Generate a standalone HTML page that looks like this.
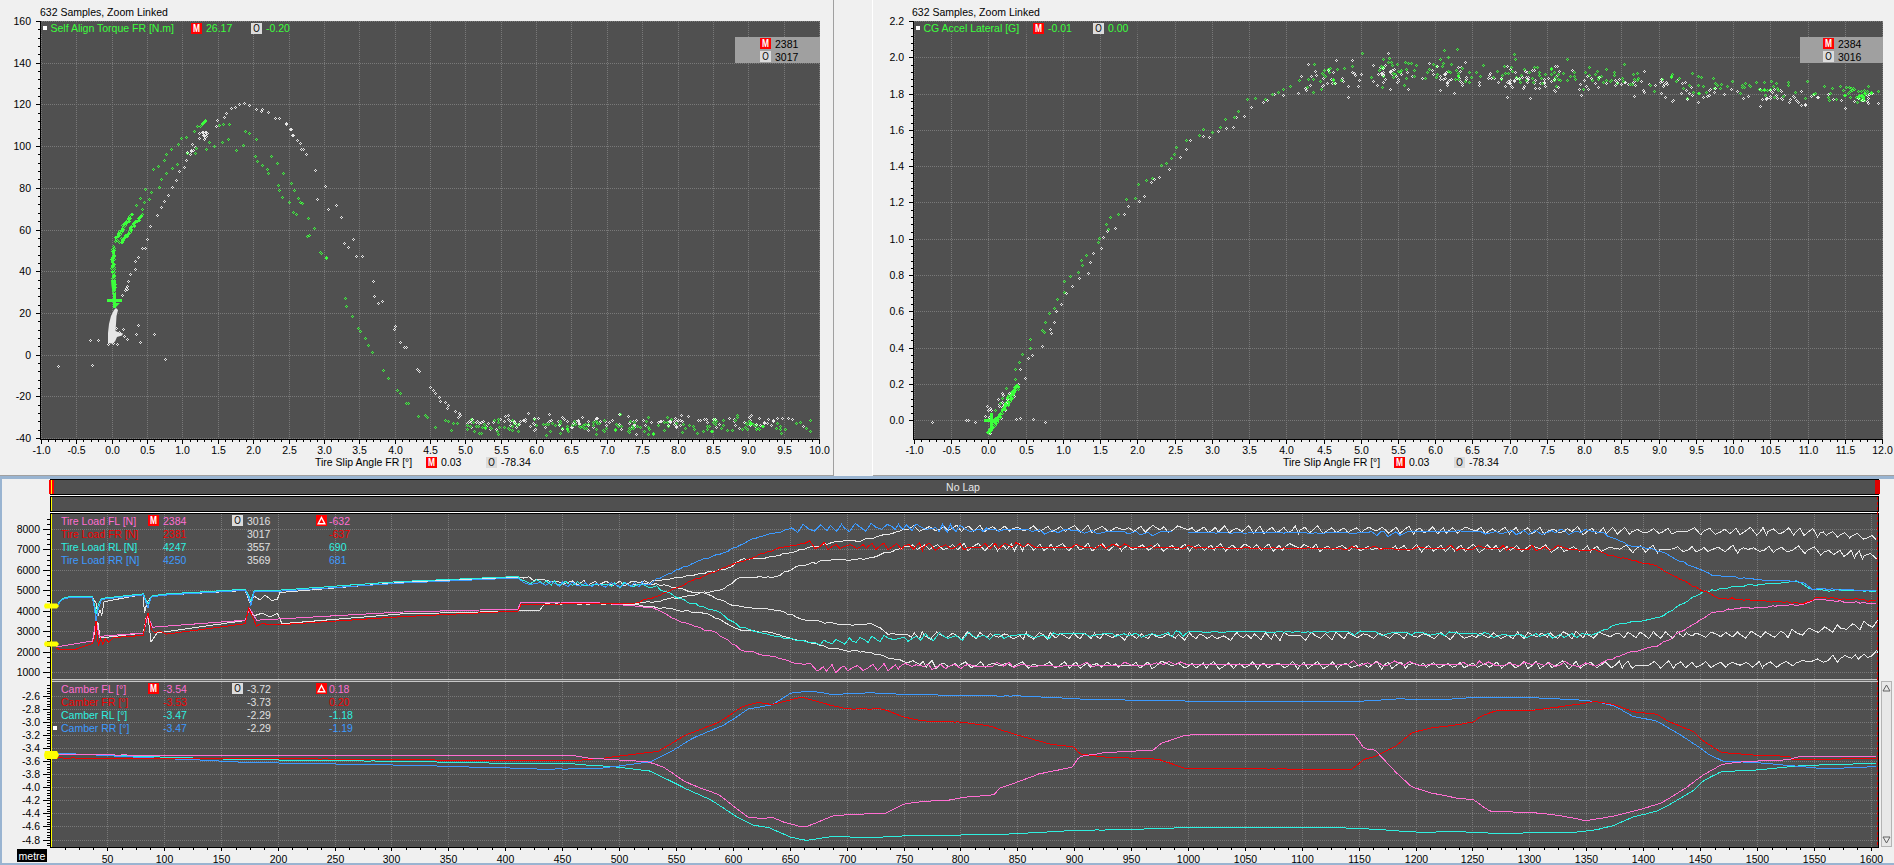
<!DOCTYPE html><html><head><meta charset="utf-8"><style>html,body{margin:0;padding:0;background:#f0f0f0;width:1894px;height:865px;overflow:hidden}svg{display:block}</style></head><body>
<svg width="1894" height="865" viewBox="0 0 1894 865" font-family="Liberation Sans, sans-serif">
<rect x="0" y="0" width="1894" height="865" fill="#f0f0f0"/>
<rect x="41" y="21" width="779" height="418" fill="#505050"/>
<path d="M41.5 22V439" stroke="#797979" stroke-dasharray="1 1"/>
<path d="M76.5 22V439" stroke="#797979" stroke-dasharray="1 1"/>
<path d="M112.5 22V439" stroke="#797979" stroke-dasharray="1 1"/>
<path d="M147.5 22V439" stroke="#797979" stroke-dasharray="1 1"/>
<path d="M182.5 22V439" stroke="#797979" stroke-dasharray="1 1"/>
<path d="M218.5 22V439" stroke="#797979" stroke-dasharray="1 1"/>
<path d="M253.5 22V439" stroke="#797979" stroke-dasharray="1 1"/>
<path d="M289.5 22V439" stroke="#797979" stroke-dasharray="1 1"/>
<path d="M324.5 22V439" stroke="#797979" stroke-dasharray="1 1"/>
<path d="M359.5 22V439" stroke="#797979" stroke-dasharray="1 1"/>
<path d="M395.5 22V439" stroke="#797979" stroke-dasharray="1 1"/>
<path d="M430.5 22V439" stroke="#797979" stroke-dasharray="1 1"/>
<path d="M465.5 22V439" stroke="#797979" stroke-dasharray="1 1"/>
<path d="M501.5 22V439" stroke="#797979" stroke-dasharray="1 1"/>
<path d="M536.5 22V439" stroke="#797979" stroke-dasharray="1 1"/>
<path d="M571.5 22V439" stroke="#797979" stroke-dasharray="1 1"/>
<path d="M607.5 22V439" stroke="#797979" stroke-dasharray="1 1"/>
<path d="M642.5 22V439" stroke="#797979" stroke-dasharray="1 1"/>
<path d="M678.5 22V439" stroke="#797979" stroke-dasharray="1 1"/>
<path d="M713.5 22V439" stroke="#797979" stroke-dasharray="1 1"/>
<path d="M748.5 22V439" stroke="#797979" stroke-dasharray="1 1"/>
<path d="M784.5 22V439" stroke="#797979" stroke-dasharray="1 1"/>
<path d="M819.5 22V439" stroke="#797979" stroke-dasharray="1 1"/>
<path d="M42 21.5H820" stroke="#797979" stroke-dasharray="1 1"/>
<path d="M42 63.5H820" stroke="#797979" stroke-dasharray="1 1"/>
<path d="M42 104.5H820" stroke="#797979" stroke-dasharray="1 1"/>
<path d="M42 146.5H820" stroke="#797979" stroke-dasharray="1 1"/>
<path d="M42 188.5H820" stroke="#797979" stroke-dasharray="1 1"/>
<path d="M42 230.5H820" stroke="#797979" stroke-dasharray="1 1"/>
<path d="M42 271.5H820" stroke="#797979" stroke-dasharray="1 1"/>
<path d="M42 313.5H820" stroke="#797979" stroke-dasharray="1 1"/>
<path d="M42 355.5H820" stroke="#797979" stroke-dasharray="1 1"/>
<path d="M42 396.5H820" stroke="#797979" stroke-dasharray="1 1"/>
<path d="M42 438.5H820" stroke="#797979" stroke-dasharray="1 1"/>
<rect x="40" y="21" width="1" height="419" fill="#000"/>
<rect x="40" y="439" width="780" height="1" fill="#000"/>
<rect x="41" y="440" width="1" height="4" fill="#000"/>
<text x="41.5" y="454" fill="#000" font-size="10.5" text-anchor="middle">-1.0</text>
<rect x="48" y="440" width="1" height="2" fill="#000"/>
<rect x="55" y="440" width="1" height="2" fill="#000"/>
<rect x="62" y="440" width="1" height="2" fill="#000"/>
<rect x="69" y="440" width="1" height="2" fill="#000"/>
<rect x="76" y="440" width="1" height="4" fill="#000"/>
<text x="76.5" y="454" fill="#000" font-size="10.5" text-anchor="middle">-0.5</text>
<rect x="83" y="440" width="1" height="2" fill="#000"/>
<rect x="91" y="440" width="1" height="2" fill="#000"/>
<rect x="98" y="440" width="1" height="2" fill="#000"/>
<rect x="105" y="440" width="1" height="2" fill="#000"/>
<rect x="112" y="440" width="1" height="4" fill="#000"/>
<text x="112.5" y="454" fill="#000" font-size="10.5" text-anchor="middle">0.0</text>
<rect x="119" y="440" width="1" height="2" fill="#000"/>
<rect x="126" y="440" width="1" height="2" fill="#000"/>
<rect x="133" y="440" width="1" height="2" fill="#000"/>
<rect x="140" y="440" width="1" height="2" fill="#000"/>
<rect x="147" y="440" width="1" height="4" fill="#000"/>
<text x="147.5" y="454" fill="#000" font-size="10.5" text-anchor="middle">0.5</text>
<rect x="154" y="440" width="1" height="2" fill="#000"/>
<rect x="161" y="440" width="1" height="2" fill="#000"/>
<rect x="168" y="440" width="1" height="2" fill="#000"/>
<rect x="175" y="440" width="1" height="2" fill="#000"/>
<rect x="182" y="440" width="1" height="4" fill="#000"/>
<text x="182.5" y="454" fill="#000" font-size="10.5" text-anchor="middle">1.0</text>
<rect x="190" y="440" width="1" height="2" fill="#000"/>
<rect x="197" y="440" width="1" height="2" fill="#000"/>
<rect x="204" y="440" width="1" height="2" fill="#000"/>
<rect x="211" y="440" width="1" height="2" fill="#000"/>
<rect x="218" y="440" width="1" height="4" fill="#000"/>
<text x="218.5" y="454" fill="#000" font-size="10.5" text-anchor="middle">1.5</text>
<rect x="225" y="440" width="1" height="2" fill="#000"/>
<rect x="232" y="440" width="1" height="2" fill="#000"/>
<rect x="239" y="440" width="1" height="2" fill="#000"/>
<rect x="246" y="440" width="1" height="2" fill="#000"/>
<rect x="253" y="440" width="1" height="4" fill="#000"/>
<text x="253.5" y="454" fill="#000" font-size="10.5" text-anchor="middle">2.0</text>
<rect x="260" y="440" width="1" height="2" fill="#000"/>
<rect x="267" y="440" width="1" height="2" fill="#000"/>
<rect x="274" y="440" width="1" height="2" fill="#000"/>
<rect x="281" y="440" width="1" height="2" fill="#000"/>
<rect x="289" y="440" width="1" height="4" fill="#000"/>
<text x="289.5" y="454" fill="#000" font-size="10.5" text-anchor="middle">2.5</text>
<rect x="296" y="440" width="1" height="2" fill="#000"/>
<rect x="303" y="440" width="1" height="2" fill="#000"/>
<rect x="310" y="440" width="1" height="2" fill="#000"/>
<rect x="317" y="440" width="1" height="2" fill="#000"/>
<rect x="324" y="440" width="1" height="4" fill="#000"/>
<text x="324.5" y="454" fill="#000" font-size="10.5" text-anchor="middle">3.0</text>
<rect x="331" y="440" width="1" height="2" fill="#000"/>
<rect x="338" y="440" width="1" height="2" fill="#000"/>
<rect x="345" y="440" width="1" height="2" fill="#000"/>
<rect x="352" y="440" width="1" height="2" fill="#000"/>
<rect x="359" y="440" width="1" height="4" fill="#000"/>
<text x="359.5" y="454" fill="#000" font-size="10.5" text-anchor="middle">3.5</text>
<rect x="366" y="440" width="1" height="2" fill="#000"/>
<rect x="373" y="440" width="1" height="2" fill="#000"/>
<rect x="380" y="440" width="1" height="2" fill="#000"/>
<rect x="388" y="440" width="1" height="2" fill="#000"/>
<rect x="395" y="440" width="1" height="4" fill="#000"/>
<text x="395.5" y="454" fill="#000" font-size="10.5" text-anchor="middle">4.0</text>
<rect x="402" y="440" width="1" height="2" fill="#000"/>
<rect x="409" y="440" width="1" height="2" fill="#000"/>
<rect x="416" y="440" width="1" height="2" fill="#000"/>
<rect x="423" y="440" width="1" height="2" fill="#000"/>
<rect x="430" y="440" width="1" height="4" fill="#000"/>
<text x="430.5" y="454" fill="#000" font-size="10.5" text-anchor="middle">4.5</text>
<rect x="437" y="440" width="1" height="2" fill="#000"/>
<rect x="444" y="440" width="1" height="2" fill="#000"/>
<rect x="451" y="440" width="1" height="2" fill="#000"/>
<rect x="458" y="440" width="1" height="2" fill="#000"/>
<rect x="465" y="440" width="1" height="4" fill="#000"/>
<text x="465.5" y="454" fill="#000" font-size="10.5" text-anchor="middle">5.0</text>
<rect x="472" y="440" width="1" height="2" fill="#000"/>
<rect x="480" y="440" width="1" height="2" fill="#000"/>
<rect x="487" y="440" width="1" height="2" fill="#000"/>
<rect x="494" y="440" width="1" height="2" fill="#000"/>
<rect x="501" y="440" width="1" height="4" fill="#000"/>
<text x="501.5" y="454" fill="#000" font-size="10.5" text-anchor="middle">5.5</text>
<rect x="508" y="440" width="1" height="2" fill="#000"/>
<rect x="515" y="440" width="1" height="2" fill="#000"/>
<rect x="522" y="440" width="1" height="2" fill="#000"/>
<rect x="529" y="440" width="1" height="2" fill="#000"/>
<rect x="536" y="440" width="1" height="4" fill="#000"/>
<text x="536.5" y="454" fill="#000" font-size="10.5" text-anchor="middle">6.0</text>
<rect x="543" y="440" width="1" height="2" fill="#000"/>
<rect x="550" y="440" width="1" height="2" fill="#000"/>
<rect x="557" y="440" width="1" height="2" fill="#000"/>
<rect x="564" y="440" width="1" height="2" fill="#000"/>
<rect x="571" y="440" width="1" height="4" fill="#000"/>
<text x="571.5" y="454" fill="#000" font-size="10.5" text-anchor="middle">6.5</text>
<rect x="579" y="440" width="1" height="2" fill="#000"/>
<rect x="586" y="440" width="1" height="2" fill="#000"/>
<rect x="593" y="440" width="1" height="2" fill="#000"/>
<rect x="600" y="440" width="1" height="2" fill="#000"/>
<rect x="607" y="440" width="1" height="4" fill="#000"/>
<text x="607.5" y="454" fill="#000" font-size="10.5" text-anchor="middle">7.0</text>
<rect x="614" y="440" width="1" height="2" fill="#000"/>
<rect x="621" y="440" width="1" height="2" fill="#000"/>
<rect x="628" y="440" width="1" height="2" fill="#000"/>
<rect x="635" y="440" width="1" height="2" fill="#000"/>
<rect x="642" y="440" width="1" height="4" fill="#000"/>
<text x="642.5" y="454" fill="#000" font-size="10.5" text-anchor="middle">7.5</text>
<rect x="649" y="440" width="1" height="2" fill="#000"/>
<rect x="656" y="440" width="1" height="2" fill="#000"/>
<rect x="663" y="440" width="1" height="2" fill="#000"/>
<rect x="670" y="440" width="1" height="2" fill="#000"/>
<rect x="678" y="440" width="1" height="4" fill="#000"/>
<text x="678.5" y="454" fill="#000" font-size="10.5" text-anchor="middle">8.0</text>
<rect x="685" y="440" width="1" height="2" fill="#000"/>
<rect x="692" y="440" width="1" height="2" fill="#000"/>
<rect x="699" y="440" width="1" height="2" fill="#000"/>
<rect x="706" y="440" width="1" height="2" fill="#000"/>
<rect x="713" y="440" width="1" height="4" fill="#000"/>
<text x="713.5" y="454" fill="#000" font-size="10.5" text-anchor="middle">8.5</text>
<rect x="720" y="440" width="1" height="2" fill="#000"/>
<rect x="727" y="440" width="1" height="2" fill="#000"/>
<rect x="734" y="440" width="1" height="2" fill="#000"/>
<rect x="741" y="440" width="1" height="2" fill="#000"/>
<rect x="748" y="440" width="1" height="4" fill="#000"/>
<text x="748.5" y="454" fill="#000" font-size="10.5" text-anchor="middle">9.0</text>
<rect x="755" y="440" width="1" height="2" fill="#000"/>
<rect x="762" y="440" width="1" height="2" fill="#000"/>
<rect x="769" y="440" width="1" height="2" fill="#000"/>
<rect x="777" y="440" width="1" height="2" fill="#000"/>
<rect x="784" y="440" width="1" height="4" fill="#000"/>
<text x="784.5" y="454" fill="#000" font-size="10.5" text-anchor="middle">9.5</text>
<rect x="791" y="440" width="1" height="2" fill="#000"/>
<rect x="798" y="440" width="1" height="2" fill="#000"/>
<rect x="805" y="440" width="1" height="2" fill="#000"/>
<rect x="812" y="440" width="1" height="2" fill="#000"/>
<rect x="819" y="440" width="1" height="4" fill="#000"/>
<text x="819.5" y="454" fill="#000" font-size="10.5" text-anchor="middle">10.0</text>
<rect x="36" y="21" width="4" height="1" fill="#000"/>
<text x="31" y="25" fill="#000" font-size="10.5" text-anchor="end">160</text>
<rect x="38" y="29" width="2" height="1" fill="#000"/>
<rect x="38" y="38" width="2" height="1" fill="#000"/>
<rect x="38" y="46" width="2" height="1" fill="#000"/>
<rect x="38" y="54" width="2" height="1" fill="#000"/>
<rect x="36" y="63" width="4" height="1" fill="#000"/>
<text x="31" y="67" fill="#000" font-size="10.5" text-anchor="end">140</text>
<rect x="38" y="71" width="2" height="1" fill="#000"/>
<rect x="38" y="79" width="2" height="1" fill="#000"/>
<rect x="38" y="88" width="2" height="1" fill="#000"/>
<rect x="38" y="96" width="2" height="1" fill="#000"/>
<rect x="36" y="104" width="4" height="1" fill="#000"/>
<text x="31" y="108" fill="#000" font-size="10.5" text-anchor="end">120</text>
<rect x="38" y="113" width="2" height="1" fill="#000"/>
<rect x="38" y="121" width="2" height="1" fill="#000"/>
<rect x="38" y="129" width="2" height="1" fill="#000"/>
<rect x="38" y="138" width="2" height="1" fill="#000"/>
<rect x="36" y="146" width="4" height="1" fill="#000"/>
<text x="31" y="150" fill="#000" font-size="10.5" text-anchor="end">100</text>
<rect x="38" y="154" width="2" height="1" fill="#000"/>
<rect x="38" y="163" width="2" height="1" fill="#000"/>
<rect x="38" y="171" width="2" height="1" fill="#000"/>
<rect x="38" y="179" width="2" height="1" fill="#000"/>
<rect x="36" y="188" width="4" height="1" fill="#000"/>
<text x="31" y="192" fill="#000" font-size="10.5" text-anchor="end">80</text>
<rect x="38" y="196" width="2" height="1" fill="#000"/>
<rect x="38" y="204" width="2" height="1" fill="#000"/>
<rect x="38" y="213" width="2" height="1" fill="#000"/>
<rect x="38" y="221" width="2" height="1" fill="#000"/>
<rect x="36" y="230" width="4" height="1" fill="#000"/>
<text x="31" y="234" fill="#000" font-size="10.5" text-anchor="end">60</text>
<rect x="38" y="238" width="2" height="1" fill="#000"/>
<rect x="38" y="246" width="2" height="1" fill="#000"/>
<rect x="38" y="255" width="2" height="1" fill="#000"/>
<rect x="38" y="263" width="2" height="1" fill="#000"/>
<rect x="36" y="271" width="4" height="1" fill="#000"/>
<text x="31" y="275" fill="#000" font-size="10.5" text-anchor="end">40</text>
<rect x="38" y="280" width="2" height="1" fill="#000"/>
<rect x="38" y="288" width="2" height="1" fill="#000"/>
<rect x="38" y="296" width="2" height="1" fill="#000"/>
<rect x="38" y="305" width="2" height="1" fill="#000"/>
<rect x="36" y="313" width="4" height="1" fill="#000"/>
<text x="31" y="317" fill="#000" font-size="10.5" text-anchor="end">20</text>
<rect x="38" y="321" width="2" height="1" fill="#000"/>
<rect x="38" y="330" width="2" height="1" fill="#000"/>
<rect x="38" y="338" width="2" height="1" fill="#000"/>
<rect x="38" y="346" width="2" height="1" fill="#000"/>
<rect x="36" y="355" width="4" height="1" fill="#000"/>
<text x="31" y="359" fill="#000" font-size="10.5" text-anchor="end">0</text>
<rect x="38" y="363" width="2" height="1" fill="#000"/>
<rect x="38" y="371" width="2" height="1" fill="#000"/>
<rect x="38" y="380" width="2" height="1" fill="#000"/>
<rect x="38" y="388" width="2" height="1" fill="#000"/>
<rect x="36" y="396" width="4" height="1" fill="#000"/>
<text x="31" y="400" fill="#000" font-size="10.5" text-anchor="end">-20</text>
<rect x="38" y="405" width="2" height="1" fill="#000"/>
<rect x="38" y="413" width="2" height="1" fill="#000"/>
<rect x="38" y="421" width="2" height="1" fill="#000"/>
<rect x="38" y="430" width="2" height="1" fill="#000"/>
<rect x="36" y="438" width="4" height="1" fill="#000"/>
<text x="31" y="442" fill="#000" font-size="10.5" text-anchor="end">-40</text>
<text x="40" y="16" fill="#000" font-size="10.5" text-anchor="start">632 Samples, Zoom Linked</text>
<rect x="914" y="21" width="969" height="418" fill="#505050"/>
<path d="M914.5 22V439" stroke="#797979" stroke-dasharray="1 1"/>
<path d="M951.5 22V439" stroke="#797979" stroke-dasharray="1 1"/>
<path d="M988.5 22V439" stroke="#797979" stroke-dasharray="1 1"/>
<path d="M1026.5 22V439" stroke="#797979" stroke-dasharray="1 1"/>
<path d="M1063.5 22V439" stroke="#797979" stroke-dasharray="1 1"/>
<path d="M1100.5 22V439" stroke="#797979" stroke-dasharray="1 1"/>
<path d="M1137.5 22V439" stroke="#797979" stroke-dasharray="1 1"/>
<path d="M1175.5 22V439" stroke="#797979" stroke-dasharray="1 1"/>
<path d="M1212.5 22V439" stroke="#797979" stroke-dasharray="1 1"/>
<path d="M1249.5 22V439" stroke="#797979" stroke-dasharray="1 1"/>
<path d="M1286.5 22V439" stroke="#797979" stroke-dasharray="1 1"/>
<path d="M1324.5 22V439" stroke="#797979" stroke-dasharray="1 1"/>
<path d="M1361.5 22V439" stroke="#797979" stroke-dasharray="1 1"/>
<path d="M1398.5 22V439" stroke="#797979" stroke-dasharray="1 1"/>
<path d="M1435.5 22V439" stroke="#797979" stroke-dasharray="1 1"/>
<path d="M1472.5 22V439" stroke="#797979" stroke-dasharray="1 1"/>
<path d="M1510.5 22V439" stroke="#797979" stroke-dasharray="1 1"/>
<path d="M1547.5 22V439" stroke="#797979" stroke-dasharray="1 1"/>
<path d="M1584.5 22V439" stroke="#797979" stroke-dasharray="1 1"/>
<path d="M1621.5 22V439" stroke="#797979" stroke-dasharray="1 1"/>
<path d="M1659.5 22V439" stroke="#797979" stroke-dasharray="1 1"/>
<path d="M1696.5 22V439" stroke="#797979" stroke-dasharray="1 1"/>
<path d="M1733.5 22V439" stroke="#797979" stroke-dasharray="1 1"/>
<path d="M1770.5 22V439" stroke="#797979" stroke-dasharray="1 1"/>
<path d="M1808.5 22V439" stroke="#797979" stroke-dasharray="1 1"/>
<path d="M1845.5 22V439" stroke="#797979" stroke-dasharray="1 1"/>
<path d="M1882.5 22V439" stroke="#797979" stroke-dasharray="1 1"/>
<path d="M914 21.5H1883" stroke="#797979" stroke-dasharray="1 1"/>
<path d="M914 57.5H1883" stroke="#797979" stroke-dasharray="1 1"/>
<path d="M914 94.5H1883" stroke="#797979" stroke-dasharray="1 1"/>
<path d="M914 130.5H1883" stroke="#797979" stroke-dasharray="1 1"/>
<path d="M914 166.5H1883" stroke="#797979" stroke-dasharray="1 1"/>
<path d="M914 202.5H1883" stroke="#797979" stroke-dasharray="1 1"/>
<path d="M914 239.5H1883" stroke="#797979" stroke-dasharray="1 1"/>
<path d="M914 275.5H1883" stroke="#797979" stroke-dasharray="1 1"/>
<path d="M914 311.5H1883" stroke="#797979" stroke-dasharray="1 1"/>
<path d="M914 348.5H1883" stroke="#797979" stroke-dasharray="1 1"/>
<path d="M914 384.5H1883" stroke="#797979" stroke-dasharray="1 1"/>
<path d="M914 420.5H1883" stroke="#797979" stroke-dasharray="1 1"/>
<rect x="913" y="21" width="1" height="419" fill="#000"/>
<rect x="913" y="439" width="970" height="1" fill="#000"/>
<rect x="914" y="440" width="1" height="4" fill="#000"/>
<text x="914.5" y="454" fill="#000" font-size="10.5" text-anchor="middle">-1.0</text>
<rect x="921" y="440" width="1" height="2" fill="#000"/>
<rect x="929" y="440" width="1" height="2" fill="#000"/>
<rect x="936" y="440" width="1" height="2" fill="#000"/>
<rect x="944" y="440" width="1" height="2" fill="#000"/>
<rect x="951" y="440" width="1" height="4" fill="#000"/>
<text x="951.5" y="454" fill="#000" font-size="10.5" text-anchor="middle">-0.5</text>
<rect x="959" y="440" width="1" height="2" fill="#000"/>
<rect x="966" y="440" width="1" height="2" fill="#000"/>
<rect x="974" y="440" width="1" height="2" fill="#000"/>
<rect x="981" y="440" width="1" height="2" fill="#000"/>
<rect x="988" y="440" width="1" height="4" fill="#000"/>
<text x="988.5" y="454" fill="#000" font-size="10.5" text-anchor="middle">0.0</text>
<rect x="996" y="440" width="1" height="2" fill="#000"/>
<rect x="1003" y="440" width="1" height="2" fill="#000"/>
<rect x="1011" y="440" width="1" height="2" fill="#000"/>
<rect x="1018" y="440" width="1" height="2" fill="#000"/>
<rect x="1026" y="440" width="1" height="4" fill="#000"/>
<text x="1026.5" y="454" fill="#000" font-size="10.5" text-anchor="middle">0.5</text>
<rect x="1033" y="440" width="1" height="2" fill="#000"/>
<rect x="1041" y="440" width="1" height="2" fill="#000"/>
<rect x="1048" y="440" width="1" height="2" fill="#000"/>
<rect x="1055" y="440" width="1" height="2" fill="#000"/>
<rect x="1063" y="440" width="1" height="4" fill="#000"/>
<text x="1063.5" y="454" fill="#000" font-size="10.5" text-anchor="middle">1.0</text>
<rect x="1070" y="440" width="1" height="2" fill="#000"/>
<rect x="1078" y="440" width="1" height="2" fill="#000"/>
<rect x="1085" y="440" width="1" height="2" fill="#000"/>
<rect x="1093" y="440" width="1" height="2" fill="#000"/>
<rect x="1100" y="440" width="1" height="4" fill="#000"/>
<text x="1100.5" y="454" fill="#000" font-size="10.5" text-anchor="middle">1.5</text>
<rect x="1108" y="440" width="1" height="2" fill="#000"/>
<rect x="1115" y="440" width="1" height="2" fill="#000"/>
<rect x="1122" y="440" width="1" height="2" fill="#000"/>
<rect x="1130" y="440" width="1" height="2" fill="#000"/>
<rect x="1137" y="440" width="1" height="4" fill="#000"/>
<text x="1137.5" y="454" fill="#000" font-size="10.5" text-anchor="middle">2.0</text>
<rect x="1145" y="440" width="1" height="2" fill="#000"/>
<rect x="1152" y="440" width="1" height="2" fill="#000"/>
<rect x="1160" y="440" width="1" height="2" fill="#000"/>
<rect x="1167" y="440" width="1" height="2" fill="#000"/>
<rect x="1175" y="440" width="1" height="4" fill="#000"/>
<text x="1175.5" y="454" fill="#000" font-size="10.5" text-anchor="middle">2.5</text>
<rect x="1182" y="440" width="1" height="2" fill="#000"/>
<rect x="1190" y="440" width="1" height="2" fill="#000"/>
<rect x="1197" y="440" width="1" height="2" fill="#000"/>
<rect x="1204" y="440" width="1" height="2" fill="#000"/>
<rect x="1212" y="440" width="1" height="4" fill="#000"/>
<text x="1212.5" y="454" fill="#000" font-size="10.5" text-anchor="middle">3.0</text>
<rect x="1219" y="440" width="1" height="2" fill="#000"/>
<rect x="1227" y="440" width="1" height="2" fill="#000"/>
<rect x="1234" y="440" width="1" height="2" fill="#000"/>
<rect x="1242" y="440" width="1" height="2" fill="#000"/>
<rect x="1249" y="440" width="1" height="4" fill="#000"/>
<text x="1249.5" y="454" fill="#000" font-size="10.5" text-anchor="middle">3.5</text>
<rect x="1257" y="440" width="1" height="2" fill="#000"/>
<rect x="1264" y="440" width="1" height="2" fill="#000"/>
<rect x="1271" y="440" width="1" height="2" fill="#000"/>
<rect x="1279" y="440" width="1" height="2" fill="#000"/>
<rect x="1286" y="440" width="1" height="4" fill="#000"/>
<text x="1286.5" y="454" fill="#000" font-size="10.5" text-anchor="middle">4.0</text>
<rect x="1294" y="440" width="1" height="2" fill="#000"/>
<rect x="1301" y="440" width="1" height="2" fill="#000"/>
<rect x="1309" y="440" width="1" height="2" fill="#000"/>
<rect x="1316" y="440" width="1" height="2" fill="#000"/>
<rect x="1324" y="440" width="1" height="4" fill="#000"/>
<text x="1324.5" y="454" fill="#000" font-size="10.5" text-anchor="middle">4.5</text>
<rect x="1331" y="440" width="1" height="2" fill="#000"/>
<rect x="1338" y="440" width="1" height="2" fill="#000"/>
<rect x="1346" y="440" width="1" height="2" fill="#000"/>
<rect x="1353" y="440" width="1" height="2" fill="#000"/>
<rect x="1361" y="440" width="1" height="4" fill="#000"/>
<text x="1361.5" y="454" fill="#000" font-size="10.5" text-anchor="middle">5.0</text>
<rect x="1368" y="440" width="1" height="2" fill="#000"/>
<rect x="1376" y="440" width="1" height="2" fill="#000"/>
<rect x="1383" y="440" width="1" height="2" fill="#000"/>
<rect x="1391" y="440" width="1" height="2" fill="#000"/>
<rect x="1398" y="440" width="1" height="4" fill="#000"/>
<text x="1398.5" y="454" fill="#000" font-size="10.5" text-anchor="middle">5.5</text>
<rect x="1405" y="440" width="1" height="2" fill="#000"/>
<rect x="1413" y="440" width="1" height="2" fill="#000"/>
<rect x="1420" y="440" width="1" height="2" fill="#000"/>
<rect x="1428" y="440" width="1" height="2" fill="#000"/>
<rect x="1435" y="440" width="1" height="4" fill="#000"/>
<text x="1435.5" y="454" fill="#000" font-size="10.5" text-anchor="middle">6.0</text>
<rect x="1443" y="440" width="1" height="2" fill="#000"/>
<rect x="1450" y="440" width="1" height="2" fill="#000"/>
<rect x="1458" y="440" width="1" height="2" fill="#000"/>
<rect x="1465" y="440" width="1" height="2" fill="#000"/>
<rect x="1472" y="440" width="1" height="4" fill="#000"/>
<text x="1472.5" y="454" fill="#000" font-size="10.5" text-anchor="middle">6.5</text>
<rect x="1480" y="440" width="1" height="2" fill="#000"/>
<rect x="1487" y="440" width="1" height="2" fill="#000"/>
<rect x="1495" y="440" width="1" height="2" fill="#000"/>
<rect x="1502" y="440" width="1" height="2" fill="#000"/>
<rect x="1510" y="440" width="1" height="4" fill="#000"/>
<text x="1510.5" y="454" fill="#000" font-size="10.5" text-anchor="middle">7.0</text>
<rect x="1517" y="440" width="1" height="2" fill="#000"/>
<rect x="1525" y="440" width="1" height="2" fill="#000"/>
<rect x="1532" y="440" width="1" height="2" fill="#000"/>
<rect x="1539" y="440" width="1" height="2" fill="#000"/>
<rect x="1547" y="440" width="1" height="4" fill="#000"/>
<text x="1547.5" y="454" fill="#000" font-size="10.5" text-anchor="middle">7.5</text>
<rect x="1554" y="440" width="1" height="2" fill="#000"/>
<rect x="1562" y="440" width="1" height="2" fill="#000"/>
<rect x="1569" y="440" width="1" height="2" fill="#000"/>
<rect x="1577" y="440" width="1" height="2" fill="#000"/>
<rect x="1584" y="440" width="1" height="4" fill="#000"/>
<text x="1584.5" y="454" fill="#000" font-size="10.5" text-anchor="middle">8.0</text>
<rect x="1592" y="440" width="1" height="2" fill="#000"/>
<rect x="1599" y="440" width="1" height="2" fill="#000"/>
<rect x="1606" y="440" width="1" height="2" fill="#000"/>
<rect x="1614" y="440" width="1" height="2" fill="#000"/>
<rect x="1621" y="440" width="1" height="4" fill="#000"/>
<text x="1621.5" y="454" fill="#000" font-size="10.5" text-anchor="middle">8.5</text>
<rect x="1629" y="440" width="1" height="2" fill="#000"/>
<rect x="1636" y="440" width="1" height="2" fill="#000"/>
<rect x="1644" y="440" width="1" height="2" fill="#000"/>
<rect x="1651" y="440" width="1" height="2" fill="#000"/>
<rect x="1659" y="440" width="1" height="4" fill="#000"/>
<text x="1659.5" y="454" fill="#000" font-size="10.5" text-anchor="middle">9.0</text>
<rect x="1666" y="440" width="1" height="2" fill="#000"/>
<rect x="1674" y="440" width="1" height="2" fill="#000"/>
<rect x="1681" y="440" width="1" height="2" fill="#000"/>
<rect x="1688" y="440" width="1" height="2" fill="#000"/>
<rect x="1696" y="440" width="1" height="4" fill="#000"/>
<text x="1696.5" y="454" fill="#000" font-size="10.5" text-anchor="middle">9.5</text>
<rect x="1703" y="440" width="1" height="2" fill="#000"/>
<rect x="1711" y="440" width="1" height="2" fill="#000"/>
<rect x="1718" y="440" width="1" height="2" fill="#000"/>
<rect x="1726" y="440" width="1" height="2" fill="#000"/>
<rect x="1733" y="440" width="1" height="4" fill="#000"/>
<text x="1733.5" y="454" fill="#000" font-size="10.5" text-anchor="middle">10.0</text>
<rect x="1741" y="440" width="1" height="2" fill="#000"/>
<rect x="1748" y="440" width="1" height="2" fill="#000"/>
<rect x="1755" y="440" width="1" height="2" fill="#000"/>
<rect x="1763" y="440" width="1" height="2" fill="#000"/>
<rect x="1770" y="440" width="1" height="4" fill="#000"/>
<text x="1770.5" y="454" fill="#000" font-size="10.5" text-anchor="middle">10.5</text>
<rect x="1778" y="440" width="1" height="2" fill="#000"/>
<rect x="1785" y="440" width="1" height="2" fill="#000"/>
<rect x="1793" y="440" width="1" height="2" fill="#000"/>
<rect x="1800" y="440" width="1" height="2" fill="#000"/>
<rect x="1808" y="440" width="1" height="4" fill="#000"/>
<text x="1808.5" y="454" fill="#000" font-size="10.5" text-anchor="middle">11.0</text>
<rect x="1815" y="440" width="1" height="2" fill="#000"/>
<rect x="1822" y="440" width="1" height="2" fill="#000"/>
<rect x="1830" y="440" width="1" height="2" fill="#000"/>
<rect x="1837" y="440" width="1" height="2" fill="#000"/>
<rect x="1845" y="440" width="1" height="4" fill="#000"/>
<text x="1845.5" y="454" fill="#000" font-size="10.5" text-anchor="middle">11.5</text>
<rect x="1852" y="440" width="1" height="2" fill="#000"/>
<rect x="1860" y="440" width="1" height="2" fill="#000"/>
<rect x="1867" y="440" width="1" height="2" fill="#000"/>
<rect x="1875" y="440" width="1" height="2" fill="#000"/>
<rect x="1882" y="440" width="1" height="4" fill="#000"/>
<text x="1882.5" y="454" fill="#000" font-size="10.5" text-anchor="middle">12.0</text>
<rect x="909" y="21" width="4" height="1" fill="#000"/>
<text x="904" y="25" fill="#000" font-size="10.5" text-anchor="end">2.2</text>
<rect x="911" y="28" width="2" height="1" fill="#000"/>
<rect x="911" y="36" width="2" height="1" fill="#000"/>
<rect x="911" y="43" width="2" height="1" fill="#000"/>
<rect x="911" y="50" width="2" height="1" fill="#000"/>
<rect x="909" y="57" width="4" height="1" fill="#000"/>
<text x="904" y="61" fill="#000" font-size="10.5" text-anchor="end">2.0</text>
<rect x="911" y="65" width="2" height="1" fill="#000"/>
<rect x="911" y="72" width="2" height="1" fill="#000"/>
<rect x="911" y="79" width="2" height="1" fill="#000"/>
<rect x="911" y="86" width="2" height="1" fill="#000"/>
<rect x="909" y="94" width="4" height="1" fill="#000"/>
<text x="904" y="98" fill="#000" font-size="10.5" text-anchor="end">1.8</text>
<rect x="911" y="101" width="2" height="1" fill="#000"/>
<rect x="911" y="108" width="2" height="1" fill="#000"/>
<rect x="911" y="115" width="2" height="1" fill="#000"/>
<rect x="911" y="123" width="2" height="1" fill="#000"/>
<rect x="909" y="130" width="4" height="1" fill="#000"/>
<text x="904" y="134" fill="#000" font-size="10.5" text-anchor="end">1.6</text>
<rect x="911" y="137" width="2" height="1" fill="#000"/>
<rect x="911" y="144" width="2" height="1" fill="#000"/>
<rect x="911" y="152" width="2" height="1" fill="#000"/>
<rect x="911" y="159" width="2" height="1" fill="#000"/>
<rect x="909" y="166" width="4" height="1" fill="#000"/>
<text x="904" y="170" fill="#000" font-size="10.5" text-anchor="end">1.4</text>
<rect x="911" y="173" width="2" height="1" fill="#000"/>
<rect x="911" y="181" width="2" height="1" fill="#000"/>
<rect x="911" y="188" width="2" height="1" fill="#000"/>
<rect x="911" y="195" width="2" height="1" fill="#000"/>
<rect x="909" y="202" width="4" height="1" fill="#000"/>
<text x="904" y="206" fill="#000" font-size="10.5" text-anchor="end">1.2</text>
<rect x="911" y="210" width="2" height="1" fill="#000"/>
<rect x="911" y="217" width="2" height="1" fill="#000"/>
<rect x="911" y="224" width="2" height="1" fill="#000"/>
<rect x="911" y="232" width="2" height="1" fill="#000"/>
<rect x="909" y="239" width="4" height="1" fill="#000"/>
<text x="904" y="243" fill="#000" font-size="10.5" text-anchor="end">1.0</text>
<rect x="911" y="246" width="2" height="1" fill="#000"/>
<rect x="911" y="253" width="2" height="1" fill="#000"/>
<rect x="911" y="261" width="2" height="1" fill="#000"/>
<rect x="911" y="268" width="2" height="1" fill="#000"/>
<rect x="909" y="275" width="4" height="1" fill="#000"/>
<text x="904" y="279" fill="#000" font-size="10.5" text-anchor="end">0.8</text>
<rect x="911" y="282" width="2" height="1" fill="#000"/>
<rect x="911" y="290" width="2" height="1" fill="#000"/>
<rect x="911" y="297" width="2" height="1" fill="#000"/>
<rect x="911" y="304" width="2" height="1" fill="#000"/>
<rect x="909" y="311" width="4" height="1" fill="#000"/>
<text x="904" y="315" fill="#000" font-size="10.5" text-anchor="end">0.6</text>
<rect x="911" y="319" width="2" height="1" fill="#000"/>
<rect x="911" y="326" width="2" height="1" fill="#000"/>
<rect x="911" y="333" width="2" height="1" fill="#000"/>
<rect x="911" y="340" width="2" height="1" fill="#000"/>
<rect x="909" y="348" width="4" height="1" fill="#000"/>
<text x="904" y="352" fill="#000" font-size="10.5" text-anchor="end">0.4</text>
<rect x="911" y="355" width="2" height="1" fill="#000"/>
<rect x="911" y="362" width="2" height="1" fill="#000"/>
<rect x="911" y="369" width="2" height="1" fill="#000"/>
<rect x="911" y="377" width="2" height="1" fill="#000"/>
<rect x="909" y="384" width="4" height="1" fill="#000"/>
<text x="904" y="388" fill="#000" font-size="10.5" text-anchor="end">0.2</text>
<rect x="911" y="391" width="2" height="1" fill="#000"/>
<rect x="911" y="399" width="2" height="1" fill="#000"/>
<rect x="911" y="406" width="2" height="1" fill="#000"/>
<rect x="911" y="413" width="2" height="1" fill="#000"/>
<rect x="909" y="420" width="4" height="1" fill="#000"/>
<text x="904" y="424" fill="#000" font-size="10.5" text-anchor="end">0.0</text>
<text x="912" y="16" fill="#000" font-size="10.5" text-anchor="start">632 Samples, Zoom Linked</text>
<path d="M122 294h1v1h-1zm-1 1h1v1h-1zm2 0h1v1h-1zm-1 1h1v1h-1zM127 288h1v1h-1zm-1 1h1v1h-1zm2 0h1v1h-1zm-1 1h1v1h-1zM128 280h1v1h-1zm-1 1h1v1h-1zm2 0h1v1h-1zm-1 1h1v1h-1zM130 273h1v1h-1zm-1 1h1v1h-1zm2 0h1v1h-1zm-1 1h1v1h-1zM135 268h1v1h-1zm-1 1h1v1h-1zm2 0h1v1h-1zm-1 1h1v1h-1zM135 260h1v1h-1zm-1 1h1v1h-1zm2 0h1v1h-1zm-1 1h1v1h-1zM138 256h1v1h-1zm-1 1h1v1h-1zm2 0h1v1h-1zm-1 1h1v1h-1zM142 247h1v1h-1zm-1 1h1v1h-1zm2 0h1v1h-1zm-1 1h1v1h-1zM145 247h1v1h-1zm-1 1h1v1h-1zm2 0h1v1h-1zm-1 1h1v1h-1zM147 238h1v1h-1zm-1 1h1v1h-1zm2 0h1v1h-1zm-1 1h1v1h-1zM150 225h1v1h-1zm-1 1h1v1h-1zm2 0h1v1h-1zm-1 1h1v1h-1zM157 214h1v1h-1zm-1 1h1v1h-1zm2 0h1v1h-1zm-1 1h1v1h-1zM161 206h1v1h-1zm-1 1h1v1h-1zm2 0h1v1h-1zm-1 1h1v1h-1zM164 200h1v1h-1zm-1 1h1v1h-1zm2 0h1v1h-1zm-1 1h1v1h-1zM168 194h1v1h-1zm-1 1h1v1h-1zm2 0h1v1h-1zm-1 1h1v1h-1zM172 186h1v1h-1zm-1 1h1v1h-1zm2 0h1v1h-1zm-1 1h1v1h-1zM176 179h1v1h-1zm-1 1h1v1h-1zm2 0h1v1h-1zm-1 1h1v1h-1zM179 170h1v1h-1zm-1 1h1v1h-1zm2 0h1v1h-1zm-1 1h1v1h-1zM184 166h1v1h-1zm-1 1h1v1h-1zm2 0h1v1h-1zm-1 1h1v1h-1zM186 159h1v1h-1zm-1 1h1v1h-1zm2 0h1v1h-1zm-1 1h1v1h-1zM187 151h1v1h-1zm-1 1h1v1h-1zm2 0h1v1h-1zm-1 1h1v1h-1zM192 143h1v1h-1zm-1 1h1v1h-1zm2 0h1v1h-1zm-1 1h1v1h-1zM199 137h1v1h-1zm-1 1h1v1h-1zm2 0h1v1h-1zm-1 1h1v1h-1zM206 131h1v1h-1zm-1 1h1v1h-1zm2 0h1v1h-1zm-1 1h1v1h-1zM216 125h1v1h-1zm-1 1h1v1h-1zm2 0h1v1h-1zm-1 1h1v1h-1zM217 119h1v1h-1zm-1 1h1v1h-1zm2 0h1v1h-1zm-1 1h1v1h-1zM224 116h1v1h-1zm-1 1h1v1h-1zm2 0h1v1h-1zm-1 1h1v1h-1zM226 112h1v1h-1zm-1 1h1v1h-1zm2 0h1v1h-1zm-1 1h1v1h-1zM231 107h1v1h-1zm-1 1h1v1h-1zm2 0h1v1h-1zm-1 1h1v1h-1zM235 106h1v1h-1zm-1 1h1v1h-1zm2 0h1v1h-1zm-1 1h1v1h-1zM239 103h1v1h-1zm-1 1h1v1h-1zm2 0h1v1h-1zm-1 1h1v1h-1zM244 102h1v1h-1zm-1 1h1v1h-1zm2 0h1v1h-1zm-1 1h1v1h-1zM249 104h1v1h-1zm-1 1h1v1h-1zm2 0h1v1h-1zm-1 1h1v1h-1zM256 108h1v1h-1zm-1 1h1v1h-1zm2 0h1v1h-1zm-1 1h1v1h-1zM262 108h1v1h-1zm-1 1h1v1h-1zm2 0h1v1h-1zm-1 1h1v1h-1zM261 110h1v1h-1zm-1 1h1v1h-1zm2 0h1v1h-1zm-1 1h1v1h-1zM268 111h1v1h-1zm-1 1h1v1h-1zm2 0h1v1h-1zm-1 1h1v1h-1zM275 117h1v1h-1zm-1 1h1v1h-1zm2 0h1v1h-1zm-1 1h1v1h-1zM279 117h1v1h-1zm-1 1h1v1h-1zm2 0h1v1h-1zm-1 1h1v1h-1zM286 122h1v1h-1zm-1 1h1v1h-1zm2 0h1v1h-1zm-1 1h1v1h-1zM290 128h1v1h-1zm-1 1h1v1h-1zm2 0h1v1h-1zm-1 1h1v1h-1zM293 134h1v1h-1zm-1 1h1v1h-1zm2 0h1v1h-1zm-1 1h1v1h-1zM297 139h1v1h-1zm-1 1h1v1h-1zm2 0h1v1h-1zm-1 1h1v1h-1zM300 142h1v1h-1zm-1 1h1v1h-1zm2 0h1v1h-1zm-1 1h1v1h-1zM301 148h1v1h-1zm-1 1h1v1h-1zm2 0h1v1h-1zm-1 1h1v1h-1zM303 148h1v1h-1zm-1 1h1v1h-1zm2 0h1v1h-1zm-1 1h1v1h-1zM306 153h1v1h-1zm-1 1h1v1h-1zm2 0h1v1h-1zm-1 1h1v1h-1zM315 169h1v1h-1zm-1 1h1v1h-1zm2 0h1v1h-1zm-1 1h1v1h-1zM325 185h1v1h-1zm-1 1h1v1h-1zm2 0h1v1h-1zm-1 1h1v1h-1zM317 198h1v1h-1zm-1 1h1v1h-1zm2 0h1v1h-1zm-1 1h1v1h-1zM328 208h1v1h-1zm-1 1h1v1h-1zm2 0h1v1h-1zm-1 1h1v1h-1zM336 204h1v1h-1zm-1 1h1v1h-1zm2 0h1v1h-1zm-1 1h1v1h-1zM341 216h1v1h-1zm-1 1h1v1h-1zm2 0h1v1h-1zm-1 1h1v1h-1zM353 238h1v1h-1zm-1 1h1v1h-1zm2 0h1v1h-1zm-1 1h1v1h-1zM344 242h1v1h-1zm-1 1h1v1h-1zm2 0h1v1h-1zm-1 1h1v1h-1zM348 246h1v1h-1zm-1 1h1v1h-1zm2 0h1v1h-1zm-1 1h1v1h-1zM356 255h1v1h-1zm-1 1h1v1h-1zm2 0h1v1h-1zm-1 1h1v1h-1zM362 255h1v1h-1zm-1 1h1v1h-1zm2 0h1v1h-1zm-1 1h1v1h-1zM373 280h1v1h-1zm-1 1h1v1h-1zm2 0h1v1h-1zm-1 1h1v1h-1zM374 295h1v1h-1zm-1 1h1v1h-1zm2 0h1v1h-1zm-1 1h1v1h-1zM378 302h1v1h-1zm-1 1h1v1h-1zm2 0h1v1h-1zm-1 1h1v1h-1zM382 300h1v1h-1zm-1 1h1v1h-1zm2 0h1v1h-1zm-1 1h1v1h-1zM395 325h1v1h-1zm-1 1h1v1h-1zm2 0h1v1h-1zm-1 1h1v1h-1zM394 328h1v1h-1zm-1 1h1v1h-1zm2 0h1v1h-1zm-1 1h1v1h-1zM400 341h1v1h-1zm-1 1h1v1h-1zm2 0h1v1h-1zm-1 1h1v1h-1zM404 346h1v1h-1zm-1 1h1v1h-1zm2 0h1v1h-1zm-1 1h1v1h-1zM406 346h1v1h-1zm-1 1h1v1h-1zm2 0h1v1h-1zm-1 1h1v1h-1zM417 368h1v1h-1zm-1 1h1v1h-1zm2 0h1v1h-1zm-1 1h1v1h-1zM419 370h1v1h-1zm-1 1h1v1h-1zm2 0h1v1h-1zm-1 1h1v1h-1zM430 386h1v1h-1zm-1 1h1v1h-1zm2 0h1v1h-1zm-1 1h1v1h-1zM433 389h1v1h-1zm-1 1h1v1h-1zm2 0h1v1h-1zm-1 1h1v1h-1zM435 392h1v1h-1zm-1 1h1v1h-1zm2 0h1v1h-1zm-1 1h1v1h-1zM439 396h1v1h-1zm-1 1h1v1h-1zm2 0h1v1h-1zm-1 1h1v1h-1zM440 400h1v1h-1zm-1 1h1v1h-1zm2 0h1v1h-1zm-1 1h1v1h-1zM445 401h1v1h-1zm-1 1h1v1h-1zm2 0h1v1h-1zm-1 1h1v1h-1zM448 404h1v1h-1zm-1 1h1v1h-1zm2 0h1v1h-1zm-1 1h1v1h-1zM447 407h1v1h-1zm-1 1h1v1h-1zm2 0h1v1h-1zm-1 1h1v1h-1zM455 410h1v1h-1zm-1 1h1v1h-1zm2 0h1v1h-1zm-1 1h1v1h-1zM459 412h1v1h-1zm-1 1h1v1h-1zm2 0h1v1h-1zm-1 1h1v1h-1zM460 414h1v1h-1zm-1 1h1v1h-1zm2 0h1v1h-1zm-1 1h1v1h-1zM458 416h1v1h-1zm-1 1h1v1h-1zm2 0h1v1h-1zm-1 1h1v1h-1zM467 422h1v1h-1zm-1 1h1v1h-1zm2 0h1v1h-1zm-1 1h1v1h-1zM205 131h1v1h-1zm-1 1h1v1h-1zm2 0h1v1h-1zm-1 1h1v1h-1zM205 133h1v1h-1zm-1 1h1v1h-1zm2 0h1v1h-1zm-1 1h1v1h-1zM206 135h1v1h-1zm-1 1h1v1h-1zm2 0h1v1h-1zm-1 1h1v1h-1zM202 131h1v1h-1zm-1 1h1v1h-1zm2 0h1v1h-1zm-1 1h1v1h-1zM204 134h1v1h-1zm-1 1h1v1h-1zm2 0h1v1h-1zm-1 1h1v1h-1zM207 132h1v1h-1zm-1 1h1v1h-1zm2 0h1v1h-1zm-1 1h1v1h-1zM204 135h1v1h-1zm-1 1h1v1h-1zm2 0h1v1h-1zm-1 1h1v1h-1zM203 134h1v1h-1zm-1 1h1v1h-1zm2 0h1v1h-1zm-1 1h1v1h-1zM203 131h1v1h-1zm-1 1h1v1h-1zm2 0h1v1h-1zm-1 1h1v1h-1zM199 132h1v1h-1zm-1 1h1v1h-1zm2 0h1v1h-1zm-1 1h1v1h-1zM204 138h1v1h-1zm-1 1h1v1h-1zm2 0h1v1h-1zm-1 1h1v1h-1zM205 136h1v1h-1zm-1 1h1v1h-1zm2 0h1v1h-1zm-1 1h1v1h-1zM193 149h1v1h-1zm-1 1h1v1h-1zm2 0h1v1h-1zm-1 1h1v1h-1zM191 149h1v1h-1zm-1 1h1v1h-1zm2 0h1v1h-1zm-1 1h1v1h-1zM195 146h1v1h-1zm-1 1h1v1h-1zm2 0h1v1h-1zm-1 1h1v1h-1zM190 153h1v1h-1zm-1 1h1v1h-1zm2 0h1v1h-1zm-1 1h1v1h-1zM191 150h1v1h-1zm-1 1h1v1h-1zm2 0h1v1h-1zm-1 1h1v1h-1zM286 123h1v1h-1zm-1 1h1v1h-1zm2 0h1v1h-1zm-1 1h1v1h-1zM291 128h1v1h-1zm-1 1h1v1h-1zm2 0h1v1h-1zm-1 1h1v1h-1zM292 134h1v1h-1zm-1 1h1v1h-1zm2 0h1v1h-1zm-1 1h1v1h-1zM488 422h1v1h-1zm-1 1h1v1h-1zm2 0h1v1h-1zm-1 1h1v1h-1zM755 425h1v1h-1zm-1 1h1v1h-1zm2 0h1v1h-1zm-1 1h1v1h-1zM674 420h1v1h-1zm-1 1h1v1h-1zm2 0h1v1h-1zm-1 1h1v1h-1zM534 429h1v1h-1zm-1 1h1v1h-1zm2 0h1v1h-1zm-1 1h1v1h-1zM471 421h1v1h-1zm-1 1h1v1h-1zm2 0h1v1h-1zm-1 1h1v1h-1zM486 425h1v1h-1zm-1 1h1v1h-1zm2 0h1v1h-1zm-1 1h1v1h-1zM525 418h1v1h-1zm-1 1h1v1h-1zm2 0h1v1h-1zm-1 1h1v1h-1zM510 424h1v1h-1zm-1 1h1v1h-1zm2 0h1v1h-1zm-1 1h1v1h-1zM588 429h1v1h-1zm-1 1h1v1h-1zm2 0h1v1h-1zm-1 1h1v1h-1zM688 415h1v1h-1zm-1 1h1v1h-1zm2 0h1v1h-1zm-1 1h1v1h-1zM700 419h1v1h-1zm-1 1h1v1h-1zm2 0h1v1h-1zm-1 1h1v1h-1zM477 420h1v1h-1zm-1 1h1v1h-1zm2 0h1v1h-1zm-1 1h1v1h-1zM471 426h1v1h-1zm-1 1h1v1h-1zm2 0h1v1h-1zm-1 1h1v1h-1zM792 418h1v1h-1zm-1 1h1v1h-1zm2 0h1v1h-1zm-1 1h1v1h-1zM472 418h1v1h-1zm-1 1h1v1h-1zm2 0h1v1h-1zm-1 1h1v1h-1zM713 418h1v1h-1zm-1 1h1v1h-1zm2 0h1v1h-1zm-1 1h1v1h-1zM573 422h1v1h-1zm-1 1h1v1h-1zm2 0h1v1h-1zm-1 1h1v1h-1zM651 421h1v1h-1zm-1 1h1v1h-1zm2 0h1v1h-1zm-1 1h1v1h-1zM716 426h1v1h-1zm-1 1h1v1h-1zm2 0h1v1h-1zm-1 1h1v1h-1zM704 418h1v1h-1zm-1 1h1v1h-1zm2 0h1v1h-1zm-1 1h1v1h-1zM735 424h1v1h-1zm-1 1h1v1h-1zm2 0h1v1h-1zm-1 1h1v1h-1zM698 419h1v1h-1zm-1 1h1v1h-1zm2 0h1v1h-1zm-1 1h1v1h-1zM771 424h1v1h-1zm-1 1h1v1h-1zm2 0h1v1h-1zm-1 1h1v1h-1zM734 418h1v1h-1zm-1 1h1v1h-1zm2 0h1v1h-1zm-1 1h1v1h-1zM759 417h1v1h-1zm-1 1h1v1h-1zm2 0h1v1h-1zm-1 1h1v1h-1zM595 419h1v1h-1zm-1 1h1v1h-1zm2 0h1v1h-1zm-1 1h1v1h-1zM663 420h1v1h-1zm-1 1h1v1h-1zm2 0h1v1h-1zm-1 1h1v1h-1zM682 420h1v1h-1zm-1 1h1v1h-1zm2 0h1v1h-1zm-1 1h1v1h-1zM803 425h1v1h-1zm-1 1h1v1h-1zm2 0h1v1h-1zm-1 1h1v1h-1zM597 417h1v1h-1zm-1 1h1v1h-1zm2 0h1v1h-1zm-1 1h1v1h-1zM715 418h1v1h-1zm-1 1h1v1h-1zm2 0h1v1h-1zm-1 1h1v1h-1zM750 419h1v1h-1zm-1 1h1v1h-1zm2 0h1v1h-1zm-1 1h1v1h-1zM493 421h1v1h-1zm-1 1h1v1h-1zm2 0h1v1h-1zm-1 1h1v1h-1zM669 420h1v1h-1zm-1 1h1v1h-1zm2 0h1v1h-1zm-1 1h1v1h-1zM629 422h1v1h-1zm-1 1h1v1h-1zm2 0h1v1h-1zm-1 1h1v1h-1zM634 426h1v1h-1zm-1 1h1v1h-1zm2 0h1v1h-1zm-1 1h1v1h-1zM674 423h1v1h-1zm-1 1h1v1h-1zm2 0h1v1h-1zm-1 1h1v1h-1zM469 420h1v1h-1zm-1 1h1v1h-1zm2 0h1v1h-1zm-1 1h1v1h-1zM567 420h1v1h-1zm-1 1h1v1h-1zm2 0h1v1h-1zm-1 1h1v1h-1zM523 419h1v1h-1zm-1 1h1v1h-1zm2 0h1v1h-1zm-1 1h1v1h-1zM773 419h1v1h-1zm-1 1h1v1h-1zm2 0h1v1h-1zm-1 1h1v1h-1zM768 418h1v1h-1zm-1 1h1v1h-1zm2 0h1v1h-1zm-1 1h1v1h-1zM576 420h1v1h-1zm-1 1h1v1h-1zm2 0h1v1h-1zm-1 1h1v1h-1zM612 419h1v1h-1zm-1 1h1v1h-1zm2 0h1v1h-1zm-1 1h1v1h-1zM739 427h1v1h-1zm-1 1h1v1h-1zm2 0h1v1h-1zm-1 1h1v1h-1zM596 417h1v1h-1zm-1 1h1v1h-1zm2 0h1v1h-1zm-1 1h1v1h-1zM663 420h1v1h-1zm-1 1h1v1h-1zm2 0h1v1h-1zm-1 1h1v1h-1zM634 423h1v1h-1zm-1 1h1v1h-1zm2 0h1v1h-1zm-1 1h1v1h-1zM750 424h1v1h-1zm-1 1h1v1h-1zm2 0h1v1h-1zm-1 1h1v1h-1zM788 417h1v1h-1zm-1 1h1v1h-1zm2 0h1v1h-1zm-1 1h1v1h-1zM559 423h1v1h-1zm-1 1h1v1h-1zm2 0h1v1h-1zm-1 1h1v1h-1zM559 424h1v1h-1zm-1 1h1v1h-1zm2 0h1v1h-1zm-1 1h1v1h-1zM538 417h1v1h-1zm-1 1h1v1h-1zm2 0h1v1h-1zm-1 1h1v1h-1zM633 424h1v1h-1zm-1 1h1v1h-1zm2 0h1v1h-1zm-1 1h1v1h-1zM572 426h1v1h-1zm-1 1h1v1h-1zm2 0h1v1h-1zm-1 1h1v1h-1zM619 413h1v1h-1zm-1 1h1v1h-1zm2 0h1v1h-1zm-1 1h1v1h-1zM490 428h1v1h-1zm-1 1h1v1h-1zm2 0h1v1h-1zm-1 1h1v1h-1zM479 422h1v1h-1zm-1 1h1v1h-1zm2 0h1v1h-1zm-1 1h1v1h-1zM706 418h1v1h-1zm-1 1h1v1h-1zm2 0h1v1h-1zm-1 1h1v1h-1zM734 420h1v1h-1zm-1 1h1v1h-1zm2 0h1v1h-1zm-1 1h1v1h-1zM760 424h1v1h-1zm-1 1h1v1h-1zm2 0h1v1h-1zm-1 1h1v1h-1zM767 422h1v1h-1zm-1 1h1v1h-1zm2 0h1v1h-1zm-1 1h1v1h-1zM756 423h1v1h-1zm-1 1h1v1h-1zm2 0h1v1h-1zm-1 1h1v1h-1zM764 422h1v1h-1zm-1 1h1v1h-1zm2 0h1v1h-1zm-1 1h1v1h-1zM747 423h1v1h-1zm-1 1h1v1h-1zm2 0h1v1h-1zm-1 1h1v1h-1zM749 416h1v1h-1zm-1 1h1v1h-1zm2 0h1v1h-1zm-1 1h1v1h-1zM678 419h1v1h-1zm-1 1h1v1h-1zm2 0h1v1h-1zm-1 1h1v1h-1zM670 421h1v1h-1zm-1 1h1v1h-1zm2 0h1v1h-1zm-1 1h1v1h-1zM707 421h1v1h-1zm-1 1h1v1h-1zm2 0h1v1h-1zm-1 1h1v1h-1zM680 419h1v1h-1zm-1 1h1v1h-1zm2 0h1v1h-1zm-1 1h1v1h-1zM680 424h1v1h-1zm-1 1h1v1h-1zm2 0h1v1h-1zm-1 1h1v1h-1zM675 417h1v1h-1zm-1 1h1v1h-1zm2 0h1v1h-1zm-1 1h1v1h-1zM500 418h1v1h-1zm-1 1h1v1h-1zm2 0h1v1h-1zm-1 1h1v1h-1zM508 414h1v1h-1zm-1 1h1v1h-1zm2 0h1v1h-1zm-1 1h1v1h-1zM530 425h1v1h-1zm-1 1h1v1h-1zm2 0h1v1h-1zm-1 1h1v1h-1zM551 419h1v1h-1zm-1 1h1v1h-1zm2 0h1v1h-1zm-1 1h1v1h-1zM508 418h1v1h-1zm-1 1h1v1h-1zm2 0h1v1h-1zm-1 1h1v1h-1zM549 413h1v1h-1zm-1 1h1v1h-1zm2 0h1v1h-1zm-1 1h1v1h-1zM515 422h1v1h-1zm-1 1h1v1h-1zm2 0h1v1h-1zm-1 1h1v1h-1zM545 426h1v1h-1zm-1 1h1v1h-1zm2 0h1v1h-1zm-1 1h1v1h-1zM534 417h1v1h-1zm-1 1h1v1h-1zm2 0h1v1h-1zm-1 1h1v1h-1zM562 428h1v1h-1zm-1 1h1v1h-1zm2 0h1v1h-1zm-1 1h1v1h-1zM605 420h1v1h-1zm-1 1h1v1h-1zm2 0h1v1h-1zm-1 1h1v1h-1zM520 420h1v1h-1zm-1 1h1v1h-1zm2 0h1v1h-1zm-1 1h1v1h-1zM535 428h1v1h-1zm-1 1h1v1h-1zm2 0h1v1h-1zm-1 1h1v1h-1zM564 418h1v1h-1zm-1 1h1v1h-1zm2 0h1v1h-1zm-1 1h1v1h-1zM719 423h1v1h-1zm-1 1h1v1h-1zm2 0h1v1h-1zm-1 1h1v1h-1zM729 417h1v1h-1zm-1 1h1v1h-1zm2 0h1v1h-1zm-1 1h1v1h-1zM578 420h1v1h-1zm-1 1h1v1h-1zm2 0h1v1h-1zm-1 1h1v1h-1zM578 419h1v1h-1zm-1 1h1v1h-1zm2 0h1v1h-1zm-1 1h1v1h-1zM571 426h1v1h-1zm-1 1h1v1h-1zm2 0h1v1h-1zm-1 1h1v1h-1zM579 423h1v1h-1zm-1 1h1v1h-1zm2 0h1v1h-1zm-1 1h1v1h-1zM567 420h1v1h-1zm-1 1h1v1h-1zm2 0h1v1h-1zm-1 1h1v1h-1zM582 416h1v1h-1zm-1 1h1v1h-1zm2 0h1v1h-1zm-1 1h1v1h-1zM514 421h1v1h-1zm-1 1h1v1h-1zm2 0h1v1h-1zm-1 1h1v1h-1zM579 422h1v1h-1zm-1 1h1v1h-1zm2 0h1v1h-1zm-1 1h1v1h-1zM548 421h1v1h-1zm-1 1h1v1h-1zm2 0h1v1h-1zm-1 1h1v1h-1zM562 416h1v1h-1zm-1 1h1v1h-1zm2 0h1v1h-1zm-1 1h1v1h-1zM525 420h1v1h-1zm-1 1h1v1h-1zm2 0h1v1h-1zm-1 1h1v1h-1zM549 420h1v1h-1zm-1 1h1v1h-1zm2 0h1v1h-1zm-1 1h1v1h-1zM505 415h1v1h-1zm-1 1h1v1h-1zm2 0h1v1h-1zm-1 1h1v1h-1zM496 428h1v1h-1zm-1 1h1v1h-1zm2 0h1v1h-1zm-1 1h1v1h-1zM504 420h1v1h-1zm-1 1h1v1h-1zm2 0h1v1h-1zm-1 1h1v1h-1zM483 420h1v1h-1zm-1 1h1v1h-1zm2 0h1v1h-1zm-1 1h1v1h-1zM476 421h1v1h-1zm-1 1h1v1h-1zm2 0h1v1h-1zm-1 1h1v1h-1zM534 423h1v1h-1zm-1 1h1v1h-1zm2 0h1v1h-1zm-1 1h1v1h-1zM481 421h1v1h-1zm-1 1h1v1h-1zm2 0h1v1h-1zm-1 1h1v1h-1zM643 419h1v1h-1zm-1 1h1v1h-1zm2 0h1v1h-1zm-1 1h1v1h-1zM661 420h1v1h-1zm-1 1h1v1h-1zm2 0h1v1h-1zm-1 1h1v1h-1zM516 426h1v1h-1zm-1 1h1v1h-1zm2 0h1v1h-1zm-1 1h1v1h-1zM558 420h1v1h-1zm-1 1h1v1h-1zm2 0h1v1h-1zm-1 1h1v1h-1zM680 424h1v1h-1zm-1 1h1v1h-1zm2 0h1v1h-1zm-1 1h1v1h-1zM681 414h1v1h-1zm-1 1h1v1h-1zm2 0h1v1h-1zm-1 1h1v1h-1zM658 421h1v1h-1zm-1 1h1v1h-1zm2 0h1v1h-1zm-1 1h1v1h-1zM676 426h1v1h-1zm-1 1h1v1h-1zm2 0h1v1h-1zm-1 1h1v1h-1zM676 420h1v1h-1zm-1 1h1v1h-1zm2 0h1v1h-1zm-1 1h1v1h-1zM670 420h1v1h-1zm-1 1h1v1h-1zm2 0h1v1h-1zm-1 1h1v1h-1zM593 426h1v1h-1zm-1 1h1v1h-1zm2 0h1v1h-1zm-1 1h1v1h-1zM588 424h1v1h-1zm-1 1h1v1h-1zm2 0h1v1h-1zm-1 1h1v1h-1zM588 420h1v1h-1zm-1 1h1v1h-1zm2 0h1v1h-1zm-1 1h1v1h-1zM634 424h1v1h-1zm-1 1h1v1h-1zm2 0h1v1h-1zm-1 1h1v1h-1zM619 423h1v1h-1zm-1 1h1v1h-1zm2 0h1v1h-1zm-1 1h1v1h-1zM600 420h1v1h-1zm-1 1h1v1h-1zm2 0h1v1h-1zm-1 1h1v1h-1zM606 424h1v1h-1zm-1 1h1v1h-1zm2 0h1v1h-1zm-1 1h1v1h-1zM609 421h1v1h-1zm-1 1h1v1h-1zm2 0h1v1h-1zm-1 1h1v1h-1zM782 417h1v1h-1zm-1 1h1v1h-1zm2 0h1v1h-1zm-1 1h1v1h-1zM773 420h1v1h-1zm-1 1h1v1h-1zm2 0h1v1h-1zm-1 1h1v1h-1zM777 417h1v1h-1zm-1 1h1v1h-1zm2 0h1v1h-1zm-1 1h1v1h-1zM628 415h1v1h-1zm-1 1h1v1h-1zm2 0h1v1h-1zm-1 1h1v1h-1zM636 419h1v1h-1zm-1 1h1v1h-1zm2 0h1v1h-1zm-1 1h1v1h-1zM621 428h1v1h-1zm-1 1h1v1h-1zm2 0h1v1h-1zm-1 1h1v1h-1zM636 433h1v1h-1zm-1 1h1v1h-1zm2 0h1v1h-1zm-1 1h1v1h-1zM633 420h1v1h-1zm-1 1h1v1h-1zm2 0h1v1h-1zm-1 1h1v1h-1zM631 427h1v1h-1zm-1 1h1v1h-1zm2 0h1v1h-1zm-1 1h1v1h-1zM676 425h1v1h-1zm-1 1h1v1h-1zm2 0h1v1h-1zm-1 1h1v1h-1zM645 424h1v1h-1zm-1 1h1v1h-1zm2 0h1v1h-1zm-1 1h1v1h-1zM668 424h1v1h-1zm-1 1h1v1h-1zm2 0h1v1h-1zm-1 1h1v1h-1zM660 420h1v1h-1zm-1 1h1v1h-1zm2 0h1v1h-1zm-1 1h1v1h-1zM751 414h1v1h-1zm-1 1h1v1h-1zm2 0h1v1h-1zm-1 1h1v1h-1zM764 421h1v1h-1zm-1 1h1v1h-1zm2 0h1v1h-1zm-1 1h1v1h-1zM744 421h1v1h-1zm-1 1h1v1h-1zm2 0h1v1h-1zm-1 1h1v1h-1zM524 419h1v1h-1zm-1 1h1v1h-1zm2 0h1v1h-1zm-1 1h1v1h-1zM533 422h1v1h-1zm-1 1h1v1h-1zm2 0h1v1h-1zm-1 1h1v1h-1zM510 420h1v1h-1zm-1 1h1v1h-1zm2 0h1v1h-1zm-1 1h1v1h-1zM514 420h1v1h-1zm-1 1h1v1h-1zm2 0h1v1h-1zm-1 1h1v1h-1zM519 423h1v1h-1zm-1 1h1v1h-1zm2 0h1v1h-1zm-1 1h1v1h-1zM528 412h1v1h-1zm-1 1h1v1h-1zm2 0h1v1h-1zm-1 1h1v1h-1zM520 420h1v1h-1zm-1 1h1v1h-1zm2 0h1v1h-1zm-1 1h1v1h-1zM116 327h1v1h-1zm-1 1h1v1h-1zm2 0h1v1h-1zm-1 1h1v1h-1zM119 331h1v1h-1zm-1 1h1v1h-1zm2 0h1v1h-1zm-1 1h1v1h-1zM123 328h1v1h-1zm-1 1h1v1h-1zm2 0h1v1h-1zm-1 1h1v1h-1zM124 335h1v1h-1zm-1 1h1v1h-1zm2 0h1v1h-1zm-1 1h1v1h-1zM127 338h1v1h-1zm-1 1h1v1h-1zm2 0h1v1h-1zm-1 1h1v1h-1zM108 343h1v1h-1zm-1 1h1v1h-1zm2 0h1v1h-1zm-1 1h1v1h-1zM113 342h1v1h-1zm-1 1h1v1h-1zm2 0h1v1h-1zm-1 1h1v1h-1zM117 343h1v1h-1zm-1 1h1v1h-1zm2 0h1v1h-1zm-1 1h1v1h-1zM138 324h1v1h-1zm-1 1h1v1h-1zm2 0h1v1h-1zm-1 1h1v1h-1zM136 333h1v1h-1zm-1 1h1v1h-1zm2 0h1v1h-1zm-1 1h1v1h-1zM140 341h1v1h-1zm-1 1h1v1h-1zm2 0h1v1h-1zm-1 1h1v1h-1zM154 333h1v1h-1zm-1 1h1v1h-1zm2 0h1v1h-1zm-1 1h1v1h-1zM90 339h1v1h-1zm-1 1h1v1h-1zm2 0h1v1h-1zm-1 1h1v1h-1zM98 339h1v1h-1zm-1 1h1v1h-1zm2 0h1v1h-1zm-1 1h1v1h-1zM58 365h1v1h-1zm-1 1h1v1h-1zm2 0h1v1h-1zm-1 1h1v1h-1zM92 364h1v1h-1zm-1 1h1v1h-1zm2 0h1v1h-1zm-1 1h1v1h-1zM165 358h1v1h-1zm-1 1h1v1h-1zm2 0h1v1h-1zm-1 1h1v1h-1zM122 294h1v1h-1zm-1 1h1v1h-1zm2 0h1v1h-1zm-1 1h1v1h-1zM125 289h1v1h-1zm-1 1h1v1h-1zm2 0h1v1h-1zm-1 1h1v1h-1zM126 287h1v1h-1zm-1 1h1v1h-1zm2 0h1v1h-1zm-1 1h1v1h-1zM127 285h1v1h-1zm-1 1h1v1h-1zm2 0h1v1h-1zm-1 1h1v1h-1zM128 280h1v1h-1zm-1 1h1v1h-1zm2 0h1v1h-1zm-1 1h1v1h-1z" fill="#e6e6e6" shape-rendering="crispEdges"/>
<path d="M116 308L118 310L116.5 316L116 324L115.5 331L119 332.5L123 333.5L122 335.5L117 337L115 341.5L111.5 343.5L108 343L108 333L109 324L111 316L114 310Z" fill="#e6e6e6"/>
<path d="M113 292h1v1h-1zm-1 1h1v1h-1zm2 0h1v1h-1zm-1 1h1v1h-1zM114 291h1v1h-1zm-1 1h1v1h-1zm2 0h1v1h-1zm-1 1h1v1h-1zM113 290h1v1h-1zm-1 1h1v1h-1zm2 0h1v1h-1zm-1 1h1v1h-1zM114 289h1v1h-1zm-1 1h1v1h-1zm2 0h1v1h-1zm-1 1h1v1h-1zM114 287h1v1h-1zm-1 1h1v1h-1zm2 0h1v1h-1zm-1 1h1v1h-1zM114 289h1v1h-1zm-1 1h1v1h-1zm2 0h1v1h-1zm-1 1h1v1h-1zM113 287h1v1h-1zm-1 1h1v1h-1zm2 0h1v1h-1zm-1 1h1v1h-1zM114 286h1v1h-1zm-1 1h1v1h-1zm2 0h1v1h-1zm-1 1h1v1h-1zM113 285h1v1h-1zm-1 1h1v1h-1zm2 0h1v1h-1zm-1 1h1v1h-1zM114 284h1v1h-1zm-1 1h1v1h-1zm2 0h1v1h-1zm-1 1h1v1h-1zM115 286h1v1h-1zm-1 1h1v1h-1zm2 0h1v1h-1zm-1 1h1v1h-1zM114 285h1v1h-1zm-1 1h1v1h-1zm2 0h1v1h-1zm-1 1h1v1h-1zM114 283h1v1h-1zm-1 1h1v1h-1zm2 0h1v1h-1zm-1 1h1v1h-1zM114 283h1v1h-1zm-1 1h1v1h-1zm2 0h1v1h-1zm-1 1h1v1h-1zM115 283h1v1h-1zm-1 1h1v1h-1zm2 0h1v1h-1zm-1 1h1v1h-1zM113 283h1v1h-1zm-1 1h1v1h-1zm2 0h1v1h-1zm-1 1h1v1h-1zM114 282h1v1h-1zm-1 1h1v1h-1zm2 0h1v1h-1zm-1 1h1v1h-1zM114 280h1v1h-1zm-1 1h1v1h-1zm2 0h1v1h-1zm-1 1h1v1h-1zM114 281h1v1h-1zm-1 1h1v1h-1zm2 0h1v1h-1zm-1 1h1v1h-1zM114 280h1v1h-1zm-1 1h1v1h-1zm2 0h1v1h-1zm-1 1h1v1h-1zM114 279h1v1h-1zm-1 1h1v1h-1zm2 0h1v1h-1zm-1 1h1v1h-1zM114 277h1v1h-1zm-1 1h1v1h-1zm2 0h1v1h-1zm-1 1h1v1h-1zM113 278h1v1h-1zm-1 1h1v1h-1zm2 0h1v1h-1zm-1 1h1v1h-1zM112 277h1v1h-1zm-1 1h1v1h-1zm2 0h1v1h-1zm-1 1h1v1h-1zM114 277h1v1h-1zm-1 1h1v1h-1zm2 0h1v1h-1zm-1 1h1v1h-1zM112 277h1v1h-1zm-1 1h1v1h-1zm2 0h1v1h-1zm-1 1h1v1h-1zM114 275h1v1h-1zm-1 1h1v1h-1zm2 0h1v1h-1zm-1 1h1v1h-1zM113 275h1v1h-1zm-1 1h1v1h-1zm2 0h1v1h-1zm-1 1h1v1h-1zM113 274h1v1h-1zm-1 1h1v1h-1zm2 0h1v1h-1zm-1 1h1v1h-1zM114 274h1v1h-1zm-1 1h1v1h-1zm2 0h1v1h-1zm-1 1h1v1h-1zM114 274h1v1h-1zm-1 1h1v1h-1zm2 0h1v1h-1zm-1 1h1v1h-1zM114 271h1v1h-1zm-1 1h1v1h-1zm2 0h1v1h-1zm-1 1h1v1h-1zM113 272h1v1h-1zm-1 1h1v1h-1zm2 0h1v1h-1zm-1 1h1v1h-1zM112 271h1v1h-1zm-1 1h1v1h-1zm2 0h1v1h-1zm-1 1h1v1h-1zM112 270h1v1h-1zm-1 1h1v1h-1zm2 0h1v1h-1zm-1 1h1v1h-1zM113 269h1v1h-1zm-1 1h1v1h-1zm2 0h1v1h-1zm-1 1h1v1h-1zM112 270h1v1h-1zm-1 1h1v1h-1zm2 0h1v1h-1zm-1 1h1v1h-1zM113 269h1v1h-1zm-1 1h1v1h-1zm2 0h1v1h-1zm-1 1h1v1h-1zM114 268h1v1h-1zm-1 1h1v1h-1zm2 0h1v1h-1zm-1 1h1v1h-1zM114 268h1v1h-1zm-1 1h1v1h-1zm2 0h1v1h-1zm-1 1h1v1h-1zM114 266h1v1h-1zm-1 1h1v1h-1zm2 0h1v1h-1zm-1 1h1v1h-1zM113 267h1v1h-1zm-1 1h1v1h-1zm2 0h1v1h-1zm-1 1h1v1h-1zM111 267h1v1h-1zm-1 1h1v1h-1zm2 0h1v1h-1zm-1 1h1v1h-1zM112 265h1v1h-1zm-1 1h1v1h-1zm2 0h1v1h-1zm-1 1h1v1h-1zM112 264h1v1h-1zm-1 1h1v1h-1zm2 0h1v1h-1zm-1 1h1v1h-1zM113 263h1v1h-1zm-1 1h1v1h-1zm2 0h1v1h-1zm-1 1h1v1h-1zM114 263h1v1h-1zm-1 1h1v1h-1zm2 0h1v1h-1zm-1 1h1v1h-1zM113 263h1v1h-1zm-1 1h1v1h-1zm2 0h1v1h-1zm-1 1h1v1h-1zM112 261h1v1h-1zm-1 1h1v1h-1zm2 0h1v1h-1zm-1 1h1v1h-1zM113 262h1v1h-1zm-1 1h1v1h-1zm2 0h1v1h-1zm-1 1h1v1h-1zM112 261h1v1h-1zm-1 1h1v1h-1zm2 0h1v1h-1zm-1 1h1v1h-1zM112 259h1v1h-1zm-1 1h1v1h-1zm2 0h1v1h-1zm-1 1h1v1h-1zM112 258h1v1h-1zm-1 1h1v1h-1zm2 0h1v1h-1zm-1 1h1v1h-1zM112 260h1v1h-1zm-1 1h1v1h-1zm2 0h1v1h-1zm-1 1h1v1h-1zM112 260h1v1h-1zm-1 1h1v1h-1zm2 0h1v1h-1zm-1 1h1v1h-1zM113 257h1v1h-1zm-1 1h1v1h-1zm2 0h1v1h-1zm-1 1h1v1h-1zM114 258h1v1h-1zm-1 1h1v1h-1zm2 0h1v1h-1zm-1 1h1v1h-1zM111 258h1v1h-1zm-1 1h1v1h-1zm2 0h1v1h-1zm-1 1h1v1h-1zM112 256h1v1h-1zm-1 1h1v1h-1zm2 0h1v1h-1zm-1 1h1v1h-1zM114 255h1v1h-1zm-1 1h1v1h-1zm2 0h1v1h-1zm-1 1h1v1h-1zM113 256h1v1h-1zm-1 1h1v1h-1zm2 0h1v1h-1zm-1 1h1v1h-1zM113 254h1v1h-1zm-1 1h1v1h-1zm2 0h1v1h-1zm-1 1h1v1h-1zM114 254h1v1h-1zm-1 1h1v1h-1zm2 0h1v1h-1zm-1 1h1v1h-1zM113 252h1v1h-1zm-1 1h1v1h-1zm2 0h1v1h-1zm-1 1h1v1h-1zM113 252h1v1h-1zm-1 1h1v1h-1zm2 0h1v1h-1zm-1 1h1v1h-1zM112 250h1v1h-1zm-1 1h1v1h-1zm2 0h1v1h-1zm-1 1h1v1h-1zM113 250h1v1h-1zm-1 1h1v1h-1zm2 0h1v1h-1zm-1 1h1v1h-1zM113 251h1v1h-1zm-1 1h1v1h-1zm2 0h1v1h-1zm-1 1h1v1h-1zM113 249h1v1h-1zm-1 1h1v1h-1zm2 0h1v1h-1zm-1 1h1v1h-1zM113 249h1v1h-1zm-1 1h1v1h-1zm2 0h1v1h-1zm-1 1h1v1h-1zM114 249h1v1h-1zm-1 1h1v1h-1zm2 0h1v1h-1zm-1 1h1v1h-1zM114 249h1v1h-1zm-1 1h1v1h-1zm2 0h1v1h-1zm-1 1h1v1h-1zM114 247h1v1h-1zm-1 1h1v1h-1zm2 0h1v1h-1zm-1 1h1v1h-1zM112 248h1v1h-1zm-1 1h1v1h-1zm2 0h1v1h-1zm-1 1h1v1h-1zM114 247h1v1h-1zm-1 1h1v1h-1zm2 0h1v1h-1zm-1 1h1v1h-1zM113 245h1v1h-1zm-1 1h1v1h-1zm2 0h1v1h-1zm-1 1h1v1h-1zM115 240h1v1h-1zm-1 1h1v1h-1zm2 0h1v1h-1zm-1 1h1v1h-1zM115 240h1v1h-1zm-1 1h1v1h-1zm2 0h1v1h-1zm-1 1h1v1h-1zM116 238h1v1h-1zm-1 1h1v1h-1zm2 0h1v1h-1zm-1 1h1v1h-1zM115 240h1v1h-1zm-1 1h1v1h-1zm2 0h1v1h-1zm-1 1h1v1h-1zM117 239h1v1h-1zm-1 1h1v1h-1zm2 0h1v1h-1zm-1 1h1v1h-1zM115 236h1v1h-1zm-1 1h1v1h-1zm2 0h1v1h-1zm-1 1h1v1h-1zM116 236h1v1h-1zm-1 1h1v1h-1zm2 0h1v1h-1zm-1 1h1v1h-1zM118 235h1v1h-1zm-1 1h1v1h-1zm2 0h1v1h-1zm-1 1h1v1h-1zM118 234h1v1h-1zm-1 1h1v1h-1zm2 0h1v1h-1zm-1 1h1v1h-1zM117 235h1v1h-1zm-1 1h1v1h-1zm2 0h1v1h-1zm-1 1h1v1h-1zM119 234h1v1h-1zm-1 1h1v1h-1zm2 0h1v1h-1zm-1 1h1v1h-1zM118 233h1v1h-1zm-1 1h1v1h-1zm2 0h1v1h-1zm-1 1h1v1h-1zM118 232h1v1h-1zm-1 1h1v1h-1zm2 0h1v1h-1zm-1 1h1v1h-1zM120 233h1v1h-1zm-1 1h1v1h-1zm2 0h1v1h-1zm-1 1h1v1h-1zM119 230h1v1h-1zm-1 1h1v1h-1zm2 0h1v1h-1zm-1 1h1v1h-1zM121 231h1v1h-1zm-1 1h1v1h-1zm2 0h1v1h-1zm-1 1h1v1h-1zM121 229h1v1h-1zm-1 1h1v1h-1zm2 0h1v1h-1zm-1 1h1v1h-1zM121 229h1v1h-1zm-1 1h1v1h-1zm2 0h1v1h-1zm-1 1h1v1h-1zM122 229h1v1h-1zm-1 1h1v1h-1zm2 0h1v1h-1zm-1 1h1v1h-1zM122 230h1v1h-1zm-1 1h1v1h-1zm2 0h1v1h-1zm-1 1h1v1h-1zM122 228h1v1h-1zm-1 1h1v1h-1zm2 0h1v1h-1zm-1 1h1v1h-1zM123 228h1v1h-1zm-1 1h1v1h-1zm2 0h1v1h-1zm-1 1h1v1h-1zM123 226h1v1h-1zm-1 1h1v1h-1zm2 0h1v1h-1zm-1 1h1v1h-1zM122 227h1v1h-1zm-1 1h1v1h-1zm2 0h1v1h-1zm-1 1h1v1h-1zM122 224h1v1h-1zm-1 1h1v1h-1zm2 0h1v1h-1zm-1 1h1v1h-1zM124 225h1v1h-1zm-1 1h1v1h-1zm2 0h1v1h-1zm-1 1h1v1h-1zM125 224h1v1h-1zm-1 1h1v1h-1zm2 0h1v1h-1zm-1 1h1v1h-1zM125 222h1v1h-1zm-1 1h1v1h-1zm2 0h1v1h-1zm-1 1h1v1h-1zM124 223h1v1h-1zm-1 1h1v1h-1zm2 0h1v1h-1zm-1 1h1v1h-1zM124 222h1v1h-1zm-1 1h1v1h-1zm2 0h1v1h-1zm-1 1h1v1h-1zM126 222h1v1h-1zm-1 1h1v1h-1zm2 0h1v1h-1zm-1 1h1v1h-1zM126 220h1v1h-1zm-1 1h1v1h-1zm2 0h1v1h-1zm-1 1h1v1h-1zM126 221h1v1h-1zm-1 1h1v1h-1zm2 0h1v1h-1zm-1 1h1v1h-1zM127 219h1v1h-1zm-1 1h1v1h-1zm2 0h1v1h-1zm-1 1h1v1h-1zM128 220h1v1h-1zm-1 1h1v1h-1zm2 0h1v1h-1zm-1 1h1v1h-1zM129 220h1v1h-1zm-1 1h1v1h-1zm2 0h1v1h-1zm-1 1h1v1h-1zM129 218h1v1h-1zm-1 1h1v1h-1zm2 0h1v1h-1zm-1 1h1v1h-1zM129 217h1v1h-1zm-1 1h1v1h-1zm2 0h1v1h-1zm-1 1h1v1h-1zM128 217h1v1h-1zm-1 1h1v1h-1zm2 0h1v1h-1zm-1 1h1v1h-1zM130 217h1v1h-1zm-1 1h1v1h-1zm2 0h1v1h-1zm-1 1h1v1h-1zM129 215h1v1h-1zm-1 1h1v1h-1zm2 0h1v1h-1zm-1 1h1v1h-1zM129 215h1v1h-1zm-1 1h1v1h-1zm2 0h1v1h-1zm-1 1h1v1h-1zM130 214h1v1h-1zm-1 1h1v1h-1zm2 0h1v1h-1zm-1 1h1v1h-1zM130 214h1v1h-1zm-1 1h1v1h-1zm2 0h1v1h-1zm-1 1h1v1h-1zM132 213h1v1h-1zm-1 1h1v1h-1zm2 0h1v1h-1zm-1 1h1v1h-1zM132 213h1v1h-1zm-1 1h1v1h-1zm2 0h1v1h-1zm-1 1h1v1h-1zM131 213h1v1h-1zm-1 1h1v1h-1zm2 0h1v1h-1zm-1 1h1v1h-1zM121 241h1v1h-1zm-1 1h1v1h-1zm2 0h1v1h-1zm-1 1h1v1h-1zM119 241h1v1h-1zm-1 1h1v1h-1zm2 0h1v1h-1zm-1 1h1v1h-1zM121 241h1v1h-1zm-1 1h1v1h-1zm2 0h1v1h-1zm-1 1h1v1h-1zM122 241h1v1h-1zm-1 1h1v1h-1zm2 0h1v1h-1zm-1 1h1v1h-1zM122 239h1v1h-1zm-1 1h1v1h-1zm2 0h1v1h-1zm-1 1h1v1h-1zM122 240h1v1h-1zm-1 1h1v1h-1zm2 0h1v1h-1zm-1 1h1v1h-1zM121 237h1v1h-1zm-1 1h1v1h-1zm2 0h1v1h-1zm-1 1h1v1h-1zM123 239h1v1h-1zm-1 1h1v1h-1zm2 0h1v1h-1zm-1 1h1v1h-1zM122 238h1v1h-1zm-1 1h1v1h-1zm2 0h1v1h-1zm-1 1h1v1h-1zM122 238h1v1h-1zm-1 1h1v1h-1zm2 0h1v1h-1zm-1 1h1v1h-1zM124 236h1v1h-1zm-1 1h1v1h-1zm2 0h1v1h-1zm-1 1h1v1h-1zM124 237h1v1h-1zm-1 1h1v1h-1zm2 0h1v1h-1zm-1 1h1v1h-1zM125 236h1v1h-1zm-1 1h1v1h-1zm2 0h1v1h-1zm-1 1h1v1h-1zM125 234h1v1h-1zm-1 1h1v1h-1zm2 0h1v1h-1zm-1 1h1v1h-1zM127 235h1v1h-1zm-1 1h1v1h-1zm2 0h1v1h-1zm-1 1h1v1h-1zM126 234h1v1h-1zm-1 1h1v1h-1zm2 0h1v1h-1zm-1 1h1v1h-1zM127 234h1v1h-1zm-1 1h1v1h-1zm2 0h1v1h-1zm-1 1h1v1h-1zM128 232h1v1h-1zm-1 1h1v1h-1zm2 0h1v1h-1zm-1 1h1v1h-1zM128 232h1v1h-1zm-1 1h1v1h-1zm2 0h1v1h-1zm-1 1h1v1h-1zM129 232h1v1h-1zm-1 1h1v1h-1zm2 0h1v1h-1zm-1 1h1v1h-1zM129 232h1v1h-1zm-1 1h1v1h-1zm2 0h1v1h-1zm-1 1h1v1h-1zM130 231h1v1h-1zm-1 1h1v1h-1zm2 0h1v1h-1zm-1 1h1v1h-1zM129 230h1v1h-1zm-1 1h1v1h-1zm2 0h1v1h-1zm-1 1h1v1h-1zM130 229h1v1h-1zm-1 1h1v1h-1zm2 0h1v1h-1zm-1 1h1v1h-1zM130 228h1v1h-1zm-1 1h1v1h-1zm2 0h1v1h-1zm-1 1h1v1h-1zM131 229h1v1h-1zm-1 1h1v1h-1zm2 0h1v1h-1zm-1 1h1v1h-1zM130 226h1v1h-1zm-1 1h1v1h-1zm2 0h1v1h-1zm-1 1h1v1h-1zM130 227h1v1h-1zm-1 1h1v1h-1zm2 0h1v1h-1zm-1 1h1v1h-1zM131 228h1v1h-1zm-1 1h1v1h-1zm2 0h1v1h-1zm-1 1h1v1h-1zM131 225h1v1h-1zm-1 1h1v1h-1zm2 0h1v1h-1zm-1 1h1v1h-1zM131 226h1v1h-1zm-1 1h1v1h-1zm2 0h1v1h-1zm-1 1h1v1h-1zM134 224h1v1h-1zm-1 1h1v1h-1zm2 0h1v1h-1zm-1 1h1v1h-1zM132 224h1v1h-1zm-1 1h1v1h-1zm2 0h1v1h-1zm-1 1h1v1h-1zM134 225h1v1h-1zm-1 1h1v1h-1zm2 0h1v1h-1zm-1 1h1v1h-1zM133 222h1v1h-1zm-1 1h1v1h-1zm2 0h1v1h-1zm-1 1h1v1h-1zM134 222h1v1h-1zm-1 1h1v1h-1zm2 0h1v1h-1zm-1 1h1v1h-1zM134 222h1v1h-1zm-1 1h1v1h-1zm2 0h1v1h-1zm-1 1h1v1h-1zM136 220h1v1h-1zm-1 1h1v1h-1zm2 0h1v1h-1zm-1 1h1v1h-1zM135 220h1v1h-1zm-1 1h1v1h-1zm2 0h1v1h-1zm-1 1h1v1h-1zM135 221h1v1h-1zm-1 1h1v1h-1zm2 0h1v1h-1zm-1 1h1v1h-1zM136 220h1v1h-1zm-1 1h1v1h-1zm2 0h1v1h-1zm-1 1h1v1h-1zM138 219h1v1h-1zm-1 1h1v1h-1zm2 0h1v1h-1zm-1 1h1v1h-1zM137 220h1v1h-1zm-1 1h1v1h-1zm2 0h1v1h-1zm-1 1h1v1h-1zM139 217h1v1h-1zm-1 1h1v1h-1zm2 0h1v1h-1zm-1 1h1v1h-1zM139 219h1v1h-1zm-1 1h1v1h-1zm2 0h1v1h-1zm-1 1h1v1h-1zM139 216h1v1h-1zm-1 1h1v1h-1zm2 0h1v1h-1zm-1 1h1v1h-1zM138 217h1v1h-1zm-1 1h1v1h-1zm2 0h1v1h-1zm-1 1h1v1h-1zM141 215h1v1h-1zm-1 1h1v1h-1zm2 0h1v1h-1zm-1 1h1v1h-1zM140 215h1v1h-1zm-1 1h1v1h-1zm2 0h1v1h-1zm-1 1h1v1h-1zM140 216h1v1h-1zm-1 1h1v1h-1zm2 0h1v1h-1zm-1 1h1v1h-1zM142 213h1v1h-1zm-1 1h1v1h-1zm2 0h1v1h-1zm-1 1h1v1h-1zM136 204h1v1h-1zm-1 1h1v1h-1zm2 0h1v1h-1zm-1 1h1v1h-1zM140 197h1v1h-1zm-1 1h1v1h-1zm2 0h1v1h-1zm-1 1h1v1h-1zM142 208h1v1h-1zm-1 1h1v1h-1zm2 0h1v1h-1zm-1 1h1v1h-1zM144 201h1v1h-1zm-1 1h1v1h-1zm2 0h1v1h-1zm-1 1h1v1h-1zM145 188h1v1h-1zm-1 1h1v1h-1zm2 0h1v1h-1zm-1 1h1v1h-1zM149 198h1v1h-1zm-1 1h1v1h-1zm2 0h1v1h-1zm-1 1h1v1h-1zM151 191h1v1h-1zm-1 1h1v1h-1zm2 0h1v1h-1zm-1 1h1v1h-1zM159 186h1v1h-1zm-1 1h1v1h-1zm2 0h1v1h-1zm-1 1h1v1h-1zM153 168h1v1h-1zm-1 1h1v1h-1zm2 0h1v1h-1zm-1 1h1v1h-1zM158 165h1v1h-1zm-1 1h1v1h-1zm2 0h1v1h-1zm-1 1h1v1h-1zM164 159h1v1h-1zm-1 1h1v1h-1zm2 0h1v1h-1zm-1 1h1v1h-1zM166 153h1v1h-1zm-1 1h1v1h-1zm2 0h1v1h-1zm-1 1h1v1h-1zM171 148h1v1h-1zm-1 1h1v1h-1zm2 0h1v1h-1zm-1 1h1v1h-1zM178 143h1v1h-1zm-1 1h1v1h-1zm2 0h1v1h-1zm-1 1h1v1h-1zM161 178h1v1h-1zm-1 1h1v1h-1zm2 0h1v1h-1zm-1 1h1v1h-1zM166 172h1v1h-1zm-1 1h1v1h-1zm2 0h1v1h-1zm-1 1h1v1h-1zM172 167h1v1h-1zm-1 1h1v1h-1zm2 0h1v1h-1zm-1 1h1v1h-1zM177 163h1v1h-1zm-1 1h1v1h-1zm2 0h1v1h-1zm-1 1h1v1h-1zM202 123h1v1h-1zm-1 1h1v1h-1zm2 0h1v1h-1zm-1 1h1v1h-1zM202 122h1v1h-1zm-1 1h1v1h-1zm2 0h1v1h-1zm-1 1h1v1h-1zM203 121h1v1h-1zm-1 1h1v1h-1zm2 0h1v1h-1zm-1 1h1v1h-1zM204 121h1v1h-1zm-1 1h1v1h-1zm2 0h1v1h-1zm-1 1h1v1h-1zM205 120h1v1h-1zm-1 1h1v1h-1zm2 0h1v1h-1zm-1 1h1v1h-1zM205 119h1v1h-1zm-1 1h1v1h-1zm2 0h1v1h-1zm-1 1h1v1h-1zM181 137h1v1h-1zm-1 1h1v1h-1zm2 0h1v1h-1zm-1 1h1v1h-1zM186 136h1v1h-1zm-1 1h1v1h-1zm2 0h1v1h-1zm-1 1h1v1h-1zM194 130h1v1h-1zm-1 1h1v1h-1zm2 0h1v1h-1zm-1 1h1v1h-1zM197 125h1v1h-1zm-1 1h1v1h-1zm2 0h1v1h-1zm-1 1h1v1h-1zM200 125h1v1h-1zm-1 1h1v1h-1zm2 0h1v1h-1zm-1 1h1v1h-1zM187 152h1v1h-1zm-1 1h1v1h-1zm2 0h1v1h-1zm-1 1h1v1h-1zM195 152h1v1h-1zm-1 1h1v1h-1zm2 0h1v1h-1zm-1 1h1v1h-1zM196 147h1v1h-1zm-1 1h1v1h-1zm2 0h1v1h-1zm-1 1h1v1h-1zM206 148h1v1h-1zm-1 1h1v1h-1zm2 0h1v1h-1zm-1 1h1v1h-1zM209 141h1v1h-1zm-1 1h1v1h-1zm2 0h1v1h-1zm-1 1h1v1h-1zM214 145h1v1h-1zm-1 1h1v1h-1zm2 0h1v1h-1zm-1 1h1v1h-1zM222 141h1v1h-1zm-1 1h1v1h-1zm2 0h1v1h-1zm-1 1h1v1h-1zM228 138h1v1h-1zm-1 1h1v1h-1zm2 0h1v1h-1zm-1 1h1v1h-1zM236 149h1v1h-1zm-1 1h1v1h-1zm2 0h1v1h-1zm-1 1h1v1h-1zM243 144h1v1h-1zm-1 1h1v1h-1zm2 0h1v1h-1zm-1 1h1v1h-1zM256 138h1v1h-1zm-1 1h1v1h-1zm2 0h1v1h-1zm-1 1h1v1h-1zM249 132h1v1h-1zm-1 1h1v1h-1zm2 0h1v1h-1zm-1 1h1v1h-1zM245 130h1v1h-1zm-1 1h1v1h-1zm2 0h1v1h-1zm-1 1h1v1h-1zM229 123h1v1h-1zm-1 1h1v1h-1zm2 0h1v1h-1zm-1 1h1v1h-1zM223 123h1v1h-1zm-1 1h1v1h-1zm2 0h1v1h-1zm-1 1h1v1h-1zM219 124h1v1h-1zm-1 1h1v1h-1zm2 0h1v1h-1zm-1 1h1v1h-1zM255 155h1v1h-1zm-1 1h1v1h-1zm2 0h1v1h-1zm-1 1h1v1h-1zM257 160h1v1h-1zm-1 1h1v1h-1zm2 0h1v1h-1zm-1 1h1v1h-1zM262 164h1v1h-1zm-1 1h1v1h-1zm2 0h1v1h-1zm-1 1h1v1h-1zM267 168h1v1h-1zm-1 1h1v1h-1zm2 0h1v1h-1zm-1 1h1v1h-1zM268 172h1v1h-1zm-1 1h1v1h-1zm2 0h1v1h-1zm-1 1h1v1h-1zM278 184h1v1h-1zm-1 1h1v1h-1zm2 0h1v1h-1zm-1 1h1v1h-1zM279 189h1v1h-1zm-1 1h1v1h-1zm2 0h1v1h-1zm-1 1h1v1h-1zM282 196h1v1h-1zm-1 1h1v1h-1zm2 0h1v1h-1zm-1 1h1v1h-1zM289 201h1v1h-1zm-1 1h1v1h-1zm2 0h1v1h-1zm-1 1h1v1h-1zM293 211h1v1h-1zm-1 1h1v1h-1zm2 0h1v1h-1zm-1 1h1v1h-1zM296 213h1v1h-1zm-1 1h1v1h-1zm2 0h1v1h-1zm-1 1h1v1h-1zM307 235h1v1h-1zm-1 1h1v1h-1zm2 0h1v1h-1zm-1 1h1v1h-1zM309 234h1v1h-1zm-1 1h1v1h-1zm2 0h1v1h-1zm-1 1h1v1h-1zM320 251h1v1h-1zm-1 1h1v1h-1zm2 0h1v1h-1zm-1 1h1v1h-1zM326 256h1v1h-1zm-1 1h1v1h-1zm2 0h1v1h-1zm-1 1h1v1h-1zM271 155h1v1h-1zm-1 1h1v1h-1zm2 0h1v1h-1zm-1 1h1v1h-1zM277 162h1v1h-1zm-1 1h1v1h-1zm2 0h1v1h-1zm-1 1h1v1h-1zM283 172h1v1h-1zm-1 1h1v1h-1zm2 0h1v1h-1zm-1 1h1v1h-1zM291 182h1v1h-1zm-1 1h1v1h-1zm2 0h1v1h-1zm-1 1h1v1h-1zM294 189h1v1h-1zm-1 1h1v1h-1zm2 0h1v1h-1zm-1 1h1v1h-1zM298 197h1v1h-1zm-1 1h1v1h-1zm2 0h1v1h-1zm-1 1h1v1h-1zM300 201h1v1h-1zm-1 1h1v1h-1zm2 0h1v1h-1zm-1 1h1v1h-1zM302 202h1v1h-1zm-1 1h1v1h-1zm2 0h1v1h-1zm-1 1h1v1h-1zM308 217h1v1h-1zm-1 1h1v1h-1zm2 0h1v1h-1zm-1 1h1v1h-1zM314 227h1v1h-1zm-1 1h1v1h-1zm2 0h1v1h-1zm-1 1h1v1h-1zM321 252h1v1h-1zm-1 1h1v1h-1zm2 0h1v1h-1zm-1 1h1v1h-1zM326 257h1v1h-1zm-1 1h1v1h-1zm2 0h1v1h-1zm-1 1h1v1h-1zM345 297h1v1h-1zm-1 1h1v1h-1zm2 0h1v1h-1zm-1 1h1v1h-1zM346 305h1v1h-1zm-1 1h1v1h-1zm2 0h1v1h-1zm-1 1h1v1h-1zM352 315h1v1h-1zm-1 1h1v1h-1zm2 0h1v1h-1zm-1 1h1v1h-1zM358 327h1v1h-1zm-1 1h1v1h-1zm2 0h1v1h-1zm-1 1h1v1h-1zM360 330h1v1h-1zm-1 1h1v1h-1zm2 0h1v1h-1zm-1 1h1v1h-1zM365 337h1v1h-1zm-1 1h1v1h-1zm2 0h1v1h-1zm-1 1h1v1h-1zM368 344h1v1h-1zm-1 1h1v1h-1zm2 0h1v1h-1zm-1 1h1v1h-1zM372 351h1v1h-1zm-1 1h1v1h-1zm2 0h1v1h-1zm-1 1h1v1h-1zM383 369h1v1h-1zm-1 1h1v1h-1zm2 0h1v1h-1zm-1 1h1v1h-1zM388 377h1v1h-1zm-1 1h1v1h-1zm2 0h1v1h-1zm-1 1h1v1h-1zM397 389h1v1h-1zm-1 1h1v1h-1zm2 0h1v1h-1zm-1 1h1v1h-1zM400 392h1v1h-1zm-1 1h1v1h-1zm2 0h1v1h-1zm-1 1h1v1h-1zM406 402h1v1h-1zm-1 1h1v1h-1zm2 0h1v1h-1zm-1 1h1v1h-1zM408 402h1v1h-1zm-1 1h1v1h-1zm2 0h1v1h-1zm-1 1h1v1h-1zM418 415h1v1h-1zm-1 1h1v1h-1zm2 0h1v1h-1zm-1 1h1v1h-1zM425 414h1v1h-1zm-1 1h1v1h-1zm2 0h1v1h-1zm-1 1h1v1h-1zM427 416h1v1h-1zm-1 1h1v1h-1zm2 0h1v1h-1zm-1 1h1v1h-1zM435 426h1v1h-1zm-1 1h1v1h-1zm2 0h1v1h-1zm-1 1h1v1h-1zM445 419h1v1h-1zm-1 1h1v1h-1zm2 0h1v1h-1zm-1 1h1v1h-1zM448 420h1v1h-1zm-1 1h1v1h-1zm2 0h1v1h-1zm-1 1h1v1h-1zM453 422h1v1h-1zm-1 1h1v1h-1zm2 0h1v1h-1zm-1 1h1v1h-1zM457 422h1v1h-1zm-1 1h1v1h-1zm2 0h1v1h-1zm-1 1h1v1h-1zM716 420h1v1h-1zm-1 1h1v1h-1zm2 0h1v1h-1zm-1 1h1v1h-1zM653 433h1v1h-1zm-1 1h1v1h-1zm2 0h1v1h-1zm-1 1h1v1h-1zM713 421h1v1h-1zm-1 1h1v1h-1zm2 0h1v1h-1zm-1 1h1v1h-1zM479 432h1v1h-1zm-1 1h1v1h-1zm2 0h1v1h-1zm-1 1h1v1h-1zM497 430h1v1h-1zm-1 1h1v1h-1zm2 0h1v1h-1zm-1 1h1v1h-1zM707 428h1v1h-1zm-1 1h1v1h-1zm2 0h1v1h-1zm-1 1h1v1h-1zM512 419h1v1h-1zm-1 1h1v1h-1zm2 0h1v1h-1zm-1 1h1v1h-1zM664 429h1v1h-1zm-1 1h1v1h-1zm2 0h1v1h-1zm-1 1h1v1h-1zM478 425h1v1h-1zm-1 1h1v1h-1zm2 0h1v1h-1zm-1 1h1v1h-1zM491 427h1v1h-1zm-1 1h1v1h-1zm2 0h1v1h-1zm-1 1h1v1h-1zM596 433h1v1h-1zm-1 1h1v1h-1zm2 0h1v1h-1zm-1 1h1v1h-1zM603 429h1v1h-1zm-1 1h1v1h-1zm2 0h1v1h-1zm-1 1h1v1h-1zM634 421h1v1h-1zm-1 1h1v1h-1zm2 0h1v1h-1zm-1 1h1v1h-1zM749 420h1v1h-1zm-1 1h1v1h-1zm2 0h1v1h-1zm-1 1h1v1h-1zM588 423h1v1h-1zm-1 1h1v1h-1zm2 0h1v1h-1zm-1 1h1v1h-1zM451 429h1v1h-1zm-1 1h1v1h-1zm2 0h1v1h-1zm-1 1h1v1h-1zM593 421h1v1h-1zm-1 1h1v1h-1zm2 0h1v1h-1zm-1 1h1v1h-1zM737 414h1v1h-1zm-1 1h1v1h-1zm2 0h1v1h-1zm-1 1h1v1h-1zM689 424h1v1h-1zm-1 1h1v1h-1zm2 0h1v1h-1zm-1 1h1v1h-1zM567 425h1v1h-1zm-1 1h1v1h-1zm2 0h1v1h-1zm-1 1h1v1h-1zM572 424h1v1h-1zm-1 1h1v1h-1zm2 0h1v1h-1zm-1 1h1v1h-1zM585 423h1v1h-1zm-1 1h1v1h-1zm2 0h1v1h-1zm-1 1h1v1h-1zM633 427h1v1h-1zm-1 1h1v1h-1zm2 0h1v1h-1zm-1 1h1v1h-1zM671 418h1v1h-1zm-1 1h1v1h-1zm2 0h1v1h-1zm-1 1h1v1h-1zM504 426h1v1h-1zm-1 1h1v1h-1zm2 0h1v1h-1zm-1 1h1v1h-1zM648 416h1v1h-1zm-1 1h1v1h-1zm2 0h1v1h-1zm-1 1h1v1h-1zM575 423h1v1h-1zm-1 1h1v1h-1zm2 0h1v1h-1zm-1 1h1v1h-1zM709 425h1v1h-1zm-1 1h1v1h-1zm2 0h1v1h-1zm-1 1h1v1h-1zM810 419h1v1h-1zm-1 1h1v1h-1zm2 0h1v1h-1zm-1 1h1v1h-1zM754 424h1v1h-1zm-1 1h1v1h-1zm2 0h1v1h-1zm-1 1h1v1h-1zM518 430h1v1h-1zm-1 1h1v1h-1zm2 0h1v1h-1zm-1 1h1v1h-1zM518 423h1v1h-1zm-1 1h1v1h-1zm2 0h1v1h-1zm-1 1h1v1h-1zM476 425h1v1h-1zm-1 1h1v1h-1zm2 0h1v1h-1zm-1 1h1v1h-1zM703 430h1v1h-1zm-1 1h1v1h-1zm2 0h1v1h-1zm-1 1h1v1h-1zM567 428h1v1h-1zm-1 1h1v1h-1zm2 0h1v1h-1zm-1 1h1v1h-1zM616 423h1v1h-1zm-1 1h1v1h-1zm2 0h1v1h-1zm-1 1h1v1h-1zM491 427h1v1h-1zm-1 1h1v1h-1zm2 0h1v1h-1zm-1 1h1v1h-1zM780 425h1v1h-1zm-1 1h1v1h-1zm2 0h1v1h-1zm-1 1h1v1h-1zM646 420h1v1h-1zm-1 1h1v1h-1zm2 0h1v1h-1zm-1 1h1v1h-1zM543 423h1v1h-1zm-1 1h1v1h-1zm2 0h1v1h-1zm-1 1h1v1h-1zM781 432h1v1h-1zm-1 1h1v1h-1zm2 0h1v1h-1zm-1 1h1v1h-1zM668 425h1v1h-1zm-1 1h1v1h-1zm2 0h1v1h-1zm-1 1h1v1h-1zM490 426h1v1h-1zm-1 1h1v1h-1zm2 0h1v1h-1zm-1 1h1v1h-1zM777 422h1v1h-1zm-1 1h1v1h-1zm2 0h1v1h-1zm-1 1h1v1h-1zM534 418h1v1h-1zm-1 1h1v1h-1zm2 0h1v1h-1zm-1 1h1v1h-1zM514 422h1v1h-1zm-1 1h1v1h-1zm2 0h1v1h-1zm-1 1h1v1h-1zM648 426h1v1h-1zm-1 1h1v1h-1zm2 0h1v1h-1zm-1 1h1v1h-1zM512 425h1v1h-1zm-1 1h1v1h-1zm2 0h1v1h-1zm-1 1h1v1h-1zM810 430h1v1h-1zm-1 1h1v1h-1zm2 0h1v1h-1zm-1 1h1v1h-1zM559 423h1v1h-1zm-1 1h1v1h-1zm2 0h1v1h-1zm-1 1h1v1h-1zM693 425h1v1h-1zm-1 1h1v1h-1zm2 0h1v1h-1zm-1 1h1v1h-1zM664 421h1v1h-1zm-1 1h1v1h-1zm2 0h1v1h-1zm-1 1h1v1h-1zM742 428h1v1h-1zm-1 1h1v1h-1zm2 0h1v1h-1zm-1 1h1v1h-1zM618 425h1v1h-1zm-1 1h1v1h-1zm2 0h1v1h-1zm-1 1h1v1h-1zM498 421h1v1h-1zm-1 1h1v1h-1zm2 0h1v1h-1zm-1 1h1v1h-1zM509 428h1v1h-1zm-1 1h1v1h-1zm2 0h1v1h-1zm-1 1h1v1h-1zM637 425h1v1h-1zm-1 1h1v1h-1zm2 0h1v1h-1zm-1 1h1v1h-1zM568 430h1v1h-1zm-1 1h1v1h-1zm2 0h1v1h-1zm-1 1h1v1h-1zM682 431h1v1h-1zm-1 1h1v1h-1zm2 0h1v1h-1zm-1 1h1v1h-1zM499 426h1v1h-1zm-1 1h1v1h-1zm2 0h1v1h-1zm-1 1h1v1h-1zM800 421h1v1h-1zm-1 1h1v1h-1zm2 0h1v1h-1zm-1 1h1v1h-1zM597 422h1v1h-1zm-1 1h1v1h-1zm2 0h1v1h-1zm-1 1h1v1h-1zM676 422h1v1h-1zm-1 1h1v1h-1zm2 0h1v1h-1zm-1 1h1v1h-1zM723 419h1v1h-1zm-1 1h1v1h-1zm2 0h1v1h-1zm-1 1h1v1h-1zM763 425h1v1h-1zm-1 1h1v1h-1zm2 0h1v1h-1zm-1 1h1v1h-1zM746 422h1v1h-1zm-1 1h1v1h-1zm2 0h1v1h-1zm-1 1h1v1h-1zM721 427h1v1h-1zm-1 1h1v1h-1zm2 0h1v1h-1zm-1 1h1v1h-1zM751 422h1v1h-1zm-1 1h1v1h-1zm2 0h1v1h-1zm-1 1h1v1h-1zM723 424h1v1h-1zm-1 1h1v1h-1zm2 0h1v1h-1zm-1 1h1v1h-1zM747 423h1v1h-1zm-1 1h1v1h-1zm2 0h1v1h-1zm-1 1h1v1h-1zM758 427h1v1h-1zm-1 1h1v1h-1zm2 0h1v1h-1zm-1 1h1v1h-1zM596 420h1v1h-1zm-1 1h1v1h-1zm2 0h1v1h-1zm-1 1h1v1h-1zM599 422h1v1h-1zm-1 1h1v1h-1zm2 0h1v1h-1zm-1 1h1v1h-1zM593 424h1v1h-1zm-1 1h1v1h-1zm2 0h1v1h-1zm-1 1h1v1h-1zM615 428h1v1h-1zm-1 1h1v1h-1zm2 0h1v1h-1zm-1 1h1v1h-1zM579 425h1v1h-1zm-1 1h1v1h-1zm2 0h1v1h-1zm-1 1h1v1h-1zM629 427h1v1h-1zm-1 1h1v1h-1zm2 0h1v1h-1zm-1 1h1v1h-1zM785 428h1v1h-1zm-1 1h1v1h-1zm2 0h1v1h-1zm-1 1h1v1h-1zM776 427h1v1h-1zm-1 1h1v1h-1zm2 0h1v1h-1zm-1 1h1v1h-1zM494 419h1v1h-1zm-1 1h1v1h-1zm2 0h1v1h-1zm-1 1h1v1h-1zM471 418h1v1h-1zm-1 1h1v1h-1zm2 0h1v1h-1zm-1 1h1v1h-1zM467 428h1v1h-1zm-1 1h1v1h-1zm2 0h1v1h-1zm-1 1h1v1h-1zM481 432h1v1h-1zm-1 1h1v1h-1zm2 0h1v1h-1zm-1 1h1v1h-1zM756 424h1v1h-1zm-1 1h1v1h-1zm2 0h1v1h-1zm-1 1h1v1h-1zM753 423h1v1h-1zm-1 1h1v1h-1zm2 0h1v1h-1zm-1 1h1v1h-1zM715 423h1v1h-1zm-1 1h1v1h-1zm2 0h1v1h-1zm-1 1h1v1h-1zM762 425h1v1h-1zm-1 1h1v1h-1zm2 0h1v1h-1zm-1 1h1v1h-1zM747 428h1v1h-1zm-1 1h1v1h-1zm2 0h1v1h-1zm-1 1h1v1h-1zM780 428h1v1h-1zm-1 1h1v1h-1zm2 0h1v1h-1zm-1 1h1v1h-1zM508 427h1v1h-1zm-1 1h1v1h-1zm2 0h1v1h-1zm-1 1h1v1h-1zM517 424h1v1h-1zm-1 1h1v1h-1zm2 0h1v1h-1zm-1 1h1v1h-1zM562 427h1v1h-1zm-1 1h1v1h-1zm2 0h1v1h-1zm-1 1h1v1h-1zM621 425h1v1h-1zm-1 1h1v1h-1zm2 0h1v1h-1zm-1 1h1v1h-1zM658 424h1v1h-1zm-1 1h1v1h-1zm2 0h1v1h-1zm-1 1h1v1h-1zM649 428h1v1h-1zm-1 1h1v1h-1zm2 0h1v1h-1zm-1 1h1v1h-1zM667 421h1v1h-1zm-1 1h1v1h-1zm2 0h1v1h-1zm-1 1h1v1h-1zM653 432h1v1h-1zm-1 1h1v1h-1zm2 0h1v1h-1zm-1 1h1v1h-1zM632 425h1v1h-1zm-1 1h1v1h-1zm2 0h1v1h-1zm-1 1h1v1h-1zM667 416h1v1h-1zm-1 1h1v1h-1zm2 0h1v1h-1zm-1 1h1v1h-1zM644 430h1v1h-1zm-1 1h1v1h-1zm2 0h1v1h-1zm-1 1h1v1h-1zM648 433h1v1h-1zm-1 1h1v1h-1zm2 0h1v1h-1zm-1 1h1v1h-1zM512 429h1v1h-1zm-1 1h1v1h-1zm2 0h1v1h-1zm-1 1h1v1h-1zM498 433h1v1h-1zm-1 1h1v1h-1zm2 0h1v1h-1zm-1 1h1v1h-1zM750 423h1v1h-1zm-1 1h1v1h-1zm2 0h1v1h-1zm-1 1h1v1h-1zM737 416h1v1h-1zm-1 1h1v1h-1zm2 0h1v1h-1zm-1 1h1v1h-1zM745 426h1v1h-1zm-1 1h1v1h-1zm2 0h1v1h-1zm-1 1h1v1h-1zM756 428h1v1h-1zm-1 1h1v1h-1zm2 0h1v1h-1zm-1 1h1v1h-1zM750 422h1v1h-1zm-1 1h1v1h-1zm2 0h1v1h-1zm-1 1h1v1h-1zM759 428h1v1h-1zm-1 1h1v1h-1zm2 0h1v1h-1zm-1 1h1v1h-1zM735 419h1v1h-1zm-1 1h1v1h-1zm2 0h1v1h-1zm-1 1h1v1h-1zM732 429h1v1h-1zm-1 1h1v1h-1zm2 0h1v1h-1zm-1 1h1v1h-1zM548 423h1v1h-1zm-1 1h1v1h-1zm2 0h1v1h-1zm-1 1h1v1h-1zM546 434h1v1h-1zm-1 1h1v1h-1zm2 0h1v1h-1zm-1 1h1v1h-1zM552 422h1v1h-1zm-1 1h1v1h-1zm2 0h1v1h-1zm-1 1h1v1h-1zM555 424h1v1h-1zm-1 1h1v1h-1zm2 0h1v1h-1zm-1 1h1v1h-1zM582 425h1v1h-1zm-1 1h1v1h-1zm2 0h1v1h-1zm-1 1h1v1h-1zM536 424h1v1h-1zm-1 1h1v1h-1zm2 0h1v1h-1zm-1 1h1v1h-1zM586 427h1v1h-1zm-1 1h1v1h-1zm2 0h1v1h-1zm-1 1h1v1h-1zM560 432h1v1h-1zm-1 1h1v1h-1zm2 0h1v1h-1zm-1 1h1v1h-1zM567 427h1v1h-1zm-1 1h1v1h-1zm2 0h1v1h-1zm-1 1h1v1h-1zM560 422h1v1h-1zm-1 1h1v1h-1zm2 0h1v1h-1zm-1 1h1v1h-1zM467 424h1v1h-1zm-1 1h1v1h-1zm2 0h1v1h-1zm-1 1h1v1h-1zM498 418h1v1h-1zm-1 1h1v1h-1zm2 0h1v1h-1zm-1 1h1v1h-1zM485 426h1v1h-1zm-1 1h1v1h-1zm2 0h1v1h-1zm-1 1h1v1h-1zM473 421h1v1h-1zm-1 1h1v1h-1zm2 0h1v1h-1zm-1 1h1v1h-1zM484 423h1v1h-1zm-1 1h1v1h-1zm2 0h1v1h-1zm-1 1h1v1h-1zM546 423h1v1h-1zm-1 1h1v1h-1zm2 0h1v1h-1zm-1 1h1v1h-1zM550 430h1v1h-1zm-1 1h1v1h-1zm2 0h1v1h-1zm-1 1h1v1h-1zM560 420h1v1h-1zm-1 1h1v1h-1zm2 0h1v1h-1zm-1 1h1v1h-1zM630 420h1v1h-1zm-1 1h1v1h-1zm2 0h1v1h-1zm-1 1h1v1h-1zM583 424h1v1h-1zm-1 1h1v1h-1zm2 0h1v1h-1zm-1 1h1v1h-1zM629 431h1v1h-1zm-1 1h1v1h-1zm2 0h1v1h-1zm-1 1h1v1h-1zM628 430h1v1h-1zm-1 1h1v1h-1zm2 0h1v1h-1zm-1 1h1v1h-1zM694 428h1v1h-1zm-1 1h1v1h-1zm2 0h1v1h-1zm-1 1h1v1h-1zM714 418h1v1h-1zm-1 1h1v1h-1zm2 0h1v1h-1zm-1 1h1v1h-1zM711 430h1v1h-1zm-1 1h1v1h-1zm2 0h1v1h-1zm-1 1h1v1h-1zM712 430h1v1h-1zm-1 1h1v1h-1zm2 0h1v1h-1zm-1 1h1v1h-1zM707 425h1v1h-1zm-1 1h1v1h-1zm2 0h1v1h-1zm-1 1h1v1h-1zM574 420h1v1h-1zm-1 1h1v1h-1zm2 0h1v1h-1zm-1 1h1v1h-1zM585 423h1v1h-1zm-1 1h1v1h-1zm2 0h1v1h-1zm-1 1h1v1h-1zM580 426h1v1h-1zm-1 1h1v1h-1zm2 0h1v1h-1zm-1 1h1v1h-1zM685 427h1v1h-1zm-1 1h1v1h-1zm2 0h1v1h-1zm-1 1h1v1h-1zM697 432h1v1h-1zm-1 1h1v1h-1zm2 0h1v1h-1zm-1 1h1v1h-1zM727 429h1v1h-1zm-1 1h1v1h-1zm2 0h1v1h-1zm-1 1h1v1h-1zM683 423h1v1h-1zm-1 1h1v1h-1zm2 0h1v1h-1zm-1 1h1v1h-1zM485 427h1v1h-1zm-1 1h1v1h-1zm2 0h1v1h-1zm-1 1h1v1h-1zM482 426h1v1h-1zm-1 1h1v1h-1zm2 0h1v1h-1zm-1 1h1v1h-1zM474 430h1v1h-1zm-1 1h1v1h-1zm2 0h1v1h-1zm-1 1h1v1h-1zM470 425h1v1h-1zm-1 1h1v1h-1zm2 0h1v1h-1zm-1 1h1v1h-1zM615 429h1v1h-1zm-1 1h1v1h-1zm2 0h1v1h-1zm-1 1h1v1h-1zM596 428h1v1h-1zm-1 1h1v1h-1zm2 0h1v1h-1zm-1 1h1v1h-1zM604 430h1v1h-1zm-1 1h1v1h-1zm2 0h1v1h-1zm-1 1h1v1h-1zM604 419h1v1h-1zm-1 1h1v1h-1zm2 0h1v1h-1zm-1 1h1v1h-1zM606 427h1v1h-1zm-1 1h1v1h-1zm2 0h1v1h-1zm-1 1h1v1h-1zM584 427h1v1h-1zm-1 1h1v1h-1zm2 0h1v1h-1zm-1 1h1v1h-1zM640 426h1v1h-1zm-1 1h1v1h-1zm2 0h1v1h-1zm-1 1h1v1h-1zM620 413h1v1h-1zm-1 1h1v1h-1zm2 0h1v1h-1zm-1 1h1v1h-1zM630 428h1v1h-1zm-1 1h1v1h-1zm2 0h1v1h-1zm-1 1h1v1h-1zM806 427h1v1h-1zm-1 1h1v1h-1zm2 0h1v1h-1zm-1 1h1v1h-1zM796 422h1v1h-1zm-1 1h1v1h-1zm2 0h1v1h-1zm-1 1h1v1h-1z" fill="#3cff3c" shape-rendering="crispEdges"/>
<path d="M111 280L115 280L116 291L112.5 292L111.5 286Z" fill="#3cff3c"/>
<path d="M107 299h6v-6h3v6h6v3h-6v6h-3v-6h-6z" fill="#3cff3c"/>
<path d="M116 303h4l-4 4z" fill="#3cff3c"/>
<path d="M990 432h1v1h-1zm-1 1h1v1h-1zm2 0h1v1h-1zm-1 1h1v1h-1zM990 428h1v1h-1zm-1 1h1v1h-1zm2 0h1v1h-1zm-1 1h1v1h-1zM1001 417h1v1h-1zm-1 1h1v1h-1zm2 0h1v1h-1zm-1 1h1v1h-1zM1003 405h1v1h-1zm-1 1h1v1h-1zm2 0h1v1h-1zm-1 1h1v1h-1zM1010 398h1v1h-1zm-1 1h1v1h-1zm2 0h1v1h-1zm-1 1h1v1h-1zM1014 395h1v1h-1zm-1 1h1v1h-1zm2 0h1v1h-1zm-1 1h1v1h-1zM1018 383h1v1h-1zm-1 1h1v1h-1zm2 0h1v1h-1zm-1 1h1v1h-1zM1025 377h1v1h-1zm-1 1h1v1h-1zm2 0h1v1h-1zm-1 1h1v1h-1zM1020 368h1v1h-1zm-1 1h1v1h-1zm2 0h1v1h-1zm-1 1h1v1h-1zM1028 357h1v1h-1zm-1 1h1v1h-1zm2 0h1v1h-1zm-1 1h1v1h-1zM1032 354h1v1h-1zm-1 1h1v1h-1zm2 0h1v1h-1zm-1 1h1v1h-1zM1042 345h1v1h-1zm-1 1h1v1h-1zm2 0h1v1h-1zm-1 1h1v1h-1zM1051 332h1v1h-1zm-1 1h1v1h-1zm2 0h1v1h-1zm-1 1h1v1h-1zM1050 328h1v1h-1zm-1 1h1v1h-1zm2 0h1v1h-1zm-1 1h1v1h-1zM1054 321h1v1h-1zm-1 1h1v1h-1zm2 0h1v1h-1zm-1 1h1v1h-1zM1056 310h1v1h-1zm-1 1h1v1h-1zm2 0h1v1h-1zm-1 1h1v1h-1zM1061 303h1v1h-1zm-1 1h1v1h-1zm2 0h1v1h-1zm-1 1h1v1h-1zM1066 292h1v1h-1zm-1 1h1v1h-1zm2 0h1v1h-1zm-1 1h1v1h-1zM1072 285h1v1h-1zm-1 1h1v1h-1zm2 0h1v1h-1zm-1 1h1v1h-1zM1079 277h1v1h-1zm-1 1h1v1h-1zm2 0h1v1h-1zm-1 1h1v1h-1zM1088 272h1v1h-1zm-1 1h1v1h-1zm2 0h1v1h-1zm-1 1h1v1h-1zM1090 261h1v1h-1zm-1 1h1v1h-1zm2 0h1v1h-1zm-1 1h1v1h-1zM1093 252h1v1h-1zm-1 1h1v1h-1zm2 0h1v1h-1zm-1 1h1v1h-1zM1101 247h1v1h-1zm-1 1h1v1h-1zm2 0h1v1h-1zm-1 1h1v1h-1zM1103 236h1v1h-1zm-1 1h1v1h-1zm2 0h1v1h-1zm-1 1h1v1h-1zM1107 230h1v1h-1zm-1 1h1v1h-1zm2 0h1v1h-1zm-1 1h1v1h-1zM1115 227h1v1h-1zm-1 1h1v1h-1zm2 0h1v1h-1zm-1 1h1v1h-1zM1124 213h1v1h-1zm-1 1h1v1h-1zm2 0h1v1h-1zm-1 1h1v1h-1zM1128 205h1v1h-1zm-1 1h1v1h-1zm2 0h1v1h-1zm-1 1h1v1h-1zM1139 200h1v1h-1zm-1 1h1v1h-1zm2 0h1v1h-1zm-1 1h1v1h-1zM1144 195h1v1h-1zm-1 1h1v1h-1zm2 0h1v1h-1zm-1 1h1v1h-1zM1151 181h1v1h-1zm-1 1h1v1h-1zm2 0h1v1h-1zm-1 1h1v1h-1zM1154 178h1v1h-1zm-1 1h1v1h-1zm2 0h1v1h-1zm-1 1h1v1h-1zM1159 176h1v1h-1zm-1 1h1v1h-1zm2 0h1v1h-1zm-1 1h1v1h-1zM1169 168h1v1h-1zm-1 1h1v1h-1zm2 0h1v1h-1zm-1 1h1v1h-1zM1180 156h1v1h-1zm-1 1h1v1h-1zm2 0h1v1h-1zm-1 1h1v1h-1zM1186 148h1v1h-1zm-1 1h1v1h-1zm2 0h1v1h-1zm-1 1h1v1h-1zM1190 139h1v1h-1zm-1 1h1v1h-1zm2 0h1v1h-1zm-1 1h1v1h-1zM1203 135h1v1h-1zm-1 1h1v1h-1zm2 0h1v1h-1zm-1 1h1v1h-1zM1209 136h1v1h-1zm-1 1h1v1h-1zm2 0h1v1h-1zm-1 1h1v1h-1zM1218 130h1v1h-1zm-1 1h1v1h-1zm2 0h1v1h-1zm-1 1h1v1h-1zM1226 127h1v1h-1zm-1 1h1v1h-1zm2 0h1v1h-1zm-1 1h1v1h-1zM1233 126h1v1h-1zm-1 1h1v1h-1zm2 0h1v1h-1zm-1 1h1v1h-1zM1236 116h1v1h-1zm-1 1h1v1h-1zm2 0h1v1h-1zm-1 1h1v1h-1zM1244 115h1v1h-1zm-1 1h1v1h-1zm2 0h1v1h-1zm-1 1h1v1h-1zM1251 106h1v1h-1zm-1 1h1v1h-1zm2 0h1v1h-1zm-1 1h1v1h-1zM1263 101h1v1h-1zm-1 1h1v1h-1zm2 0h1v1h-1zm-1 1h1v1h-1zM1267 99h1v1h-1zm-1 1h1v1h-1zm2 0h1v1h-1zm-1 1h1v1h-1zM1274 93h1v1h-1zm-1 1h1v1h-1zm2 0h1v1h-1zm-1 1h1v1h-1zM1283 94h1v1h-1zm-1 1h1v1h-1zm2 0h1v1h-1zm-1 1h1v1h-1zM1298 92h1v1h-1zm-1 1h1v1h-1zm2 0h1v1h-1zm-1 1h1v1h-1zM1310 84h1v1h-1zm-1 1h1v1h-1zm2 0h1v1h-1zm-1 1h1v1h-1zM1689 92h1v1h-1zm-1 1h1v1h-1zm2 0h1v1h-1zm-1 1h1v1h-1zM1833 98h1v1h-1zm-1 1h1v1h-1zm2 0h1v1h-1zm-1 1h1v1h-1zM1687 98h1v1h-1zm-1 1h1v1h-1zm2 0h1v1h-1zm-1 1h1v1h-1zM1854 100h1v1h-1zm-1 1h1v1h-1zm2 0h1v1h-1zm-1 1h1v1h-1zM1667 83h1v1h-1zm-1 1h1v1h-1zm2 0h1v1h-1zm-1 1h1v1h-1zM1352 71h1v1h-1zm-1 1h1v1h-1zm2 0h1v1h-1zm-1 1h1v1h-1zM1335 82h1v1h-1zm-1 1h1v1h-1zm2 0h1v1h-1zm-1 1h1v1h-1zM1522 76h1v1h-1zm-1 1h1v1h-1zm2 0h1v1h-1zm-1 1h1v1h-1zM1462 84h1v1h-1zm-1 1h1v1h-1zm2 0h1v1h-1zm-1 1h1v1h-1zM1392 69h1v1h-1zm-1 1h1v1h-1zm2 0h1v1h-1zm-1 1h1v1h-1zM1397 81h1v1h-1zm-1 1h1v1h-1zm2 0h1v1h-1zm-1 1h1v1h-1zM1686 89h1v1h-1zm-1 1h1v1h-1zm2 0h1v1h-1zm-1 1h1v1h-1zM1498 81h1v1h-1zm-1 1h1v1h-1zm2 0h1v1h-1zm-1 1h1v1h-1zM1545 85h1v1h-1zm-1 1h1v1h-1zm2 0h1v1h-1zm-1 1h1v1h-1zM1707 95h1v1h-1zm-1 1h1v1h-1zm2 0h1v1h-1zm-1 1h1v1h-1zM1621 83h1v1h-1zm-1 1h1v1h-1zm2 0h1v1h-1zm-1 1h1v1h-1zM1527 78h1v1h-1zm-1 1h1v1h-1zm2 0h1v1h-1zm-1 1h1v1h-1zM1511 85h1v1h-1zm-1 1h1v1h-1zm2 0h1v1h-1zm-1 1h1v1h-1zM1332 82h1v1h-1zm-1 1h1v1h-1zm2 0h1v1h-1zm-1 1h1v1h-1zM1587 75h1v1h-1zm-1 1h1v1h-1zm2 0h1v1h-1zm-1 1h1v1h-1zM1489 74h1v1h-1zm-1 1h1v1h-1zm2 0h1v1h-1zm-1 1h1v1h-1zM1447 82h1v1h-1zm-1 1h1v1h-1zm2 0h1v1h-1zm-1 1h1v1h-1zM1817 96h1v1h-1zm-1 1h1v1h-1zm2 0h1v1h-1zm-1 1h1v1h-1zM1628 83h1v1h-1zm-1 1h1v1h-1zm2 0h1v1h-1zm-1 1h1v1h-1zM1408 88h1v1h-1zm-1 1h1v1h-1zm2 0h1v1h-1zm-1 1h1v1h-1zM1572 69h1v1h-1zm-1 1h1v1h-1zm2 0h1v1h-1zm-1 1h1v1h-1zM1510 68h1v1h-1zm-1 1h1v1h-1zm2 0h1v1h-1zm-1 1h1v1h-1zM1634 95h1v1h-1zm-1 1h1v1h-1zm2 0h1v1h-1zm-1 1h1v1h-1zM1664 83h1v1h-1zm-1 1h1v1h-1zm2 0h1v1h-1zm-1 1h1v1h-1zM1660 81h1v1h-1zm-1 1h1v1h-1zm2 0h1v1h-1zm-1 1h1v1h-1zM1460 80h1v1h-1zm-1 1h1v1h-1zm2 0h1v1h-1zm-1 1h1v1h-1zM1781 97h1v1h-1zm-1 1h1v1h-1zm2 0h1v1h-1zm-1 1h1v1h-1zM1828 93h1v1h-1zm-1 1h1v1h-1zm2 0h1v1h-1zm-1 1h1v1h-1zM1322 85h1v1h-1zm-1 1h1v1h-1zm2 0h1v1h-1zm-1 1h1v1h-1zM1479 84h1v1h-1zm-1 1h1v1h-1zm2 0h1v1h-1zm-1 1h1v1h-1zM1509 82h1v1h-1zm-1 1h1v1h-1zm2 0h1v1h-1zm-1 1h1v1h-1zM1412 75h1v1h-1zm-1 1h1v1h-1zm2 0h1v1h-1zm-1 1h1v1h-1zM1433 73h1v1h-1zm-1 1h1v1h-1zm2 0h1v1h-1zm-1 1h1v1h-1zM1301 75h1v1h-1zm-1 1h1v1h-1zm2 0h1v1h-1zm-1 1h1v1h-1zM1615 79h1v1h-1zm-1 1h1v1h-1zm2 0h1v1h-1zm-1 1h1v1h-1zM1586 85h1v1h-1zm-1 1h1v1h-1zm2 0h1v1h-1zm-1 1h1v1h-1zM1677 79h1v1h-1zm-1 1h1v1h-1zm2 0h1v1h-1zm-1 1h1v1h-1zM1625 81h1v1h-1zm-1 1h1v1h-1zm2 0h1v1h-1zm-1 1h1v1h-1zM1782 98h1v1h-1zm-1 1h1v1h-1zm2 0h1v1h-1zm-1 1h1v1h-1zM1501 77h1v1h-1zm-1 1h1v1h-1zm2 0h1v1h-1zm-1 1h1v1h-1zM1814 93h1v1h-1zm-1 1h1v1h-1zm2 0h1v1h-1zm-1 1h1v1h-1zM1703 96h1v1h-1zm-1 1h1v1h-1zm2 0h1v1h-1zm-1 1h1v1h-1zM1698 101h1v1h-1zm-1 1h1v1h-1zm2 0h1v1h-1zm-1 1h1v1h-1zM1392 73h1v1h-1zm-1 1h1v1h-1zm2 0h1v1h-1zm-1 1h1v1h-1zM1661 78h1v1h-1zm-1 1h1v1h-1zm2 0h1v1h-1zm-1 1h1v1h-1zM1514 79h1v1h-1zm-1 1h1v1h-1zm2 0h1v1h-1zm-1 1h1v1h-1zM1466 76h1v1h-1zm-1 1h1v1h-1zm2 0h1v1h-1zm-1 1h1v1h-1zM1437 65h1v1h-1zm-1 1h1v1h-1zm2 0h1v1h-1zm-1 1h1v1h-1zM1445 73h1v1h-1zm-1 1h1v1h-1zm2 0h1v1h-1zm-1 1h1v1h-1zM1598 86h1v1h-1zm-1 1h1v1h-1zm2 0h1v1h-1zm-1 1h1v1h-1zM1373 80h1v1h-1zm-1 1h1v1h-1zm2 0h1v1h-1zm-1 1h1v1h-1zM1359 79h1v1h-1zm-1 1h1v1h-1zm2 0h1v1h-1zm-1 1h1v1h-1zM1709 94h1v1h-1zm-1 1h1v1h-1zm2 0h1v1h-1zm-1 1h1v1h-1zM1748 95h1v1h-1zm-1 1h1v1h-1zm2 0h1v1h-1zm-1 1h1v1h-1zM1579 88h1v1h-1zm-1 1h1v1h-1zm2 0h1v1h-1zm-1 1h1v1h-1zM1805 103h1v1h-1zm-1 1h1v1h-1zm2 0h1v1h-1zm-1 1h1v1h-1zM1331 78h1v1h-1zm-1 1h1v1h-1zm2 0h1v1h-1zm-1 1h1v1h-1zM1762 98h1v1h-1zm-1 1h1v1h-1zm2 0h1v1h-1zm-1 1h1v1h-1zM1528 78h1v1h-1zm-1 1h1v1h-1zm2 0h1v1h-1zm-1 1h1v1h-1zM1715 87h1v1h-1zm-1 1h1v1h-1zm2 0h1v1h-1zm-1 1h1v1h-1zM1490 72h1v1h-1zm-1 1h1v1h-1zm2 0h1v1h-1zm-1 1h1v1h-1zM1789 101h1v1h-1zm-1 1h1v1h-1zm2 0h1v1h-1zm-1 1h1v1h-1zM1781 90h1v1h-1zm-1 1h1v1h-1zm2 0h1v1h-1zm-1 1h1v1h-1zM1710 88h1v1h-1zm-1 1h1v1h-1zm2 0h1v1h-1zm-1 1h1v1h-1zM1661 92h1v1h-1zm-1 1h1v1h-1zm2 0h1v1h-1zm-1 1h1v1h-1zM1373 64h1v1h-1zm-1 1h1v1h-1zm2 0h1v1h-1zm-1 1h1v1h-1zM1519 77h1v1h-1zm-1 1h1v1h-1zm2 0h1v1h-1zm-1 1h1v1h-1zM1407 71h1v1h-1zm-1 1h1v1h-1zm2 0h1v1h-1zm-1 1h1v1h-1zM1308 63h1v1h-1zm-1 1h1v1h-1zm2 0h1v1h-1zm-1 1h1v1h-1zM1863 93h1v1h-1zm-1 1h1v1h-1zm2 0h1v1h-1zm-1 1h1v1h-1zM1378 73h1v1h-1zm-1 1h1v1h-1zm2 0h1v1h-1zm-1 1h1v1h-1zM1666 81h1v1h-1zm-1 1h1v1h-1zm2 0h1v1h-1zm-1 1h1v1h-1zM1530 97h1v1h-1zm-1 1h1v1h-1zm2 0h1v1h-1zm-1 1h1v1h-1zM1328 69h1v1h-1zm-1 1h1v1h-1zm2 0h1v1h-1zm-1 1h1v1h-1zM1714 91h1v1h-1zm-1 1h1v1h-1zm2 0h1v1h-1zm-1 1h1v1h-1zM1466 78h1v1h-1zm-1 1h1v1h-1zm2 0h1v1h-1zm-1 1h1v1h-1zM1724 93h1v1h-1zm-1 1h1v1h-1zm2 0h1v1h-1zm-1 1h1v1h-1zM1491 77h1v1h-1zm-1 1h1v1h-1zm2 0h1v1h-1zm-1 1h1v1h-1zM1315 70h1v1h-1zm-1 1h1v1h-1zm2 0h1v1h-1zm-1 1h1v1h-1zM1517 77h1v1h-1zm-1 1h1v1h-1zm2 0h1v1h-1zm-1 1h1v1h-1zM1479 81h1v1h-1zm-1 1h1v1h-1zm2 0h1v1h-1zm-1 1h1v1h-1zM1465 61h1v1h-1zm-1 1h1v1h-1zm2 0h1v1h-1zm-1 1h1v1h-1zM1527 71h1v1h-1zm-1 1h1v1h-1zm2 0h1v1h-1zm-1 1h1v1h-1zM1869 93h1v1h-1zm-1 1h1v1h-1zm2 0h1v1h-1zm-1 1h1v1h-1zM1526 76h1v1h-1zm-1 1h1v1h-1zm2 0h1v1h-1zm-1 1h1v1h-1zM1764 88h1v1h-1zm-1 1h1v1h-1zm2 0h1v1h-1zm-1 1h1v1h-1zM1385 78h1v1h-1zm-1 1h1v1h-1zm2 0h1v1h-1zm-1 1h1v1h-1zM1841 99h1v1h-1zm-1 1h1v1h-1zm2 0h1v1h-1zm-1 1h1v1h-1zM1446 71h1v1h-1zm-1 1h1v1h-1zm2 0h1v1h-1zm-1 1h1v1h-1zM1488 77h1v1h-1zm-1 1h1v1h-1zm2 0h1v1h-1zm-1 1h1v1h-1zM1311 75h1v1h-1zm-1 1h1v1h-1zm2 0h1v1h-1zm-1 1h1v1h-1zM1663 85h1v1h-1zm-1 1h1v1h-1zm2 0h1v1h-1zm-1 1h1v1h-1zM1459 77h1v1h-1zm-1 1h1v1h-1zm2 0h1v1h-1zm-1 1h1v1h-1zM1512 86h1v1h-1zm-1 1h1v1h-1zm2 0h1v1h-1zm-1 1h1v1h-1zM1451 78h1v1h-1zm-1 1h1v1h-1zm2 0h1v1h-1zm-1 1h1v1h-1zM1818 96h1v1h-1zm-1 1h1v1h-1zm2 0h1v1h-1zm-1 1h1v1h-1zM1479 81h1v1h-1zm-1 1h1v1h-1zm2 0h1v1h-1zm-1 1h1v1h-1zM1580 83h1v1h-1zm-1 1h1v1h-1zm2 0h1v1h-1zm-1 1h1v1h-1zM1878 102h1v1h-1zm-1 1h1v1h-1zm2 0h1v1h-1zm-1 1h1v1h-1zM1581 94h1v1h-1zm-1 1h1v1h-1zm2 0h1v1h-1zm-1 1h1v1h-1zM1540 82h1v1h-1zm-1 1h1v1h-1zm2 0h1v1h-1zm-1 1h1v1h-1zM1333 71h1v1h-1zm-1 1h1v1h-1zm2 0h1v1h-1zm-1 1h1v1h-1zM1619 78h1v1h-1zm-1 1h1v1h-1zm2 0h1v1h-1zm-1 1h1v1h-1zM1461 66h1v1h-1zm-1 1h1v1h-1zm2 0h1v1h-1zm-1 1h1v1h-1zM1845 107h1v1h-1zm-1 1h1v1h-1zm2 0h1v1h-1zm-1 1h1v1h-1zM1557 65h1v1h-1zm-1 1h1v1h-1zm2 0h1v1h-1zm-1 1h1v1h-1zM1784 94h1v1h-1zm-1 1h1v1h-1zm2 0h1v1h-1zm-1 1h1v1h-1zM1316 74h1v1h-1zm-1 1h1v1h-1zm2 0h1v1h-1zm-1 1h1v1h-1zM1398 78h1v1h-1zm-1 1h1v1h-1zm2 0h1v1h-1zm-1 1h1v1h-1zM1508 80h1v1h-1zm-1 1h1v1h-1zm2 0h1v1h-1zm-1 1h1v1h-1zM1737 90h1v1h-1zm-1 1h1v1h-1zm2 0h1v1h-1zm-1 1h1v1h-1zM1306 89h1v1h-1zm-1 1h1v1h-1zm2 0h1v1h-1zm-1 1h1v1h-1zM1422 77h1v1h-1zm-1 1h1v1h-1zm2 0h1v1h-1zm-1 1h1v1h-1zM1606 82h1v1h-1zm-1 1h1v1h-1zm2 0h1v1h-1zm-1 1h1v1h-1zM1770 95h1v1h-1zm-1 1h1v1h-1zm2 0h1v1h-1zm-1 1h1v1h-1zM1532 69h1v1h-1zm-1 1h1v1h-1zm2 0h1v1h-1zm-1 1h1v1h-1zM1766 97h1v1h-1zm-1 1h1v1h-1zm2 0h1v1h-1zm-1 1h1v1h-1zM1872 92h1v1h-1zm-1 1h1v1h-1zm2 0h1v1h-1zm-1 1h1v1h-1zM1358 85h1v1h-1zm-1 1h1v1h-1zm2 0h1v1h-1zm-1 1h1v1h-1zM1709 89h1v1h-1zm-1 1h1v1h-1zm2 0h1v1h-1zm-1 1h1v1h-1zM1445 77h1v1h-1zm-1 1h1v1h-1zm2 0h1v1h-1zm-1 1h1v1h-1zM1635 84h1v1h-1zm-1 1h1v1h-1zm2 0h1v1h-1zm-1 1h1v1h-1zM1432 69h1v1h-1zm-1 1h1v1h-1zm2 0h1v1h-1zm-1 1h1v1h-1zM1681 92h1v1h-1zm-1 1h1v1h-1zm2 0h1v1h-1zm-1 1h1v1h-1zM1770 89h1v1h-1zm-1 1h1v1h-1zm2 0h1v1h-1zm-1 1h1v1h-1zM1505 85h1v1h-1zm-1 1h1v1h-1zm2 0h1v1h-1zm-1 1h1v1h-1zM1462 82h1v1h-1zm-1 1h1v1h-1zm2 0h1v1h-1zm-1 1h1v1h-1zM1355 74h1v1h-1zm-1 1h1v1h-1zm2 0h1v1h-1zm-1 1h1v1h-1zM1494 77h1v1h-1zm-1 1h1v1h-1zm2 0h1v1h-1zm-1 1h1v1h-1zM1731 88h1v1h-1zm-1 1h1v1h-1zm2 0h1v1h-1zm-1 1h1v1h-1zM1617 81h1v1h-1zm-1 1h1v1h-1zm2 0h1v1h-1zm-1 1h1v1h-1zM1361 73h1v1h-1zm-1 1h1v1h-1zm2 0h1v1h-1zm-1 1h1v1h-1zM1383 71h1v1h-1zm-1 1h1v1h-1zm2 0h1v1h-1zm-1 1h1v1h-1zM1305 87h1v1h-1zm-1 1h1v1h-1zm2 0h1v1h-1zm-1 1h1v1h-1zM1591 77h1v1h-1zm-1 1h1v1h-1zm2 0h1v1h-1zm-1 1h1v1h-1zM1336 59h1v1h-1zm-1 1h1v1h-1zm2 0h1v1h-1zm-1 1h1v1h-1zM1323 84h1v1h-1zm-1 1h1v1h-1zm2 0h1v1h-1zm-1 1h1v1h-1zM1354 72h1v1h-1zm-1 1h1v1h-1zm2 0h1v1h-1zm-1 1h1v1h-1zM1348 96h1v1h-1zm-1 1h1v1h-1zm2 0h1v1h-1zm-1 1h1v1h-1zM1352 59h1v1h-1zm-1 1h1v1h-1zm2 0h1v1h-1zm-1 1h1v1h-1zM1343 80h1v1h-1zm-1 1h1v1h-1zm2 0h1v1h-1zm-1 1h1v1h-1zM1342 77h1v1h-1zm-1 1h1v1h-1zm2 0h1v1h-1zm-1 1h1v1h-1zM1323 77h1v1h-1zm-1 1h1v1h-1zm2 0h1v1h-1zm-1 1h1v1h-1zM1348 85h1v1h-1zm-1 1h1v1h-1zm2 0h1v1h-1zm-1 1h1v1h-1zM1327 82h1v1h-1zm-1 1h1v1h-1zm2 0h1v1h-1zm-1 1h1v1h-1zM1398 80h1v1h-1zm-1 1h1v1h-1zm2 0h1v1h-1zm-1 1h1v1h-1zM1390 71h1v1h-1zm-1 1h1v1h-1zm2 0h1v1h-1zm-1 1h1v1h-1zM1383 73h1v1h-1zm-1 1h1v1h-1zm2 0h1v1h-1zm-1 1h1v1h-1zM1385 64h1v1h-1zm-1 1h1v1h-1zm2 0h1v1h-1zm-1 1h1v1h-1zM1377 84h1v1h-1zm-1 1h1v1h-1zm2 0h1v1h-1zm-1 1h1v1h-1zM1380 66h1v1h-1zm-1 1h1v1h-1zm2 0h1v1h-1zm-1 1h1v1h-1zM1390 88h1v1h-1zm-1 1h1v1h-1zm2 0h1v1h-1zm-1 1h1v1h-1zM1401 73h1v1h-1zm-1 1h1v1h-1zm2 0h1v1h-1zm-1 1h1v1h-1zM1381 72h1v1h-1zm-1 1h1v1h-1zm2 0h1v1h-1zm-1 1h1v1h-1zM1382 72h1v1h-1zm-1 1h1v1h-1zm2 0h1v1h-1zm-1 1h1v1h-1zM1394 68h1v1h-1zm-1 1h1v1h-1zm2 0h1v1h-1zm-1 1h1v1h-1zM1383 74h1v1h-1zm-1 1h1v1h-1zm2 0h1v1h-1zm-1 1h1v1h-1zM1390 70h1v1h-1zm-1 1h1v1h-1zm2 0h1v1h-1zm-1 1h1v1h-1zM1383 67h1v1h-1zm-1 1h1v1h-1zm2 0h1v1h-1zm-1 1h1v1h-1zM1383 81h1v1h-1zm-1 1h1v1h-1zm2 0h1v1h-1zm-1 1h1v1h-1zM1388 52h1v1h-1zm-1 1h1v1h-1zm2 0h1v1h-1zm-1 1h1v1h-1zM1396 75h1v1h-1zm-1 1h1v1h-1zm2 0h1v1h-1zm-1 1h1v1h-1zM1382 74h1v1h-1zm-1 1h1v1h-1zm2 0h1v1h-1zm-1 1h1v1h-1zM1429 62h1v1h-1zm-1 1h1v1h-1zm2 0h1v1h-1zm-1 1h1v1h-1zM1454 92h1v1h-1zm-1 1h1v1h-1zm2 0h1v1h-1zm-1 1h1v1h-1zM1460 70h1v1h-1zm-1 1h1v1h-1zm2 0h1v1h-1zm-1 1h1v1h-1zM1447 81h1v1h-1zm-1 1h1v1h-1zm2 0h1v1h-1zm-1 1h1v1h-1zM1440 89h1v1h-1zm-1 1h1v1h-1zm2 0h1v1h-1zm-1 1h1v1h-1zM1443 78h1v1h-1zm-1 1h1v1h-1zm2 0h1v1h-1zm-1 1h1v1h-1zM1440 78h1v1h-1zm-1 1h1v1h-1zm2 0h1v1h-1zm-1 1h1v1h-1zM1447 84h1v1h-1zm-1 1h1v1h-1zm2 0h1v1h-1zm-1 1h1v1h-1zM1440 75h1v1h-1zm-1 1h1v1h-1zm2 0h1v1h-1zm-1 1h1v1h-1zM1458 66h1v1h-1zm-1 1h1v1h-1zm2 0h1v1h-1zm-1 1h1v1h-1zM1449 79h1v1h-1zm-1 1h1v1h-1zm2 0h1v1h-1zm-1 1h1v1h-1zM1444 73h1v1h-1zm-1 1h1v1h-1zm2 0h1v1h-1zm-1 1h1v1h-1zM1535 87h1v1h-1zm-1 1h1v1h-1zm2 0h1v1h-1zm-1 1h1v1h-1zM1527 81h1v1h-1zm-1 1h1v1h-1zm2 0h1v1h-1zm-1 1h1v1h-1zM1510 79h1v1h-1zm-1 1h1v1h-1zm2 0h1v1h-1zm-1 1h1v1h-1zM1539 87h1v1h-1zm-1 1h1v1h-1zm2 0h1v1h-1zm-1 1h1v1h-1zM1507 65h1v1h-1zm-1 1h1v1h-1zm2 0h1v1h-1zm-1 1h1v1h-1zM1514 80h1v1h-1zm-1 1h1v1h-1zm2 0h1v1h-1zm-1 1h1v1h-1zM1516 77h1v1h-1zm-1 1h1v1h-1zm2 0h1v1h-1zm-1 1h1v1h-1zM1524 85h1v1h-1zm-1 1h1v1h-1zm2 0h1v1h-1zm-1 1h1v1h-1zM1523 87h1v1h-1zm-1 1h1v1h-1zm2 0h1v1h-1zm-1 1h1v1h-1zM1507 81h1v1h-1zm-1 1h1v1h-1zm2 0h1v1h-1zm-1 1h1v1h-1zM1525 70h1v1h-1zm-1 1h1v1h-1zm2 0h1v1h-1zm-1 1h1v1h-1zM1534 69h1v1h-1zm-1 1h1v1h-1zm2 0h1v1h-1zm-1 1h1v1h-1zM1507 96h1v1h-1zm-1 1h1v1h-1zm2 0h1v1h-1zm-1 1h1v1h-1zM1534 82h1v1h-1zm-1 1h1v1h-1zm2 0h1v1h-1zm-1 1h1v1h-1zM1535 87h1v1h-1zm-1 1h1v1h-1zm2 0h1v1h-1zm-1 1h1v1h-1zM1510 82h1v1h-1zm-1 1h1v1h-1zm2 0h1v1h-1zm-1 1h1v1h-1zM1535 79h1v1h-1zm-1 1h1v1h-1zm2 0h1v1h-1zm-1 1h1v1h-1zM1522 76h1v1h-1zm-1 1h1v1h-1zm2 0h1v1h-1zm-1 1h1v1h-1zM1528 76h1v1h-1zm-1 1h1v1h-1zm2 0h1v1h-1zm-1 1h1v1h-1zM1515 71h1v1h-1zm-1 1h1v1h-1zm2 0h1v1h-1zm-1 1h1v1h-1zM1544 81h1v1h-1zm-1 1h1v1h-1zm2 0h1v1h-1zm-1 1h1v1h-1zM1554 78h1v1h-1zm-1 1h1v1h-1zm2 0h1v1h-1zm-1 1h1v1h-1zM1544 82h1v1h-1zm-1 1h1v1h-1zm2 0h1v1h-1zm-1 1h1v1h-1zM1554 89h1v1h-1zm-1 1h1v1h-1zm2 0h1v1h-1zm-1 1h1v1h-1zM1548 77h1v1h-1zm-1 1h1v1h-1zm2 0h1v1h-1zm-1 1h1v1h-1zM1555 90h1v1h-1zm-1 1h1v1h-1zm2 0h1v1h-1zm-1 1h1v1h-1zM1551 80h1v1h-1zm-1 1h1v1h-1zm2 0h1v1h-1zm-1 1h1v1h-1zM1544 78h1v1h-1zm-1 1h1v1h-1zm2 0h1v1h-1zm-1 1h1v1h-1zM1558 86h1v1h-1zm-1 1h1v1h-1zm2 0h1v1h-1zm-1 1h1v1h-1zM1559 70h1v1h-1zm-1 1h1v1h-1zm2 0h1v1h-1zm-1 1h1v1h-1zM1557 74h1v1h-1zm-1 1h1v1h-1zm2 0h1v1h-1zm-1 1h1v1h-1zM1555 65h1v1h-1zm-1 1h1v1h-1zm2 0h1v1h-1zm-1 1h1v1h-1zM1599 76h1v1h-1zm-1 1h1v1h-1zm2 0h1v1h-1zm-1 1h1v1h-1zM1615 84h1v1h-1zm-1 1h1v1h-1zm2 0h1v1h-1zm-1 1h1v1h-1zM1616 80h1v1h-1zm-1 1h1v1h-1zm2 0h1v1h-1zm-1 1h1v1h-1zM1624 81h1v1h-1zm-1 1h1v1h-1zm2 0h1v1h-1zm-1 1h1v1h-1zM1623 80h1v1h-1zm-1 1h1v1h-1zm2 0h1v1h-1zm-1 1h1v1h-1zM1588 88h1v1h-1zm-1 1h1v1h-1zm2 0h1v1h-1zm-1 1h1v1h-1zM1595 82h1v1h-1zm-1 1h1v1h-1zm2 0h1v1h-1zm-1 1h1v1h-1zM1584 79h1v1h-1zm-1 1h1v1h-1zm2 0h1v1h-1zm-1 1h1v1h-1zM1641 80h1v1h-1zm-1 1h1v1h-1zm2 0h1v1h-1zm-1 1h1v1h-1zM1644 70h1v1h-1zm-1 1h1v1h-1zm2 0h1v1h-1zm-1 1h1v1h-1zM1649 83h1v1h-1zm-1 1h1v1h-1zm2 0h1v1h-1zm-1 1h1v1h-1zM1655 84h1v1h-1zm-1 1h1v1h-1zm2 0h1v1h-1zm-1 1h1v1h-1zM1633 81h1v1h-1zm-1 1h1v1h-1zm2 0h1v1h-1zm-1 1h1v1h-1zM1643 89h1v1h-1zm-1 1h1v1h-1zm2 0h1v1h-1zm-1 1h1v1h-1zM1635 79h1v1h-1zm-1 1h1v1h-1zm2 0h1v1h-1zm-1 1h1v1h-1zM1644 91h1v1h-1zm-1 1h1v1h-1zm2 0h1v1h-1zm-1 1h1v1h-1zM1662 80h1v1h-1zm-1 1h1v1h-1zm2 0h1v1h-1zm-1 1h1v1h-1zM1673 99h1v1h-1zm-1 1h1v1h-1zm2 0h1v1h-1zm-1 1h1v1h-1zM1692 94h1v1h-1zm-1 1h1v1h-1zm2 0h1v1h-1zm-1 1h1v1h-1zM1685 81h1v1h-1zm-1 1h1v1h-1zm2 0h1v1h-1zm-1 1h1v1h-1zM1691 86h1v1h-1zm-1 1h1v1h-1zm2 0h1v1h-1zm-1 1h1v1h-1zM1672 100h1v1h-1zm-1 1h1v1h-1zm2 0h1v1h-1zm-1 1h1v1h-1zM1665 96h1v1h-1zm-1 1h1v1h-1zm2 0h1v1h-1zm-1 1h1v1h-1zM1682 82h1v1h-1zm-1 1h1v1h-1zm2 0h1v1h-1zm-1 1h1v1h-1zM1771 90h1v1h-1zm-1 1h1v1h-1zm2 0h1v1h-1zm-1 1h1v1h-1zM1772 91h1v1h-1zm-1 1h1v1h-1zm2 0h1v1h-1zm-1 1h1v1h-1zM1760 105h1v1h-1zm-1 1h1v1h-1zm2 0h1v1h-1zm-1 1h1v1h-1zM1766 98h1v1h-1zm-1 1h1v1h-1zm2 0h1v1h-1zm-1 1h1v1h-1zM1770 97h1v1h-1zm-1 1h1v1h-1zm2 0h1v1h-1zm-1 1h1v1h-1zM1760 88h1v1h-1zm-1 1h1v1h-1zm2 0h1v1h-1zm-1 1h1v1h-1zM1743 97h1v1h-1zm-1 1h1v1h-1zm2 0h1v1h-1zm-1 1h1v1h-1zM1774 88h1v1h-1zm-1 1h1v1h-1zm2 0h1v1h-1zm-1 1h1v1h-1zM1777 97h1v1h-1zm-1 1h1v1h-1zm2 0h1v1h-1zm-1 1h1v1h-1zM1794 96h1v1h-1zm-1 1h1v1h-1zm2 0h1v1h-1zm-1 1h1v1h-1zM1777 97h1v1h-1zm-1 1h1v1h-1zm2 0h1v1h-1zm-1 1h1v1h-1zM1776 94h1v1h-1zm-1 1h1v1h-1zm2 0h1v1h-1zm-1 1h1v1h-1zM1767 97h1v1h-1zm-1 1h1v1h-1zm2 0h1v1h-1zm-1 1h1v1h-1zM1780 89h1v1h-1zm-1 1h1v1h-1zm2 0h1v1h-1zm-1 1h1v1h-1zM1793 95h1v1h-1zm-1 1h1v1h-1zm2 0h1v1h-1zm-1 1h1v1h-1zM1811 95h1v1h-1zm-1 1h1v1h-1zm2 0h1v1h-1zm-1 1h1v1h-1zM1790 98h1v1h-1zm-1 1h1v1h-1zm2 0h1v1h-1zm-1 1h1v1h-1zM1805 104h1v1h-1zm-1 1h1v1h-1zm2 0h1v1h-1zm-1 1h1v1h-1zM1801 104h1v1h-1zm-1 1h1v1h-1zm2 0h1v1h-1zm-1 1h1v1h-1zM1796 99h1v1h-1zm-1 1h1v1h-1zm2 0h1v1h-1zm-1 1h1v1h-1zM1801 90h1v1h-1zm-1 1h1v1h-1zm2 0h1v1h-1zm-1 1h1v1h-1zM1798 101h1v1h-1zm-1 1h1v1h-1zm2 0h1v1h-1zm-1 1h1v1h-1zM1868 97h1v1h-1zm-1 1h1v1h-1zm2 0h1v1h-1zm-1 1h1v1h-1zM1868 102h1v1h-1zm-1 1h1v1h-1zm2 0h1v1h-1zm-1 1h1v1h-1zM1867 100h1v1h-1zm-1 1h1v1h-1zm2 0h1v1h-1zm-1 1h1v1h-1zM1864 94h1v1h-1zm-1 1h1v1h-1zm2 0h1v1h-1zm-1 1h1v1h-1zM1862 99h1v1h-1zm-1 1h1v1h-1zm2 0h1v1h-1zm-1 1h1v1h-1zM1858 97h1v1h-1zm-1 1h1v1h-1zm2 0h1v1h-1zm-1 1h1v1h-1zM1863 99h1v1h-1zm-1 1h1v1h-1zm2 0h1v1h-1zm-1 1h1v1h-1zM1867 94h1v1h-1zm-1 1h1v1h-1zm2 0h1v1h-1zm-1 1h1v1h-1zM1002 401h1v1h-1zm-1 1h1v1h-1zm2 0h1v1h-1zm-1 1h1v1h-1zM1002 401h1v1h-1zm-1 1h1v1h-1zm2 0h1v1h-1zm-1 1h1v1h-1zM1002 406h1v1h-1zm-1 1h1v1h-1zm2 0h1v1h-1zm-1 1h1v1h-1zM1002 392h1v1h-1zm-1 1h1v1h-1zm2 0h1v1h-1zm-1 1h1v1h-1zM1005 409h1v1h-1zm-1 1h1v1h-1zm2 0h1v1h-1zm-1 1h1v1h-1zM998 398h1v1h-1zm-1 1h1v1h-1zm2 0h1v1h-1zm-1 1h1v1h-1zM1003 405h1v1h-1zm-1 1h1v1h-1zm2 0h1v1h-1zm-1 1h1v1h-1zM1007 398h1v1h-1zm-1 1h1v1h-1zm2 0h1v1h-1zm-1 1h1v1h-1zM999 403h1v1h-1zm-1 1h1v1h-1zm2 0h1v1h-1zm-1 1h1v1h-1zM1006 402h1v1h-1zm-1 1h1v1h-1zm2 0h1v1h-1zm-1 1h1v1h-1zM1003 394h1v1h-1zm-1 1h1v1h-1zm2 0h1v1h-1zm-1 1h1v1h-1zM1009 392h1v1h-1zm-1 1h1v1h-1zm2 0h1v1h-1zm-1 1h1v1h-1zM999 405h1v1h-1zm-1 1h1v1h-1zm2 0h1v1h-1zm-1 1h1v1h-1zM1004 403h1v1h-1zm-1 1h1v1h-1zm2 0h1v1h-1zm-1 1h1v1h-1zM989 416h1v1h-1zm-1 1h1v1h-1zm2 0h1v1h-1zm-1 1h1v1h-1zM991 409h1v1h-1zm-1 1h1v1h-1zm2 0h1v1h-1zm-1 1h1v1h-1zM990 407h1v1h-1zm-1 1h1v1h-1zm2 0h1v1h-1zm-1 1h1v1h-1zM985 415h1v1h-1zm-1 1h1v1h-1zm2 0h1v1h-1zm-1 1h1v1h-1zM987 405h1v1h-1zm-1 1h1v1h-1zm2 0h1v1h-1zm-1 1h1v1h-1zM988 409h1v1h-1zm-1 1h1v1h-1zm2 0h1v1h-1zm-1 1h1v1h-1zM932 421h1v1h-1zm-1 1h1v1h-1zm2 0h1v1h-1zm-1 1h1v1h-1zM966 419h1v1h-1zm-1 1h1v1h-1zm2 0h1v1h-1zm-1 1h1v1h-1zM968 419h1v1h-1zm-1 1h1v1h-1zm2 0h1v1h-1zm-1 1h1v1h-1zM975 421h1v1h-1zm-1 1h1v1h-1zm2 0h1v1h-1zm-1 1h1v1h-1zM1016 418h1v1h-1zm-1 1h1v1h-1zm2 0h1v1h-1zm-1 1h1v1h-1zM1020 417h1v1h-1zm-1 1h1v1h-1zm2 0h1v1h-1zm-1 1h1v1h-1zM1033 418h1v1h-1zm-1 1h1v1h-1zm2 0h1v1h-1zm-1 1h1v1h-1zM1045 421h1v1h-1zm-1 1h1v1h-1zm2 0h1v1h-1zm-1 1h1v1h-1z" fill="#e6e6e6" shape-rendering="crispEdges"/>
<path d="M989 428h1v1h-1zm-1 1h1v1h-1zm2 0h1v1h-1zm-1 1h1v1h-1zM988 418h1v1h-1zm-1 1h1v1h-1zm2 0h1v1h-1zm-1 1h1v1h-1zM995 409h1v1h-1zm-1 1h1v1h-1zm2 0h1v1h-1zm-1 1h1v1h-1zM1000 402h1v1h-1zm-1 1h1v1h-1zm2 0h1v1h-1zm-1 1h1v1h-1zM1002 397h1v1h-1zm-1 1h1v1h-1zm2 0h1v1h-1zm-1 1h1v1h-1zM1006 387h1v1h-1zm-1 1h1v1h-1zm2 0h1v1h-1zm-1 1h1v1h-1zM1015 378h1v1h-1zm-1 1h1v1h-1zm2 0h1v1h-1zm-1 1h1v1h-1zM1015 368h1v1h-1zm-1 1h1v1h-1zm2 0h1v1h-1zm-1 1h1v1h-1zM1019 361h1v1h-1zm-1 1h1v1h-1zm2 0h1v1h-1zm-1 1h1v1h-1zM1022 353h1v1h-1zm-1 1h1v1h-1zm2 0h1v1h-1zm-1 1h1v1h-1zM1030 347h1v1h-1zm-1 1h1v1h-1zm2 0h1v1h-1zm-1 1h1v1h-1zM1030 338h1v1h-1zm-1 1h1v1h-1zm2 0h1v1h-1zm-1 1h1v1h-1zM1042 329h1v1h-1zm-1 1h1v1h-1zm2 0h1v1h-1zm-1 1h1v1h-1zM1044 331h1v1h-1zm-1 1h1v1h-1zm2 0h1v1h-1zm-1 1h1v1h-1zM1045 321h1v1h-1zm-1 1h1v1h-1zm2 0h1v1h-1zm-1 1h1v1h-1zM1049 312h1v1h-1zm-1 1h1v1h-1zm2 0h1v1h-1zm-1 1h1v1h-1zM1054 307h1v1h-1zm-1 1h1v1h-1zm2 0h1v1h-1zm-1 1h1v1h-1zM1057 298h1v1h-1zm-1 1h1v1h-1zm2 0h1v1h-1zm-1 1h1v1h-1zM1064 291h1v1h-1zm-1 1h1v1h-1zm2 0h1v1h-1zm-1 1h1v1h-1zM1064 280h1v1h-1zm-1 1h1v1h-1zm2 0h1v1h-1zm-1 1h1v1h-1zM1070 275h1v1h-1zm-1 1h1v1h-1zm2 0h1v1h-1zm-1 1h1v1h-1zM1078 271h1v1h-1zm-1 1h1v1h-1zm2 0h1v1h-1zm-1 1h1v1h-1zM1082 264h1v1h-1zm-1 1h1v1h-1zm2 0h1v1h-1zm-1 1h1v1h-1zM1081 259h1v1h-1zm-1 1h1v1h-1zm2 0h1v1h-1zm-1 1h1v1h-1zM1086 254h1v1h-1zm-1 1h1v1h-1zm2 0h1v1h-1zm-1 1h1v1h-1zM1098 241h1v1h-1zm-1 1h1v1h-1zm2 0h1v1h-1zm-1 1h1v1h-1zM1099 237h1v1h-1zm-1 1h1v1h-1zm2 0h1v1h-1zm-1 1h1v1h-1zM1108 228h1v1h-1zm-1 1h1v1h-1zm2 0h1v1h-1zm-1 1h1v1h-1zM1106 223h1v1h-1zm-1 1h1v1h-1zm2 0h1v1h-1zm-1 1h1v1h-1zM1110 216h1v1h-1zm-1 1h1v1h-1zm2 0h1v1h-1zm-1 1h1v1h-1zM1118 213h1v1h-1zm-1 1h1v1h-1zm2 0h1v1h-1zm-1 1h1v1h-1zM1126 198h1v1h-1zm-1 1h1v1h-1zm2 0h1v1h-1zm-1 1h1v1h-1zM1135 197h1v1h-1zm-1 1h1v1h-1zm2 0h1v1h-1zm-1 1h1v1h-1zM1138 183h1v1h-1zm-1 1h1v1h-1zm2 0h1v1h-1zm-1 1h1v1h-1zM1146 179h1v1h-1zm-1 1h1v1h-1zm2 0h1v1h-1zm-1 1h1v1h-1zM1152 177h1v1h-1zm-1 1h1v1h-1zm2 0h1v1h-1zm-1 1h1v1h-1zM1161 164h1v1h-1zm-1 1h1v1h-1zm2 0h1v1h-1zm-1 1h1v1h-1zM1166 162h1v1h-1zm-1 1h1v1h-1zm2 0h1v1h-1zm-1 1h1v1h-1zM1171 157h1v1h-1zm-1 1h1v1h-1zm2 0h1v1h-1zm-1 1h1v1h-1zM1174 153h1v1h-1zm-1 1h1v1h-1zm2 0h1v1h-1zm-1 1h1v1h-1zM1176 146h1v1h-1zm-1 1h1v1h-1zm2 0h1v1h-1zm-1 1h1v1h-1zM1186 139h1v1h-1zm-1 1h1v1h-1zm2 0h1v1h-1zm-1 1h1v1h-1zM1186 139h1v1h-1zm-1 1h1v1h-1zm2 0h1v1h-1zm-1 1h1v1h-1zM1199 134h1v1h-1zm-1 1h1v1h-1zm2 0h1v1h-1zm-1 1h1v1h-1zM1203 128h1v1h-1zm-1 1h1v1h-1zm2 0h1v1h-1zm-1 1h1v1h-1zM1212 131h1v1h-1zm-1 1h1v1h-1zm2 0h1v1h-1zm-1 1h1v1h-1zM1220 126h1v1h-1zm-1 1h1v1h-1zm2 0h1v1h-1zm-1 1h1v1h-1zM1225 118h1v1h-1zm-1 1h1v1h-1zm2 0h1v1h-1zm-1 1h1v1h-1zM1234 116h1v1h-1zm-1 1h1v1h-1zm2 0h1v1h-1zm-1 1h1v1h-1zM1238 110h1v1h-1zm-1 1h1v1h-1zm2 0h1v1h-1zm-1 1h1v1h-1zM1247 98h1v1h-1zm-1 1h1v1h-1zm2 0h1v1h-1zm-1 1h1v1h-1zM1255 97h1v1h-1zm-1 1h1v1h-1zm2 0h1v1h-1zm-1 1h1v1h-1zM1265 98h1v1h-1zm-1 1h1v1h-1zm2 0h1v1h-1zm-1 1h1v1h-1zM1272 93h1v1h-1zm-1 1h1v1h-1zm2 0h1v1h-1zm-1 1h1v1h-1zM1278 91h1v1h-1zm-1 1h1v1h-1zm2 0h1v1h-1zm-1 1h1v1h-1zM1283 88h1v1h-1zm-1 1h1v1h-1zm2 0h1v1h-1zm-1 1h1v1h-1zM1290 85h1v1h-1zm-1 1h1v1h-1zm2 0h1v1h-1zm-1 1h1v1h-1zM1299 79h1v1h-1zm-1 1h1v1h-1zm2 0h1v1h-1zm-1 1h1v1h-1zM987 431h1v1h-1zm-1 1h1v1h-1zm2 0h1v1h-1zm-1 1h1v1h-1zM989 432h1v1h-1zm-1 1h1v1h-1zm2 0h1v1h-1zm-1 1h1v1h-1zM988 431h1v1h-1zm-1 1h1v1h-1zm2 0h1v1h-1zm-1 1h1v1h-1zM990 430h1v1h-1zm-1 1h1v1h-1zm2 0h1v1h-1zm-1 1h1v1h-1zM989 430h1v1h-1zm-1 1h1v1h-1zm2 0h1v1h-1zm-1 1h1v1h-1zM991 429h1v1h-1zm-1 1h1v1h-1zm2 0h1v1h-1zm-1 1h1v1h-1zM990 428h1v1h-1zm-1 1h1v1h-1zm2 0h1v1h-1zm-1 1h1v1h-1zM989 430h1v1h-1zm-1 1h1v1h-1zm2 0h1v1h-1zm-1 1h1v1h-1zM990 428h1v1h-1zm-1 1h1v1h-1zm2 0h1v1h-1zm-1 1h1v1h-1zM989 429h1v1h-1zm-1 1h1v1h-1zm2 0h1v1h-1zm-1 1h1v1h-1zM990 428h1v1h-1zm-1 1h1v1h-1zm2 0h1v1h-1zm-1 1h1v1h-1zM991 428h1v1h-1zm-1 1h1v1h-1zm2 0h1v1h-1zm-1 1h1v1h-1zM991 429h1v1h-1zm-1 1h1v1h-1zm2 0h1v1h-1zm-1 1h1v1h-1zM993 426h1v1h-1zm-1 1h1v1h-1zm2 0h1v1h-1zm-1 1h1v1h-1zM992 425h1v1h-1zm-1 1h1v1h-1zm2 0h1v1h-1zm-1 1h1v1h-1zM993 424h1v1h-1zm-1 1h1v1h-1zm2 0h1v1h-1zm-1 1h1v1h-1zM992 426h1v1h-1zm-1 1h1v1h-1zm2 0h1v1h-1zm-1 1h1v1h-1zM991 425h1v1h-1zm-1 1h1v1h-1zm2 0h1v1h-1zm-1 1h1v1h-1zM993 424h1v1h-1zm-1 1h1v1h-1zm2 0h1v1h-1zm-1 1h1v1h-1zM992 423h1v1h-1zm-1 1h1v1h-1zm2 0h1v1h-1zm-1 1h1v1h-1zM995 424h1v1h-1zm-1 1h1v1h-1zm2 0h1v1h-1zm-1 1h1v1h-1zM995 422h1v1h-1zm-1 1h1v1h-1zm2 0h1v1h-1zm-1 1h1v1h-1zM995 422h1v1h-1zm-1 1h1v1h-1zm2 0h1v1h-1zm-1 1h1v1h-1zM993 422h1v1h-1zm-1 1h1v1h-1zm2 0h1v1h-1zm-1 1h1v1h-1zM995 420h1v1h-1zm-1 1h1v1h-1zm2 0h1v1h-1zm-1 1h1v1h-1zM996 422h1v1h-1zm-1 1h1v1h-1zm2 0h1v1h-1zm-1 1h1v1h-1zM996 422h1v1h-1zm-1 1h1v1h-1zm2 0h1v1h-1zm-1 1h1v1h-1zM996 420h1v1h-1zm-1 1h1v1h-1zm2 0h1v1h-1zm-1 1h1v1h-1zM997 421h1v1h-1zm-1 1h1v1h-1zm2 0h1v1h-1zm-1 1h1v1h-1zM995 421h1v1h-1zm-1 1h1v1h-1zm2 0h1v1h-1zm-1 1h1v1h-1zM997 418h1v1h-1zm-1 1h1v1h-1zm2 0h1v1h-1zm-1 1h1v1h-1zM995 417h1v1h-1zm-1 1h1v1h-1zm2 0h1v1h-1zm-1 1h1v1h-1zM997 417h1v1h-1zm-1 1h1v1h-1zm2 0h1v1h-1zm-1 1h1v1h-1zM996 417h1v1h-1zm-1 1h1v1h-1zm2 0h1v1h-1zm-1 1h1v1h-1zM996 417h1v1h-1zm-1 1h1v1h-1zm2 0h1v1h-1zm-1 1h1v1h-1zM997 416h1v1h-1zm-1 1h1v1h-1zm2 0h1v1h-1zm-1 1h1v1h-1zM997 417h1v1h-1zm-1 1h1v1h-1zm2 0h1v1h-1zm-1 1h1v1h-1zM999 415h1v1h-1zm-1 1h1v1h-1zm2 0h1v1h-1zm-1 1h1v1h-1zM999 417h1v1h-1zm-1 1h1v1h-1zm2 0h1v1h-1zm-1 1h1v1h-1zM999 415h1v1h-1zm-1 1h1v1h-1zm2 0h1v1h-1zm-1 1h1v1h-1zM1000 415h1v1h-1zm-1 1h1v1h-1zm2 0h1v1h-1zm-1 1h1v1h-1zM1000 416h1v1h-1zm-1 1h1v1h-1zm2 0h1v1h-1zm-1 1h1v1h-1zM1000 413h1v1h-1zm-1 1h1v1h-1zm2 0h1v1h-1zm-1 1h1v1h-1zM998 415h1v1h-1zm-1 1h1v1h-1zm2 0h1v1h-1zm-1 1h1v1h-1zM999 414h1v1h-1zm-1 1h1v1h-1zm2 0h1v1h-1zm-1 1h1v1h-1zM999 413h1v1h-1zm-1 1h1v1h-1zm2 0h1v1h-1zm-1 1h1v1h-1zM1000 413h1v1h-1zm-1 1h1v1h-1zm2 0h1v1h-1zm-1 1h1v1h-1zM1002 412h1v1h-1zm-1 1h1v1h-1zm2 0h1v1h-1zm-1 1h1v1h-1zM1001 411h1v1h-1zm-1 1h1v1h-1zm2 0h1v1h-1zm-1 1h1v1h-1zM1000 413h1v1h-1zm-1 1h1v1h-1zm2 0h1v1h-1zm-1 1h1v1h-1zM1000 412h1v1h-1zm-1 1h1v1h-1zm2 0h1v1h-1zm-1 1h1v1h-1zM1002 409h1v1h-1zm-1 1h1v1h-1zm2 0h1v1h-1zm-1 1h1v1h-1zM1003 408h1v1h-1zm-1 1h1v1h-1zm2 0h1v1h-1zm-1 1h1v1h-1zM1002 408h1v1h-1zm-1 1h1v1h-1zm2 0h1v1h-1zm-1 1h1v1h-1zM1004 408h1v1h-1zm-1 1h1v1h-1zm2 0h1v1h-1zm-1 1h1v1h-1zM1004 407h1v1h-1zm-1 1h1v1h-1zm2 0h1v1h-1zm-1 1h1v1h-1zM1004 406h1v1h-1zm-1 1h1v1h-1zm2 0h1v1h-1zm-1 1h1v1h-1zM1002 408h1v1h-1zm-1 1h1v1h-1zm2 0h1v1h-1zm-1 1h1v1h-1zM1005 408h1v1h-1zm-1 1h1v1h-1zm2 0h1v1h-1zm-1 1h1v1h-1zM1005 408h1v1h-1zm-1 1h1v1h-1zm2 0h1v1h-1zm-1 1h1v1h-1zM1004 405h1v1h-1zm-1 1h1v1h-1zm2 0h1v1h-1zm-1 1h1v1h-1zM1004 405h1v1h-1zm-1 1h1v1h-1zm2 0h1v1h-1zm-1 1h1v1h-1zM1005 405h1v1h-1zm-1 1h1v1h-1zm2 0h1v1h-1zm-1 1h1v1h-1zM1005 404h1v1h-1zm-1 1h1v1h-1zm2 0h1v1h-1zm-1 1h1v1h-1zM1006 404h1v1h-1zm-1 1h1v1h-1zm2 0h1v1h-1zm-1 1h1v1h-1zM1005 403h1v1h-1zm-1 1h1v1h-1zm2 0h1v1h-1zm-1 1h1v1h-1zM1006 404h1v1h-1zm-1 1h1v1h-1zm2 0h1v1h-1zm-1 1h1v1h-1zM1008 403h1v1h-1zm-1 1h1v1h-1zm2 0h1v1h-1zm-1 1h1v1h-1zM1005 402h1v1h-1zm-1 1h1v1h-1zm2 0h1v1h-1zm-1 1h1v1h-1zM1006 403h1v1h-1zm-1 1h1v1h-1zm2 0h1v1h-1zm-1 1h1v1h-1zM1008 404h1v1h-1zm-1 1h1v1h-1zm2 0h1v1h-1zm-1 1h1v1h-1zM1008 403h1v1h-1zm-1 1h1v1h-1zm2 0h1v1h-1zm-1 1h1v1h-1zM1008 403h1v1h-1zm-1 1h1v1h-1zm2 0h1v1h-1zm-1 1h1v1h-1zM1006 401h1v1h-1zm-1 1h1v1h-1zm2 0h1v1h-1zm-1 1h1v1h-1zM1008 401h1v1h-1zm-1 1h1v1h-1zm2 0h1v1h-1zm-1 1h1v1h-1zM1008 400h1v1h-1zm-1 1h1v1h-1zm2 0h1v1h-1zm-1 1h1v1h-1zM1010 398h1v1h-1zm-1 1h1v1h-1zm2 0h1v1h-1zm-1 1h1v1h-1zM1009 401h1v1h-1zm-1 1h1v1h-1zm2 0h1v1h-1zm-1 1h1v1h-1zM1007 397h1v1h-1zm-1 1h1v1h-1zm2 0h1v1h-1zm-1 1h1v1h-1zM1010 400h1v1h-1zm-1 1h1v1h-1zm2 0h1v1h-1zm-1 1h1v1h-1zM1007 396h1v1h-1zm-1 1h1v1h-1zm2 0h1v1h-1zm-1 1h1v1h-1zM1011 398h1v1h-1zm-1 1h1v1h-1zm2 0h1v1h-1zm-1 1h1v1h-1zM1010 397h1v1h-1zm-1 1h1v1h-1zm2 0h1v1h-1zm-1 1h1v1h-1zM1011 397h1v1h-1zm-1 1h1v1h-1zm2 0h1v1h-1zm-1 1h1v1h-1zM1008 394h1v1h-1zm-1 1h1v1h-1zm2 0h1v1h-1zm-1 1h1v1h-1zM1012 397h1v1h-1zm-1 1h1v1h-1zm2 0h1v1h-1zm-1 1h1v1h-1zM1012 395h1v1h-1zm-1 1h1v1h-1zm2 0h1v1h-1zm-1 1h1v1h-1zM1010 394h1v1h-1zm-1 1h1v1h-1zm2 0h1v1h-1zm-1 1h1v1h-1zM1010 395h1v1h-1zm-1 1h1v1h-1zm2 0h1v1h-1zm-1 1h1v1h-1zM1011 394h1v1h-1zm-1 1h1v1h-1zm2 0h1v1h-1zm-1 1h1v1h-1zM1012 393h1v1h-1zm-1 1h1v1h-1zm2 0h1v1h-1zm-1 1h1v1h-1zM1013 393h1v1h-1zm-1 1h1v1h-1zm2 0h1v1h-1zm-1 1h1v1h-1zM1011 394h1v1h-1zm-1 1h1v1h-1zm2 0h1v1h-1zm-1 1h1v1h-1zM1011 391h1v1h-1zm-1 1h1v1h-1zm2 0h1v1h-1zm-1 1h1v1h-1zM1012 392h1v1h-1zm-1 1h1v1h-1zm2 0h1v1h-1zm-1 1h1v1h-1zM1014 391h1v1h-1zm-1 1h1v1h-1zm2 0h1v1h-1zm-1 1h1v1h-1zM1012 391h1v1h-1zm-1 1h1v1h-1zm2 0h1v1h-1zm-1 1h1v1h-1zM1013 390h1v1h-1zm-1 1h1v1h-1zm2 0h1v1h-1zm-1 1h1v1h-1zM1013 391h1v1h-1zm-1 1h1v1h-1zm2 0h1v1h-1zm-1 1h1v1h-1zM1013 389h1v1h-1zm-1 1h1v1h-1zm2 0h1v1h-1zm-1 1h1v1h-1zM1014 388h1v1h-1zm-1 1h1v1h-1zm2 0h1v1h-1zm-1 1h1v1h-1zM1015 389h1v1h-1zm-1 1h1v1h-1zm2 0h1v1h-1zm-1 1h1v1h-1zM1016 388h1v1h-1zm-1 1h1v1h-1zm2 0h1v1h-1zm-1 1h1v1h-1zM1014 389h1v1h-1zm-1 1h1v1h-1zm2 0h1v1h-1zm-1 1h1v1h-1zM1014 386h1v1h-1zm-1 1h1v1h-1zm2 0h1v1h-1zm-1 1h1v1h-1zM1015 389h1v1h-1zm-1 1h1v1h-1zm2 0h1v1h-1zm-1 1h1v1h-1zM1015 386h1v1h-1zm-1 1h1v1h-1zm2 0h1v1h-1zm-1 1h1v1h-1zM1018 388h1v1h-1zm-1 1h1v1h-1zm2 0h1v1h-1zm-1 1h1v1h-1zM1016 384h1v1h-1zm-1 1h1v1h-1zm2 0h1v1h-1zm-1 1h1v1h-1zM1018 386h1v1h-1zm-1 1h1v1h-1zm2 0h1v1h-1zm-1 1h1v1h-1zM1016 386h1v1h-1zm-1 1h1v1h-1zm2 0h1v1h-1zm-1 1h1v1h-1zM1017 384h1v1h-1zm-1 1h1v1h-1zm2 0h1v1h-1zm-1 1h1v1h-1zM1018 385h1v1h-1zm-1 1h1v1h-1zm2 0h1v1h-1zm-1 1h1v1h-1zM1018 385h1v1h-1zm-1 1h1v1h-1zm2 0h1v1h-1zm-1 1h1v1h-1zM1308 78h1v1h-1zm-1 1h1v1h-1zm2 0h1v1h-1zm-1 1h1v1h-1zM1589 74h1v1h-1zm-1 1h1v1h-1zm2 0h1v1h-1zm-1 1h1v1h-1zM1830 92h1v1h-1zm-1 1h1v1h-1zm2 0h1v1h-1zm-1 1h1v1h-1zM1383 75h1v1h-1zm-1 1h1v1h-1zm2 0h1v1h-1zm-1 1h1v1h-1zM1857 101h1v1h-1zm-1 1h1v1h-1zm2 0h1v1h-1zm-1 1h1v1h-1zM1840 85h1v1h-1zm-1 1h1v1h-1zm2 0h1v1h-1zm-1 1h1v1h-1zM1382 86h1v1h-1zm-1 1h1v1h-1zm2 0h1v1h-1zm-1 1h1v1h-1zM1714 87h1v1h-1zm-1 1h1v1h-1zm2 0h1v1h-1zm-1 1h1v1h-1zM1379 69h1v1h-1zm-1 1h1v1h-1zm2 0h1v1h-1zm-1 1h1v1h-1zM1693 91h1v1h-1zm-1 1h1v1h-1zm2 0h1v1h-1zm-1 1h1v1h-1zM1851 87h1v1h-1zm-1 1h1v1h-1zm2 0h1v1h-1zm-1 1h1v1h-1zM1563 72h1v1h-1zm-1 1h1v1h-1zm2 0h1v1h-1zm-1 1h1v1h-1zM1458 72h1v1h-1zm-1 1h1v1h-1zm2 0h1v1h-1zm-1 1h1v1h-1zM1845 94h1v1h-1zm-1 1h1v1h-1zm2 0h1v1h-1zm-1 1h1v1h-1zM1502 74h1v1h-1zm-1 1h1v1h-1zm2 0h1v1h-1zm-1 1h1v1h-1zM1329 71h1v1h-1zm-1 1h1v1h-1zm2 0h1v1h-1zm-1 1h1v1h-1zM1371 76h1v1h-1zm-1 1h1v1h-1zm2 0h1v1h-1zm-1 1h1v1h-1zM1606 68h1v1h-1zm-1 1h1v1h-1zm2 0h1v1h-1zm-1 1h1v1h-1zM1742 84h1v1h-1zm-1 1h1v1h-1zm2 0h1v1h-1zm-1 1h1v1h-1zM1606 79h1v1h-1zm-1 1h1v1h-1zm2 0h1v1h-1zm-1 1h1v1h-1zM1429 68h1v1h-1zm-1 1h1v1h-1zm2 0h1v1h-1zm-1 1h1v1h-1zM1344 67h1v1h-1zm-1 1h1v1h-1zm2 0h1v1h-1zm-1 1h1v1h-1zM1836 98h1v1h-1zm-1 1h1v1h-1zm2 0h1v1h-1zm-1 1h1v1h-1zM1592 79h1v1h-1zm-1 1h1v1h-1zm2 0h1v1h-1zm-1 1h1v1h-1zM1630 83h1v1h-1zm-1 1h1v1h-1zm2 0h1v1h-1zm-1 1h1v1h-1zM1471 76h1v1h-1zm-1 1h1v1h-1zm2 0h1v1h-1zm-1 1h1v1h-1zM1567 58h1v1h-1zm-1 1h1v1h-1zm2 0h1v1h-1zm-1 1h1v1h-1zM1650 84h1v1h-1zm-1 1h1v1h-1zm2 0h1v1h-1zm-1 1h1v1h-1zM1411 62h1v1h-1zm-1 1h1v1h-1zm2 0h1v1h-1zm-1 1h1v1h-1zM1848 92h1v1h-1zm-1 1h1v1h-1zm2 0h1v1h-1zm-1 1h1v1h-1zM1742 86h1v1h-1zm-1 1h1v1h-1zm2 0h1v1h-1zm-1 1h1v1h-1zM1532 77h1v1h-1zm-1 1h1v1h-1zm2 0h1v1h-1zm-1 1h1v1h-1zM1400 71h1v1h-1zm-1 1h1v1h-1zm2 0h1v1h-1zm-1 1h1v1h-1zM1727 85h1v1h-1zm-1 1h1v1h-1zm2 0h1v1h-1zm-1 1h1v1h-1zM1427 71h1v1h-1zm-1 1h1v1h-1zm2 0h1v1h-1zm-1 1h1v1h-1zM1764 81h1v1h-1zm-1 1h1v1h-1zm2 0h1v1h-1zm-1 1h1v1h-1zM1570 75h1v1h-1zm-1 1h1v1h-1zm2 0h1v1h-1zm-1 1h1v1h-1zM1406 77h1v1h-1zm-1 1h1v1h-1zm2 0h1v1h-1zm-1 1h1v1h-1zM1324 74h1v1h-1zm-1 1h1v1h-1zm2 0h1v1h-1zm-1 1h1v1h-1zM1451 63h1v1h-1zm-1 1h1v1h-1zm2 0h1v1h-1zm-1 1h1v1h-1zM1574 71h1v1h-1zm-1 1h1v1h-1zm2 0h1v1h-1zm-1 1h1v1h-1zM1662 78h1v1h-1zm-1 1h1v1h-1zm2 0h1v1h-1zm-1 1h1v1h-1zM1813 93h1v1h-1zm-1 1h1v1h-1zm2 0h1v1h-1zm-1 1h1v1h-1zM1637 72h1v1h-1zm-1 1h1v1h-1zm2 0h1v1h-1zm-1 1h1v1h-1zM1567 79h1v1h-1zm-1 1h1v1h-1zm2 0h1v1h-1zm-1 1h1v1h-1zM1493 76h1v1h-1zm-1 1h1v1h-1zm2 0h1v1h-1zm-1 1h1v1h-1zM1843 89h1v1h-1zm-1 1h1v1h-1zm2 0h1v1h-1zm-1 1h1v1h-1zM1795 91h1v1h-1zm-1 1h1v1h-1zm2 0h1v1h-1zm-1 1h1v1h-1zM1595 73h1v1h-1zm-1 1h1v1h-1zm2 0h1v1h-1zm-1 1h1v1h-1zM1871 92h1v1h-1zm-1 1h1v1h-1zm2 0h1v1h-1zm-1 1h1v1h-1zM1720 87h1v1h-1zm-1 1h1v1h-1zm2 0h1v1h-1zm-1 1h1v1h-1zM1436 65h1v1h-1zm-1 1h1v1h-1zm2 0h1v1h-1zm-1 1h1v1h-1zM1850 90h1v1h-1zm-1 1h1v1h-1zm2 0h1v1h-1zm-1 1h1v1h-1zM1465 80h1v1h-1zm-1 1h1v1h-1zm2 0h1v1h-1zm-1 1h1v1h-1zM1501 78h1v1h-1zm-1 1h1v1h-1zm2 0h1v1h-1zm-1 1h1v1h-1zM1624 63h1v1h-1zm-1 1h1v1h-1zm2 0h1v1h-1zm-1 1h1v1h-1zM1598 76h1v1h-1zm-1 1h1v1h-1zm2 0h1v1h-1zm-1 1h1v1h-1zM1520 81h1v1h-1zm-1 1h1v1h-1zm2 0h1v1h-1zm-1 1h1v1h-1zM1456 69h1v1h-1zm-1 1h1v1h-1zm2 0h1v1h-1zm-1 1h1v1h-1zM1633 73h1v1h-1zm-1 1h1v1h-1zm2 0h1v1h-1zm-1 1h1v1h-1zM1352 65h1v1h-1zm-1 1h1v1h-1zm2 0h1v1h-1zm-1 1h1v1h-1zM1589 66h1v1h-1zm-1 1h1v1h-1zm2 0h1v1h-1zm-1 1h1v1h-1zM1863 93h1v1h-1zm-1 1h1v1h-1zm2 0h1v1h-1zm-1 1h1v1h-1zM1462 67h1v1h-1zm-1 1h1v1h-1zm2 0h1v1h-1zm-1 1h1v1h-1zM1764 88h1v1h-1zm-1 1h1v1h-1zm2 0h1v1h-1zm-1 1h1v1h-1zM1436 76h1v1h-1zm-1 1h1v1h-1zm2 0h1v1h-1zm-1 1h1v1h-1zM1448 56h1v1h-1zm-1 1h1v1h-1zm2 0h1v1h-1zm-1 1h1v1h-1zM1824 85h1v1h-1zm-1 1h1v1h-1zm2 0h1v1h-1zm-1 1h1v1h-1zM1622 77h1v1h-1zm-1 1h1v1h-1zm2 0h1v1h-1zm-1 1h1v1h-1zM1849 86h1v1h-1zm-1 1h1v1h-1zm2 0h1v1h-1zm-1 1h1v1h-1zM1469 71h1v1h-1zm-1 1h1v1h-1zm2 0h1v1h-1zm-1 1h1v1h-1zM1788 84h1v1h-1zm-1 1h1v1h-1zm2 0h1v1h-1zm-1 1h1v1h-1zM1414 69h1v1h-1zm-1 1h1v1h-1zm2 0h1v1h-1zm-1 1h1v1h-1zM1425 77h1v1h-1zm-1 1h1v1h-1zm2 0h1v1h-1zm-1 1h1v1h-1zM1868 85h1v1h-1zm-1 1h1v1h-1zm2 0h1v1h-1zm-1 1h1v1h-1zM1832 87h1v1h-1zm-1 1h1v1h-1zm2 0h1v1h-1zm-1 1h1v1h-1zM1713 77h1v1h-1zm-1 1h1v1h-1zm2 0h1v1h-1zm-1 1h1v1h-1zM1770 88h1v1h-1zm-1 1h1v1h-1zm2 0h1v1h-1zm-1 1h1v1h-1zM1773 85h1v1h-1zm-1 1h1v1h-1zm2 0h1v1h-1zm-1 1h1v1h-1zM1476 71h1v1h-1zm-1 1h1v1h-1zm2 0h1v1h-1zm-1 1h1v1h-1zM1313 91h1v1h-1zm-1 1h1v1h-1zm2 0h1v1h-1zm-1 1h1v1h-1zM1597 70h1v1h-1zm-1 1h1v1h-1zm2 0h1v1h-1zm-1 1h1v1h-1zM1654 90h1v1h-1zm-1 1h1v1h-1zm2 0h1v1h-1zm-1 1h1v1h-1zM1828 96h1v1h-1zm-1 1h1v1h-1zm2 0h1v1h-1zm-1 1h1v1h-1zM1337 68h1v1h-1zm-1 1h1v1h-1zm2 0h1v1h-1zm-1 1h1v1h-1zM1687 97h1v1h-1zm-1 1h1v1h-1zm2 0h1v1h-1zm-1 1h1v1h-1zM1805 97h1v1h-1zm-1 1h1v1h-1zm2 0h1v1h-1zm-1 1h1v1h-1zM1480 75h1v1h-1zm-1 1h1v1h-1zm2 0h1v1h-1zm-1 1h1v1h-1zM1740 92h1v1h-1zm-1 1h1v1h-1zm2 0h1v1h-1zm-1 1h1v1h-1zM1871 91h1v1h-1zm-1 1h1v1h-1zm2 0h1v1h-1zm-1 1h1v1h-1zM1721 83h1v1h-1zm-1 1h1v1h-1zm2 0h1v1h-1zm-1 1h1v1h-1zM1334 82h1v1h-1zm-1 1h1v1h-1zm2 0h1v1h-1zm-1 1h1v1h-1zM1756 81h1v1h-1zm-1 1h1v1h-1zm2 0h1v1h-1zm-1 1h1v1h-1zM1807 80h1v1h-1zm-1 1h1v1h-1zm2 0h1v1h-1zm-1 1h1v1h-1zM1671 75h1v1h-1zm-1 1h1v1h-1zm2 0h1v1h-1zm-1 1h1v1h-1zM1585 71h1v1h-1zm-1 1h1v1h-1zm2 0h1v1h-1zm-1 1h1v1h-1zM1313 78h1v1h-1zm-1 1h1v1h-1zm2 0h1v1h-1zm-1 1h1v1h-1zM1393 72h1v1h-1zm-1 1h1v1h-1zm2 0h1v1h-1zm-1 1h1v1h-1zM1679 77h1v1h-1zm-1 1h1v1h-1zm2 0h1v1h-1zm-1 1h1v1h-1zM1750 85h1v1h-1zm-1 1h1v1h-1zm2 0h1v1h-1zm-1 1h1v1h-1zM1483 64h1v1h-1zm-1 1h1v1h-1zm2 0h1v1h-1zm-1 1h1v1h-1zM1458 74h1v1h-1zm-1 1h1v1h-1zm2 0h1v1h-1zm-1 1h1v1h-1zM1698 92h1v1h-1zm-1 1h1v1h-1zm2 0h1v1h-1zm-1 1h1v1h-1zM1846 86h1v1h-1zm-1 1h1v1h-1zm2 0h1v1h-1zm-1 1h1v1h-1zM1829 99h1v1h-1zm-1 1h1v1h-1zm2 0h1v1h-1zm-1 1h1v1h-1zM1469 81h1v1h-1zm-1 1h1v1h-1zm2 0h1v1h-1zm-1 1h1v1h-1zM1858 90h1v1h-1zm-1 1h1v1h-1zm2 0h1v1h-1zm-1 1h1v1h-1zM1749 84h1v1h-1zm-1 1h1v1h-1zm2 0h1v1h-1zm-1 1h1v1h-1zM1603 81h1v1h-1zm-1 1h1v1h-1zm2 0h1v1h-1zm-1 1h1v1h-1zM1583 88h1v1h-1zm-1 1h1v1h-1zm2 0h1v1h-1zm-1 1h1v1h-1zM1611 79h1v1h-1zm-1 1h1v1h-1zm2 0h1v1h-1zm-1 1h1v1h-1zM1574 75h1v1h-1zm-1 1h1v1h-1zm2 0h1v1h-1zm-1 1h1v1h-1zM1416 64h1v1h-1zm-1 1h1v1h-1zm2 0h1v1h-1zm-1 1h1v1h-1zM1637 79h1v1h-1zm-1 1h1v1h-1zm2 0h1v1h-1zm-1 1h1v1h-1zM1341 79h1v1h-1zm-1 1h1v1h-1zm2 0h1v1h-1zm-1 1h1v1h-1zM1330 67h1v1h-1zm-1 1h1v1h-1zm2 0h1v1h-1zm-1 1h1v1h-1zM1850 96h1v1h-1zm-1 1h1v1h-1zm2 0h1v1h-1zm-1 1h1v1h-1zM1671 76h1v1h-1zm-1 1h1v1h-1zm2 0h1v1h-1zm-1 1h1v1h-1zM1437 73h1v1h-1zm-1 1h1v1h-1zm2 0h1v1h-1zm-1 1h1v1h-1zM1575 78h1v1h-1zm-1 1h1v1h-1zm2 0h1v1h-1zm-1 1h1v1h-1zM1551 73h1v1h-1zm-1 1h1v1h-1zm2 0h1v1h-1zm-1 1h1v1h-1zM1698 84h1v1h-1zm-1 1h1v1h-1zm2 0h1v1h-1zm-1 1h1v1h-1zM1672 73h1v1h-1zm-1 1h1v1h-1zm2 0h1v1h-1zm-1 1h1v1h-1zM1844 94h1v1h-1zm-1 1h1v1h-1zm2 0h1v1h-1zm-1 1h1v1h-1zM1614 74h1v1h-1zm-1 1h1v1h-1zm2 0h1v1h-1zm-1 1h1v1h-1zM1878 90h1v1h-1zm-1 1h1v1h-1zm2 0h1v1h-1zm-1 1h1v1h-1zM1744 86h1v1h-1zm-1 1h1v1h-1zm2 0h1v1h-1zm-1 1h1v1h-1zM1333 79h1v1h-1zm-1 1h1v1h-1zm2 0h1v1h-1zm-1 1h1v1h-1zM1458 78h1v1h-1zm-1 1h1v1h-1zm2 0h1v1h-1zm-1 1h1v1h-1zM1717 84h1v1h-1zm-1 1h1v1h-1zm2 0h1v1h-1zm-1 1h1v1h-1zM1745 82h1v1h-1zm-1 1h1v1h-1zm2 0h1v1h-1zm-1 1h1v1h-1zM1676 80h1v1h-1zm-1 1h1v1h-1zm2 0h1v1h-1zm-1 1h1v1h-1zM1551 67h1v1h-1zm-1 1h1v1h-1zm2 0h1v1h-1zm-1 1h1v1h-1zM1362 52h1v1h-1zm-1 1h1v1h-1zm2 0h1v1h-1zm-1 1h1v1h-1zM1815 92h1v1h-1zm-1 1h1v1h-1zm2 0h1v1h-1zm-1 1h1v1h-1zM1333 78h1v1h-1zm-1 1h1v1h-1zm2 0h1v1h-1zm-1 1h1v1h-1zM1703 85h1v1h-1zm-1 1h1v1h-1zm2 0h1v1h-1zm-1 1h1v1h-1zM1554 79h1v1h-1zm-1 1h1v1h-1zm2 0h1v1h-1zm-1 1h1v1h-1zM1632 83h1v1h-1zm-1 1h1v1h-1zm2 0h1v1h-1zm-1 1h1v1h-1zM1732 80h1v1h-1zm-1 1h1v1h-1zm2 0h1v1h-1zm-1 1h1v1h-1zM1328 68h1v1h-1zm-1 1h1v1h-1zm2 0h1v1h-1zm-1 1h1v1h-1zM1307 86h1v1h-1zm-1 1h1v1h-1zm2 0h1v1h-1zm-1 1h1v1h-1zM1325 75h1v1h-1zm-1 1h1v1h-1zm2 0h1v1h-1zm-1 1h1v1h-1zM1322 72h1v1h-1zm-1 1h1v1h-1zm2 0h1v1h-1zm-1 1h1v1h-1zM1320 80h1v1h-1zm-1 1h1v1h-1zm2 0h1v1h-1zm-1 1h1v1h-1zM1324 69h1v1h-1zm-1 1h1v1h-1zm2 0h1v1h-1zm-1 1h1v1h-1zM1321 88h1v1h-1zm-1 1h1v1h-1zm2 0h1v1h-1zm-1 1h1v1h-1zM1314 63h1v1h-1zm-1 1h1v1h-1zm2 0h1v1h-1zm-1 1h1v1h-1zM1391 61h1v1h-1zm-1 1h1v1h-1zm2 0h1v1h-1zm-1 1h1v1h-1zM1414 75h1v1h-1zm-1 1h1v1h-1zm2 0h1v1h-1zm-1 1h1v1h-1zM1395 73h1v1h-1zm-1 1h1v1h-1zm2 0h1v1h-1zm-1 1h1v1h-1zM1408 62h1v1h-1zm-1 1h1v1h-1zm2 0h1v1h-1zm-1 1h1v1h-1zM1389 57h1v1h-1zm-1 1h1v1h-1zm2 0h1v1h-1zm-1 1h1v1h-1zM1401 69h1v1h-1zm-1 1h1v1h-1zm2 0h1v1h-1zm-1 1h1v1h-1zM1406 68h1v1h-1zm-1 1h1v1h-1zm2 0h1v1h-1zm-1 1h1v1h-1zM1381 65h1v1h-1zm-1 1h1v1h-1zm2 0h1v1h-1zm-1 1h1v1h-1zM1397 63h1v1h-1zm-1 1h1v1h-1zm2 0h1v1h-1zm-1 1h1v1h-1zM1392 64h1v1h-1zm-1 1h1v1h-1zm2 0h1v1h-1zm-1 1h1v1h-1zM1383 66h1v1h-1zm-1 1h1v1h-1zm2 0h1v1h-1zm-1 1h1v1h-1zM1405 61h1v1h-1zm-1 1h1v1h-1zm2 0h1v1h-1zm-1 1h1v1h-1zM1393 76h1v1h-1zm-1 1h1v1h-1zm2 0h1v1h-1zm-1 1h1v1h-1zM1383 58h1v1h-1zm-1 1h1v1h-1zm2 0h1v1h-1zm-1 1h1v1h-1zM1404 84h1v1h-1zm-1 1h1v1h-1zm2 0h1v1h-1zm-1 1h1v1h-1zM1388 61h1v1h-1zm-1 1h1v1h-1zm2 0h1v1h-1zm-1 1h1v1h-1zM1398 70h1v1h-1zm-1 1h1v1h-1zm2 0h1v1h-1zm-1 1h1v1h-1zM1382 67h1v1h-1zm-1 1h1v1h-1zm2 0h1v1h-1zm-1 1h1v1h-1zM1433 63h1v1h-1zm-1 1h1v1h-1zm2 0h1v1h-1zm-1 1h1v1h-1zM1440 58h1v1h-1zm-1 1h1v1h-1zm2 0h1v1h-1zm-1 1h1v1h-1zM1450 71h1v1h-1zm-1 1h1v1h-1zm2 0h1v1h-1zm-1 1h1v1h-1zM1457 48h1v1h-1zm-1 1h1v1h-1zm2 0h1v1h-1zm-1 1h1v1h-1zM1443 62h1v1h-1zm-1 1h1v1h-1zm2 0h1v1h-1zm-1 1h1v1h-1zM1455 78h1v1h-1zm-1 1h1v1h-1zm2 0h1v1h-1zm-1 1h1v1h-1zM1448 70h1v1h-1zm-1 1h1v1h-1zm2 0h1v1h-1zm-1 1h1v1h-1zM1442 65h1v1h-1zm-1 1h1v1h-1zm2 0h1v1h-1zm-1 1h1v1h-1zM1444 49h1v1h-1zm-1 1h1v1h-1zm2 0h1v1h-1zm-1 1h1v1h-1zM1458 75h1v1h-1zm-1 1h1v1h-1zm2 0h1v1h-1zm-1 1h1v1h-1zM1542 82h1v1h-1zm-1 1h1v1h-1zm2 0h1v1h-1zm-1 1h1v1h-1zM1526 79h1v1h-1zm-1 1h1v1h-1zm2 0h1v1h-1zm-1 1h1v1h-1zM1504 65h1v1h-1zm-1 1h1v1h-1zm2 0h1v1h-1zm-1 1h1v1h-1zM1529 71h1v1h-1zm-1 1h1v1h-1zm2 0h1v1h-1zm-1 1h1v1h-1zM1505 72h1v1h-1zm-1 1h1v1h-1zm2 0h1v1h-1zm-1 1h1v1h-1zM1508 72h1v1h-1zm-1 1h1v1h-1zm2 0h1v1h-1zm-1 1h1v1h-1zM1537 66h1v1h-1zm-1 1h1v1h-1zm2 0h1v1h-1zm-1 1h1v1h-1zM1516 76h1v1h-1zm-1 1h1v1h-1zm2 0h1v1h-1zm-1 1h1v1h-1zM1521 74h1v1h-1zm-1 1h1v1h-1zm2 0h1v1h-1zm-1 1h1v1h-1zM1512 70h1v1h-1zm-1 1h1v1h-1zm2 0h1v1h-1zm-1 1h1v1h-1zM1497 70h1v1h-1zm-1 1h1v1h-1zm2 0h1v1h-1zm-1 1h1v1h-1zM1534 66h1v1h-1zm-1 1h1v1h-1zm2 0h1v1h-1zm-1 1h1v1h-1zM1519 78h1v1h-1zm-1 1h1v1h-1zm2 0h1v1h-1zm-1 1h1v1h-1zM1533 81h1v1h-1zm-1 1h1v1h-1zm2 0h1v1h-1zm-1 1h1v1h-1zM1512 70h1v1h-1zm-1 1h1v1h-1zm2 0h1v1h-1zm-1 1h1v1h-1zM1539 71h1v1h-1zm-1 1h1v1h-1zm2 0h1v1h-1zm-1 1h1v1h-1zM1524 68h1v1h-1zm-1 1h1v1h-1zm2 0h1v1h-1zm-1 1h1v1h-1zM1514 53h1v1h-1zm-1 1h1v1h-1zm2 0h1v1h-1zm-1 1h1v1h-1zM1515 58h1v1h-1zm-1 1h1v1h-1zm2 0h1v1h-1zm-1 1h1v1h-1zM1511 66h1v1h-1zm-1 1h1v1h-1zm2 0h1v1h-1zm-1 1h1v1h-1zM1560 79h1v1h-1zm-1 1h1v1h-1zm2 0h1v1h-1zm-1 1h1v1h-1zM1554 71h1v1h-1zm-1 1h1v1h-1zm2 0h1v1h-1zm-1 1h1v1h-1zM1541 77h1v1h-1zm-1 1h1v1h-1zm2 0h1v1h-1zm-1 1h1v1h-1zM1545 73h1v1h-1zm-1 1h1v1h-1zm2 0h1v1h-1zm-1 1h1v1h-1zM1558 73h1v1h-1zm-1 1h1v1h-1zm2 0h1v1h-1zm-1 1h1v1h-1zM1551 68h1v1h-1zm-1 1h1v1h-1zm2 0h1v1h-1zm-1 1h1v1h-1zM1558 78h1v1h-1zm-1 1h1v1h-1zm2 0h1v1h-1zm-1 1h1v1h-1zM1556 85h1v1h-1zm-1 1h1v1h-1zm2 0h1v1h-1zm-1 1h1v1h-1zM1539 74h1v1h-1zm-1 1h1v1h-1zm2 0h1v1h-1zm-1 1h1v1h-1zM1555 76h1v1h-1zm-1 1h1v1h-1zm2 0h1v1h-1zm-1 1h1v1h-1zM1623 80h1v1h-1zm-1 1h1v1h-1zm2 0h1v1h-1zm-1 1h1v1h-1zM1601 75h1v1h-1zm-1 1h1v1h-1zm2 0h1v1h-1zm-1 1h1v1h-1zM1634 78h1v1h-1zm-1 1h1v1h-1zm2 0h1v1h-1zm-1 1h1v1h-1zM1617 82h1v1h-1zm-1 1h1v1h-1zm2 0h1v1h-1zm-1 1h1v1h-1zM1598 78h1v1h-1zm-1 1h1v1h-1zm2 0h1v1h-1zm-1 1h1v1h-1zM1638 77h1v1h-1zm-1 1h1v1h-1zm2 0h1v1h-1zm-1 1h1v1h-1zM1610 80h1v1h-1zm-1 1h1v1h-1zm2 0h1v1h-1zm-1 1h1v1h-1zM1614 71h1v1h-1zm-1 1h1v1h-1zm2 0h1v1h-1zm-1 1h1v1h-1zM1692 72h1v1h-1zm-1 1h1v1h-1zm2 0h1v1h-1zm-1 1h1v1h-1zM1698 75h1v1h-1zm-1 1h1v1h-1zm2 0h1v1h-1zm-1 1h1v1h-1zM1683 87h1v1h-1zm-1 1h1v1h-1zm2 0h1v1h-1zm-1 1h1v1h-1zM1689 84h1v1h-1zm-1 1h1v1h-1zm2 0h1v1h-1zm-1 1h1v1h-1zM1706 91h1v1h-1zm-1 1h1v1h-1zm2 0h1v1h-1zm-1 1h1v1h-1zM1715 82h1v1h-1zm-1 1h1v1h-1zm2 0h1v1h-1zm-1 1h1v1h-1zM1701 76h1v1h-1zm-1 1h1v1h-1zm2 0h1v1h-1zm-1 1h1v1h-1zM1699 92h1v1h-1zm-1 1h1v1h-1zm2 0h1v1h-1zm-1 1h1v1h-1zM1764 89h1v1h-1zm-1 1h1v1h-1zm2 0h1v1h-1zm-1 1h1v1h-1zM1777 87h1v1h-1zm-1 1h1v1h-1zm2 0h1v1h-1zm-1 1h1v1h-1zM1765 94h1v1h-1zm-1 1h1v1h-1zm2 0h1v1h-1zm-1 1h1v1h-1zM1759 88h1v1h-1zm-1 1h1v1h-1zm2 0h1v1h-1zm-1 1h1v1h-1zM1778 89h1v1h-1zm-1 1h1v1h-1zm2 0h1v1h-1zm-1 1h1v1h-1zM1783 95h1v1h-1zm-1 1h1v1h-1zm2 0h1v1h-1zm-1 1h1v1h-1zM1774 96h1v1h-1zm-1 1h1v1h-1zm2 0h1v1h-1zm-1 1h1v1h-1zM1776 82h1v1h-1zm-1 1h1v1h-1zm2 0h1v1h-1zm-1 1h1v1h-1zM1767 89h1v1h-1zm-1 1h1v1h-1zm2 0h1v1h-1zm-1 1h1v1h-1zM1771 80h1v1h-1zm-1 1h1v1h-1zm2 0h1v1h-1zm-1 1h1v1h-1zM1788 81h1v1h-1zm-1 1h1v1h-1zm2 0h1v1h-1zm-1 1h1v1h-1zM1761 89h1v1h-1zm-1 1h1v1h-1zm2 0h1v1h-1zm-1 1h1v1h-1zM1861 99h1v1h-1zm-1 1h1v1h-1zm2 0h1v1h-1zm-1 1h1v1h-1zM1861 94h1v1h-1zm-1 1h1v1h-1zm2 0h1v1h-1zm-1 1h1v1h-1zM1864 89h1v1h-1zm-1 1h1v1h-1zm2 0h1v1h-1zm-1 1h1v1h-1zM1852 89h1v1h-1zm-1 1h1v1h-1zm2 0h1v1h-1zm-1 1h1v1h-1zM1866 91h1v1h-1zm-1 1h1v1h-1zm2 0h1v1h-1zm-1 1h1v1h-1zM1867 90h1v1h-1zm-1 1h1v1h-1zm2 0h1v1h-1zm-1 1h1v1h-1zM1864 92h1v1h-1zm-1 1h1v1h-1zm2 0h1v1h-1zm-1 1h1v1h-1zM1865 92h1v1h-1zm-1 1h1v1h-1zm2 0h1v1h-1zm-1 1h1v1h-1zM1861 90h1v1h-1zm-1 1h1v1h-1zm2 0h1v1h-1zm-1 1h1v1h-1zM1867 92h1v1h-1zm-1 1h1v1h-1zm2 0h1v1h-1zm-1 1h1v1h-1zM1863 95h1v1h-1zm-1 1h1v1h-1zm2 0h1v1h-1zm-1 1h1v1h-1zM1854 88h1v1h-1zm-1 1h1v1h-1zm2 0h1v1h-1zm-1 1h1v1h-1zM1860 98h1v1h-1zm-1 1h1v1h-1zm2 0h1v1h-1zm-1 1h1v1h-1zM1853 87h1v1h-1zm-1 1h1v1h-1zm2 0h1v1h-1zm-1 1h1v1h-1zM1859 95h1v1h-1zm-1 1h1v1h-1zm2 0h1v1h-1zm-1 1h1v1h-1zM1859 94h1v1h-1zm-1 1h1v1h-1zm2 0h1v1h-1zm-1 1h1v1h-1zM1864 94h1v1h-1zm-1 1h1v1h-1zm2 0h1v1h-1zm-1 1h1v1h-1zM1862 94h1v1h-1zm-1 1h1v1h-1zm2 0h1v1h-1zm-1 1h1v1h-1zM1861 97h1v1h-1zm-1 1h1v1h-1zm2 0h1v1h-1zm-1 1h1v1h-1zM1856 96h1v1h-1zm-1 1h1v1h-1zm2 0h1v1h-1zm-1 1h1v1h-1zM1863 96h1v1h-1zm-1 1h1v1h-1zm2 0h1v1h-1zm-1 1h1v1h-1zM1863 97h1v1h-1zm-1 1h1v1h-1zm2 0h1v1h-1zm-1 1h1v1h-1zM1858 96h1v1h-1zm-1 1h1v1h-1zm2 0h1v1h-1zm-1 1h1v1h-1zM1864 99h1v1h-1zm-1 1h1v1h-1zm2 0h1v1h-1zm-1 1h1v1h-1zM1858 95h1v1h-1zm-1 1h1v1h-1zm2 0h1v1h-1zm-1 1h1v1h-1zM1858 96h1v1h-1zm-1 1h1v1h-1zm2 0h1v1h-1zm-1 1h1v1h-1z" fill="#3cff3c" shape-rendering="crispEdges"/>
<path d="M984 419h6v-6h3v6h6v3h-6v6h-3v-6h-6z" fill="#3cff3c"/>
<rect x="41" y="22" width="258" height="12" fill="#505050" fill-opacity="0.6"/>
<rect x="43" y="26" width="4" height="4" fill="#ffffff"/>
<text x="50.5" y="31.5" fill="#3cff3c" font-size="10.5" text-anchor="start">Self Align Torque FR [N.m]</text>
<rect x="191" y="23" width="11" height="11" fill="#ff0000"/>
<text x="196.5" y="32" fill="#ffffff" font-size="10.5" text-anchor="middle" font-weight="bold" textLength="7" lengthAdjust="spacingAndGlyphs">M</text>
<text x="206" y="31.5" fill="#3cff3c" font-size="10.5" text-anchor="start">26.17</text>
<rect x="251" y="23" width="11" height="11" fill="#dcdcdc"/>
<text x="256.5" y="32.2" fill="#000000" font-size="10.5" text-anchor="middle" textLength="6.5" lengthAdjust="spacingAndGlyphs">O</text>
<text x="266" y="31.5" fill="#3cff3c" font-size="10.5" text-anchor="start">-0.20</text>
<rect x="914" y="22" width="227" height="12" fill="#505050" fill-opacity="0.6"/>
<rect x="916" y="26" width="4" height="4" fill="#ffffff"/>
<text x="923.5" y="31.5" fill="#3cff3c" font-size="10.5" text-anchor="start">CG Accel Lateral [G]</text>
<rect x="1033" y="23" width="11" height="11" fill="#ff0000"/>
<text x="1038.5" y="32" fill="#ffffff" font-size="10.5" text-anchor="middle" font-weight="bold" textLength="7" lengthAdjust="spacingAndGlyphs">M</text>
<text x="1048" y="31.5" fill="#3cff3c" font-size="10.5" text-anchor="start">-0.01</text>
<rect x="1093" y="23" width="11" height="11" fill="#dcdcdc"/>
<text x="1098.5" y="32.2" fill="#000000" font-size="10.5" text-anchor="middle" textLength="6.5" lengthAdjust="spacingAndGlyphs">O</text>
<text x="1108" y="31.5" fill="#3cff3c" font-size="10.5" text-anchor="start">0.00</text>
<rect x="735" y="37" width="85" height="26" fill="#a0a0a0"/>
<rect x="760" y="38" width="11" height="11" fill="#ff0000"/>
<text x="765.5" y="47" fill="#ffffff" font-size="10.5" text-anchor="middle" font-weight="bold" textLength="7" lengthAdjust="spacingAndGlyphs">M</text>
<text x="775" y="47.5" fill="#000" font-size="10.5" text-anchor="start">2381</text>
<rect x="760" y="51" width="11" height="11" fill="#dcdcdc"/>
<text x="765.5" y="60.2" fill="#000000" font-size="10.5" text-anchor="middle" textLength="6.5" lengthAdjust="spacingAndGlyphs">O</text>
<text x="775" y="60.5" fill="#000" font-size="10.5" text-anchor="start">3017</text>
<rect x="1800" y="37" width="83" height="26" fill="#a0a0a0"/>
<rect x="1823" y="38" width="11" height="11" fill="#ff0000"/>
<text x="1828.5" y="47" fill="#ffffff" font-size="10.5" text-anchor="middle" font-weight="bold" textLength="7" lengthAdjust="spacingAndGlyphs">M</text>
<text x="1838" y="47.5" fill="#000" font-size="10.5" text-anchor="start">2384</text>
<rect x="1823" y="51" width="11" height="11" fill="#dcdcdc"/>
<text x="1828.5" y="60.2" fill="#000000" font-size="10.5" text-anchor="middle" textLength="6.5" lengthAdjust="spacingAndGlyphs">O</text>
<text x="1838" y="60.5" fill="#000" font-size="10.5" text-anchor="start">3016</text>
<text x="315" y="465.5" fill="#000" font-size="10.5" text-anchor="start">Tire Slip Angle FR [°]</text>
<rect x="426" y="457" width="11" height="11" fill="#ff0000"/>
<text x="431.5" y="466" fill="#ffffff" font-size="10.5" text-anchor="middle" font-weight="bold" textLength="7" lengthAdjust="spacingAndGlyphs">M</text>
<text x="441" y="465.5" fill="#000" font-size="10.5" text-anchor="start">0.03</text>
<rect x="486" y="457" width="11" height="11" fill="#dcdcdc"/>
<text x="491.5" y="466.2" fill="#000000" font-size="10.5" text-anchor="middle" textLength="6.5" lengthAdjust="spacingAndGlyphs">O</text>
<text x="501" y="465.5" fill="#000" font-size="10.5" text-anchor="start">-78.34</text>
<text x="1283" y="465.5" fill="#000" font-size="10.5" text-anchor="start">Tire Slip Angle FR [°]</text>
<rect x="1394" y="457" width="11" height="11" fill="#ff0000"/>
<text x="1399.5" y="466" fill="#ffffff" font-size="10.5" text-anchor="middle" font-weight="bold" textLength="7" lengthAdjust="spacingAndGlyphs">M</text>
<text x="1409" y="465.5" fill="#000" font-size="10.5" text-anchor="start">0.03</text>
<rect x="1454" y="457" width="11" height="11" fill="#dcdcdc"/>
<text x="1459.5" y="466.2" fill="#000000" font-size="10.5" text-anchor="middle" textLength="6.5" lengthAdjust="spacingAndGlyphs">O</text>
<text x="1469" y="465.5" fill="#000" font-size="10.5" text-anchor="start">-78.34</text>
<rect x="833" y="0" width="1" height="475" fill="#a0a0a0"/>
<rect x="872" y="0" width="1" height="475" fill="#ffffff"/>
<rect x="0" y="475" width="834" height="1" fill="#a0a0a0"/>
<rect x="873" y="475" width="1021" height="1" fill="#a0a0a0"/>
<rect x="0" y="476" width="1894" height="3" fill="#99b4d1"/>
<rect x="0" y="476" width="2" height="389" fill="#99b4d1"/>
<rect x="0" y="863" width="1894" height="2" fill="#99b4d1"/>
<rect x="50" y="479" width="1829" height="16" fill="#000"/>
<rect x="51" y="480" width="1827" height="14" fill="#505050"/>
<rect x="50" y="495" width="1829" height="1" fill="#fff"/>
<rect x="50" y="496" width="1829" height="16" fill="#000"/>
<rect x="51" y="497" width="1827" height="14" fill="#505050"/>
<rect x="50" y="512" width="1829" height="1" fill="#fff"/>
<text x="963" y="490.5" fill="#e8e8e8" font-size="10.5" text-anchor="middle">No Lap</text>
<rect x="49" y="480" width="5" height="14" fill="#ff0000"/>
<rect x="51" y="480" width="1" height="14" fill="#ffff00"/>
<rect x="1875" y="480" width="5" height="14" fill="#e00000"/>
<rect x="51" y="497" width="1" height="14" fill="#ffff00"/>
<rect x="50" y="513" width="1829" height="335" fill="#000"/>
<rect x="52" y="514" width="1826" height="165" fill="#505050"/>
<rect x="52" y="679" width="1826" height="1" fill="#c8c8c8"/>
<rect x="52" y="680" width="1826" height="1" fill="#6a6a6a"/>
<rect x="52" y="681" width="1826" height="1" fill="#c8c8c8"/>
<rect x="52" y="682" width="1826" height="165" fill="#505050"/>
<rect x="51" y="514" width="1" height="333" fill="#ffff00"/>
<path d="M107.5 514V679" stroke="#797979" stroke-dasharray="1 1"/>
<path d="M107.5 682V847" stroke="#797979" stroke-dasharray="1 1"/>
<path d="M164.5 514V679" stroke="#797979" stroke-dasharray="1 1"/>
<path d="M164.5 682V847" stroke="#797979" stroke-dasharray="1 1"/>
<path d="M221.5 514V679" stroke="#797979" stroke-dasharray="1 1"/>
<path d="M221.5 682V847" stroke="#797979" stroke-dasharray="1 1"/>
<path d="M278.5 514V679" stroke="#797979" stroke-dasharray="1 1"/>
<path d="M278.5 682V847" stroke="#797979" stroke-dasharray="1 1"/>
<path d="M335.5 514V679" stroke="#797979" stroke-dasharray="1 1"/>
<path d="M335.5 682V847" stroke="#797979" stroke-dasharray="1 1"/>
<path d="M391.5 514V679" stroke="#797979" stroke-dasharray="1 1"/>
<path d="M391.5 682V847" stroke="#797979" stroke-dasharray="1 1"/>
<path d="M448.5 514V679" stroke="#797979" stroke-dasharray="1 1"/>
<path d="M448.5 682V847" stroke="#797979" stroke-dasharray="1 1"/>
<path d="M505.5 514V679" stroke="#797979" stroke-dasharray="1 1"/>
<path d="M505.5 682V847" stroke="#797979" stroke-dasharray="1 1"/>
<path d="M562.5 514V679" stroke="#797979" stroke-dasharray="1 1"/>
<path d="M562.5 682V847" stroke="#797979" stroke-dasharray="1 1"/>
<path d="M619.5 514V679" stroke="#797979" stroke-dasharray="1 1"/>
<path d="M619.5 682V847" stroke="#797979" stroke-dasharray="1 1"/>
<path d="M676.5 514V679" stroke="#797979" stroke-dasharray="1 1"/>
<path d="M676.5 682V847" stroke="#797979" stroke-dasharray="1 1"/>
<path d="M733.5 514V679" stroke="#797979" stroke-dasharray="1 1"/>
<path d="M733.5 682V847" stroke="#797979" stroke-dasharray="1 1"/>
<path d="M790.5 514V679" stroke="#797979" stroke-dasharray="1 1"/>
<path d="M790.5 682V847" stroke="#797979" stroke-dasharray="1 1"/>
<path d="M847.5 514V679" stroke="#797979" stroke-dasharray="1 1"/>
<path d="M847.5 682V847" stroke="#797979" stroke-dasharray="1 1"/>
<path d="M904.5 514V679" stroke="#797979" stroke-dasharray="1 1"/>
<path d="M904.5 682V847" stroke="#797979" stroke-dasharray="1 1"/>
<path d="M960.5 514V679" stroke="#797979" stroke-dasharray="1 1"/>
<path d="M960.5 682V847" stroke="#797979" stroke-dasharray="1 1"/>
<path d="M1017.5 514V679" stroke="#797979" stroke-dasharray="1 1"/>
<path d="M1017.5 682V847" stroke="#797979" stroke-dasharray="1 1"/>
<path d="M1074.5 514V679" stroke="#797979" stroke-dasharray="1 1"/>
<path d="M1074.5 682V847" stroke="#797979" stroke-dasharray="1 1"/>
<path d="M1131.5 514V679" stroke="#797979" stroke-dasharray="1 1"/>
<path d="M1131.5 682V847" stroke="#797979" stroke-dasharray="1 1"/>
<path d="M1188.5 514V679" stroke="#797979" stroke-dasharray="1 1"/>
<path d="M1188.5 682V847" stroke="#797979" stroke-dasharray="1 1"/>
<path d="M1245.5 514V679" stroke="#797979" stroke-dasharray="1 1"/>
<path d="M1245.5 682V847" stroke="#797979" stroke-dasharray="1 1"/>
<path d="M1302.5 514V679" stroke="#797979" stroke-dasharray="1 1"/>
<path d="M1302.5 682V847" stroke="#797979" stroke-dasharray="1 1"/>
<path d="M1359.5 514V679" stroke="#797979" stroke-dasharray="1 1"/>
<path d="M1359.5 682V847" stroke="#797979" stroke-dasharray="1 1"/>
<path d="M1416.5 514V679" stroke="#797979" stroke-dasharray="1 1"/>
<path d="M1416.5 682V847" stroke="#797979" stroke-dasharray="1 1"/>
<path d="M1472.5 514V679" stroke="#797979" stroke-dasharray="1 1"/>
<path d="M1472.5 682V847" stroke="#797979" stroke-dasharray="1 1"/>
<path d="M1529.5 514V679" stroke="#797979" stroke-dasharray="1 1"/>
<path d="M1529.5 682V847" stroke="#797979" stroke-dasharray="1 1"/>
<path d="M1586.5 514V679" stroke="#797979" stroke-dasharray="1 1"/>
<path d="M1586.5 682V847" stroke="#797979" stroke-dasharray="1 1"/>
<path d="M1643.5 514V679" stroke="#797979" stroke-dasharray="1 1"/>
<path d="M1643.5 682V847" stroke="#797979" stroke-dasharray="1 1"/>
<path d="M1700.5 514V679" stroke="#797979" stroke-dasharray="1 1"/>
<path d="M1700.5 682V847" stroke="#797979" stroke-dasharray="1 1"/>
<path d="M1757.5 514V679" stroke="#797979" stroke-dasharray="1 1"/>
<path d="M1757.5 682V847" stroke="#797979" stroke-dasharray="1 1"/>
<path d="M1814.5 514V679" stroke="#797979" stroke-dasharray="1 1"/>
<path d="M1814.5 682V847" stroke="#797979" stroke-dasharray="1 1"/>
<path d="M1871.5 514V679" stroke="#797979" stroke-dasharray="1 1"/>
<path d="M1871.5 682V847" stroke="#797979" stroke-dasharray="1 1"/>
<path d="M52 529.5H1878" stroke="#797979" stroke-dasharray="1 1"/>
<path d="M52 549.5H1878" stroke="#797979" stroke-dasharray="1 1"/>
<path d="M52 570.5H1878" stroke="#797979" stroke-dasharray="1 1"/>
<path d="M52 590.5H1878" stroke="#797979" stroke-dasharray="1 1"/>
<path d="M52 611.5H1878" stroke="#797979" stroke-dasharray="1 1"/>
<path d="M52 631.5H1878" stroke="#797979" stroke-dasharray="1 1"/>
<path d="M52 652.5H1878" stroke="#797979" stroke-dasharray="1 1"/>
<path d="M52 672.5H1878" stroke="#797979" stroke-dasharray="1 1"/>
<path d="M52 696.5H1878" stroke="#797979" stroke-dasharray="1 1"/>
<path d="M52 709.5H1878" stroke="#797979" stroke-dasharray="1 1"/>
<path d="M52 722.5H1878" stroke="#797979" stroke-dasharray="1 1"/>
<path d="M52 735.5H1878" stroke="#797979" stroke-dasharray="1 1"/>
<path d="M52 748.5H1878" stroke="#797979" stroke-dasharray="1 1"/>
<path d="M52 761.5H1878" stroke="#797979" stroke-dasharray="1 1"/>
<path d="M52 774.5H1878" stroke="#797979" stroke-dasharray="1 1"/>
<path d="M52 787.5H1878" stroke="#797979" stroke-dasharray="1 1"/>
<path d="M52 800.5H1878" stroke="#797979" stroke-dasharray="1 1"/>
<path d="M52 813.5H1878" stroke="#797979" stroke-dasharray="1 1"/>
<path d="M52 826.5H1878" stroke="#797979" stroke-dasharray="1 1"/>
<path d="M52 840.5H1878" stroke="#797979" stroke-dasharray="1 1"/>
<rect x="43" y="529" width="7" height="1" fill="#000"/>
<text x="40" y="533" fill="#000" font-size="10.5" text-anchor="end">8000</text>
<rect x="43" y="549" width="7" height="1" fill="#000"/>
<text x="40" y="553" fill="#000" font-size="10.5" text-anchor="end">7000</text>
<rect x="43" y="570" width="7" height="1" fill="#000"/>
<text x="40" y="574" fill="#000" font-size="10.5" text-anchor="end">6000</text>
<rect x="43" y="590" width="7" height="1" fill="#000"/>
<text x="40" y="594" fill="#000" font-size="10.5" text-anchor="end">5000</text>
<rect x="43" y="611" width="7" height="1" fill="#000"/>
<text x="40" y="615" fill="#000" font-size="10.5" text-anchor="end">4000</text>
<rect x="43" y="631" width="7" height="1" fill="#000"/>
<text x="40" y="635" fill="#000" font-size="10.5" text-anchor="end">3000</text>
<rect x="43" y="652" width="7" height="1" fill="#000"/>
<text x="40" y="656" fill="#000" font-size="10.5" text-anchor="end">2000</text>
<rect x="43" y="672" width="7" height="1" fill="#000"/>
<text x="40" y="676" fill="#000" font-size="10.5" text-anchor="end">1000</text>
<rect x="47" y="519" width="3" height="1" fill="#000"/>
<rect x="47" y="524" width="3" height="1" fill="#000"/>
<rect x="47" y="534" width="3" height="1" fill="#000"/>
<rect x="47" y="539" width="3" height="1" fill="#000"/>
<rect x="47" y="544" width="3" height="1" fill="#000"/>
<rect x="47" y="555" width="3" height="1" fill="#000"/>
<rect x="47" y="560" width="3" height="1" fill="#000"/>
<rect x="47" y="565" width="3" height="1" fill="#000"/>
<rect x="47" y="575" width="3" height="1" fill="#000"/>
<rect x="47" y="580" width="3" height="1" fill="#000"/>
<rect x="47" y="585" width="3" height="1" fill="#000"/>
<rect x="47" y="595" width="3" height="1" fill="#000"/>
<rect x="47" y="601" width="3" height="1" fill="#000"/>
<rect x="47" y="606" width="3" height="1" fill="#000"/>
<rect x="47" y="616" width="3" height="1" fill="#000"/>
<rect x="47" y="621" width="3" height="1" fill="#000"/>
<rect x="47" y="626" width="3" height="1" fill="#000"/>
<rect x="47" y="636" width="3" height="1" fill="#000"/>
<rect x="47" y="641" width="3" height="1" fill="#000"/>
<rect x="47" y="646" width="3" height="1" fill="#000"/>
<rect x="47" y="657" width="3" height="1" fill="#000"/>
<rect x="47" y="662" width="3" height="1" fill="#000"/>
<rect x="47" y="667" width="3" height="1" fill="#000"/>
<rect x="47" y="677" width="3" height="1" fill="#000"/>
<rect x="43" y="696" width="7" height="1" fill="#000"/>
<text x="40" y="700" fill="#000" font-size="10.5" text-anchor="end">-2.6</text>
<rect x="43" y="709" width="7" height="1" fill="#000"/>
<text x="40" y="713" fill="#000" font-size="10.5" text-anchor="end">-2.8</text>
<rect x="43" y="722" width="7" height="1" fill="#000"/>
<text x="40" y="726" fill="#000" font-size="10.5" text-anchor="end">-3.0</text>
<rect x="43" y="735" width="7" height="1" fill="#000"/>
<text x="40" y="739" fill="#000" font-size="10.5" text-anchor="end">-3.2</text>
<rect x="43" y="748" width="7" height="1" fill="#000"/>
<text x="40" y="752" fill="#000" font-size="10.5" text-anchor="end">-3.4</text>
<rect x="43" y="761" width="7" height="1" fill="#000"/>
<text x="40" y="765" fill="#000" font-size="10.5" text-anchor="end">-3.6</text>
<rect x="43" y="774" width="7" height="1" fill="#000"/>
<text x="40" y="778" fill="#000" font-size="10.5" text-anchor="end">-3.8</text>
<rect x="43" y="787" width="7" height="1" fill="#000"/>
<text x="40" y="791" fill="#000" font-size="10.5" text-anchor="end">-4.0</text>
<rect x="43" y="800" width="7" height="1" fill="#000"/>
<text x="40" y="804" fill="#000" font-size="10.5" text-anchor="end">-4.2</text>
<rect x="43" y="813" width="7" height="1" fill="#000"/>
<text x="40" y="817" fill="#000" font-size="10.5" text-anchor="end">-4.4</text>
<rect x="43" y="826" width="7" height="1" fill="#000"/>
<text x="40" y="830" fill="#000" font-size="10.5" text-anchor="end">-4.6</text>
<rect x="43" y="840" width="7" height="1" fill="#000"/>
<text x="40" y="844" fill="#000" font-size="10.5" text-anchor="end">-4.8</text>
<rect x="47" y="685" width="3" height="1" fill="#000"/>
<rect x="47" y="688" width="3" height="1" fill="#000"/>
<rect x="47" y="691" width="3" height="1" fill="#000"/>
<rect x="47" y="693" width="3" height="1" fill="#000"/>
<rect x="47" y="698" width="3" height="1" fill="#000"/>
<rect x="47" y="701" width="3" height="1" fill="#000"/>
<rect x="47" y="704" width="3" height="1" fill="#000"/>
<rect x="47" y="706" width="3" height="1" fill="#000"/>
<rect x="47" y="712" width="3" height="1" fill="#000"/>
<rect x="47" y="714" width="3" height="1" fill="#000"/>
<rect x="47" y="717" width="3" height="1" fill="#000"/>
<rect x="47" y="719" width="3" height="1" fill="#000"/>
<rect x="47" y="725" width="3" height="1" fill="#000"/>
<rect x="47" y="727" width="3" height="1" fill="#000"/>
<rect x="47" y="730" width="3" height="1" fill="#000"/>
<rect x="47" y="733" width="3" height="1" fill="#000"/>
<rect x="47" y="738" width="3" height="1" fill="#000"/>
<rect x="47" y="740" width="3" height="1" fill="#000"/>
<rect x="47" y="743" width="3" height="1" fill="#000"/>
<rect x="47" y="746" width="3" height="1" fill="#000"/>
<rect x="47" y="751" width="3" height="1" fill="#000"/>
<rect x="47" y="753" width="3" height="1" fill="#000"/>
<rect x="47" y="756" width="3" height="1" fill="#000"/>
<rect x="47" y="759" width="3" height="1" fill="#000"/>
<rect x="47" y="764" width="3" height="1" fill="#000"/>
<rect x="47" y="767" width="3" height="1" fill="#000"/>
<rect x="47" y="769" width="3" height="1" fill="#000"/>
<rect x="47" y="772" width="3" height="1" fill="#000"/>
<rect x="47" y="777" width="3" height="1" fill="#000"/>
<rect x="47" y="780" width="3" height="1" fill="#000"/>
<rect x="47" y="782" width="3" height="1" fill="#000"/>
<rect x="47" y="785" width="3" height="1" fill="#000"/>
<rect x="47" y="790" width="3" height="1" fill="#000"/>
<rect x="47" y="793" width="3" height="1" fill="#000"/>
<rect x="47" y="795" width="3" height="1" fill="#000"/>
<rect x="47" y="798" width="3" height="1" fill="#000"/>
<rect x="47" y="803" width="3" height="1" fill="#000"/>
<rect x="47" y="806" width="3" height="1" fill="#000"/>
<rect x="47" y="809" width="3" height="1" fill="#000"/>
<rect x="47" y="811" width="3" height="1" fill="#000"/>
<rect x="47" y="816" width="3" height="1" fill="#000"/>
<rect x="47" y="819" width="3" height="1" fill="#000"/>
<rect x="47" y="822" width="3" height="1" fill="#000"/>
<rect x="47" y="824" width="3" height="1" fill="#000"/>
<rect x="47" y="829" width="3" height="1" fill="#000"/>
<rect x="47" y="832" width="3" height="1" fill="#000"/>
<rect x="47" y="835" width="3" height="1" fill="#000"/>
<rect x="47" y="837" width="3" height="1" fill="#000"/>
<rect x="47" y="843" width="3" height="1" fill="#000"/>
<rect x="47" y="845" width="3" height="1" fill="#000"/>
<rect x="50" y="847" width="1829" height="1" fill="#000"/>
<rect x="65" y="848" width="1" height="2" fill="#000"/>
<rect x="79" y="848" width="1" height="2" fill="#000"/>
<rect x="93" y="848" width="1" height="2" fill="#000"/>
<rect x="107" y="848" width="1" height="3" fill="#000"/>
<text x="107.5" y="863" fill="#000" font-size="10.5" text-anchor="middle">50</text>
<rect x="122" y="848" width="1" height="2" fill="#000"/>
<rect x="136" y="848" width="1" height="2" fill="#000"/>
<rect x="150" y="848" width="1" height="2" fill="#000"/>
<rect x="164" y="848" width="1" height="3" fill="#000"/>
<text x="164.5" y="863" fill="#000" font-size="10.5" text-anchor="middle">100</text>
<rect x="179" y="848" width="1" height="2" fill="#000"/>
<rect x="193" y="848" width="1" height="2" fill="#000"/>
<rect x="207" y="848" width="1" height="2" fill="#000"/>
<rect x="221" y="848" width="1" height="3" fill="#000"/>
<text x="221.5" y="863" fill="#000" font-size="10.5" text-anchor="middle">150</text>
<rect x="236" y="848" width="1" height="2" fill="#000"/>
<rect x="250" y="848" width="1" height="2" fill="#000"/>
<rect x="264" y="848" width="1" height="2" fill="#000"/>
<rect x="278" y="848" width="1" height="3" fill="#000"/>
<text x="278.5" y="863" fill="#000" font-size="10.5" text-anchor="middle">200</text>
<rect x="292" y="848" width="1" height="2" fill="#000"/>
<rect x="307" y="848" width="1" height="2" fill="#000"/>
<rect x="321" y="848" width="1" height="2" fill="#000"/>
<rect x="335" y="848" width="1" height="3" fill="#000"/>
<text x="335.5" y="863" fill="#000" font-size="10.5" text-anchor="middle">250</text>
<rect x="349" y="848" width="1" height="2" fill="#000"/>
<rect x="364" y="848" width="1" height="2" fill="#000"/>
<rect x="378" y="848" width="1" height="2" fill="#000"/>
<rect x="391" y="848" width="1" height="3" fill="#000"/>
<text x="391.5" y="863" fill="#000" font-size="10.5" text-anchor="middle">300</text>
<rect x="406" y="848" width="1" height="2" fill="#000"/>
<rect x="420" y="848" width="1" height="2" fill="#000"/>
<rect x="435" y="848" width="1" height="2" fill="#000"/>
<rect x="448" y="848" width="1" height="3" fill="#000"/>
<text x="448.5" y="863" fill="#000" font-size="10.5" text-anchor="middle">350</text>
<rect x="463" y="848" width="1" height="2" fill="#000"/>
<rect x="477" y="848" width="1" height="2" fill="#000"/>
<rect x="492" y="848" width="1" height="2" fill="#000"/>
<rect x="505" y="848" width="1" height="3" fill="#000"/>
<text x="505.5" y="863" fill="#000" font-size="10.5" text-anchor="middle">400</text>
<rect x="520" y="848" width="1" height="2" fill="#000"/>
<rect x="534" y="848" width="1" height="2" fill="#000"/>
<rect x="548" y="848" width="1" height="2" fill="#000"/>
<rect x="562" y="848" width="1" height="3" fill="#000"/>
<text x="562.5" y="863" fill="#000" font-size="10.5" text-anchor="middle">450</text>
<rect x="577" y="848" width="1" height="2" fill="#000"/>
<rect x="591" y="848" width="1" height="2" fill="#000"/>
<rect x="605" y="848" width="1" height="2" fill="#000"/>
<rect x="619" y="848" width="1" height="3" fill="#000"/>
<text x="619.5" y="863" fill="#000" font-size="10.5" text-anchor="middle">500</text>
<rect x="634" y="848" width="1" height="2" fill="#000"/>
<rect x="648" y="848" width="1" height="2" fill="#000"/>
<rect x="662" y="848" width="1" height="2" fill="#000"/>
<rect x="676" y="848" width="1" height="3" fill="#000"/>
<text x="676.5" y="863" fill="#000" font-size="10.5" text-anchor="middle">550</text>
<rect x="691" y="848" width="1" height="2" fill="#000"/>
<rect x="705" y="848" width="1" height="2" fill="#000"/>
<rect x="719" y="848" width="1" height="2" fill="#000"/>
<rect x="733" y="848" width="1" height="3" fill="#000"/>
<text x="733.5" y="863" fill="#000" font-size="10.5" text-anchor="middle">600</text>
<rect x="748" y="848" width="1" height="2" fill="#000"/>
<rect x="762" y="848" width="1" height="2" fill="#000"/>
<rect x="776" y="848" width="1" height="2" fill="#000"/>
<rect x="790" y="848" width="1" height="3" fill="#000"/>
<text x="790.5" y="863" fill="#000" font-size="10.5" text-anchor="middle">650</text>
<rect x="804" y="848" width="1" height="2" fill="#000"/>
<rect x="819" y="848" width="1" height="2" fill="#000"/>
<rect x="833" y="848" width="1" height="2" fill="#000"/>
<rect x="847" y="848" width="1" height="3" fill="#000"/>
<text x="847.5" y="863" fill="#000" font-size="10.5" text-anchor="middle">700</text>
<rect x="861" y="848" width="1" height="2" fill="#000"/>
<rect x="876" y="848" width="1" height="2" fill="#000"/>
<rect x="890" y="848" width="1" height="2" fill="#000"/>
<rect x="904" y="848" width="1" height="3" fill="#000"/>
<text x="904.5" y="863" fill="#000" font-size="10.5" text-anchor="middle">750</text>
<rect x="918" y="848" width="1" height="2" fill="#000"/>
<rect x="932" y="848" width="1" height="2" fill="#000"/>
<rect x="947" y="848" width="1" height="2" fill="#000"/>
<rect x="960" y="848" width="1" height="3" fill="#000"/>
<text x="960.5" y="863" fill="#000" font-size="10.5" text-anchor="middle">800</text>
<rect x="975" y="848" width="1" height="2" fill="#000"/>
<rect x="989" y="848" width="1" height="2" fill="#000"/>
<rect x="1004" y="848" width="1" height="2" fill="#000"/>
<rect x="1017" y="848" width="1" height="3" fill="#000"/>
<text x="1017.5" y="863" fill="#000" font-size="10.5" text-anchor="middle">850</text>
<rect x="1032" y="848" width="1" height="2" fill="#000"/>
<rect x="1046" y="848" width="1" height="2" fill="#000"/>
<rect x="1060" y="848" width="1" height="2" fill="#000"/>
<rect x="1074" y="848" width="1" height="3" fill="#000"/>
<text x="1074.5" y="863" fill="#000" font-size="10.5" text-anchor="middle">900</text>
<rect x="1089" y="848" width="1" height="2" fill="#000"/>
<rect x="1103" y="848" width="1" height="2" fill="#000"/>
<rect x="1117" y="848" width="1" height="2" fill="#000"/>
<rect x="1131" y="848" width="1" height="3" fill="#000"/>
<text x="1131.5" y="863" fill="#000" font-size="10.5" text-anchor="middle">950</text>
<rect x="1146" y="848" width="1" height="2" fill="#000"/>
<rect x="1160" y="848" width="1" height="2" fill="#000"/>
<rect x="1174" y="848" width="1" height="2" fill="#000"/>
<rect x="1188" y="848" width="1" height="3" fill="#000"/>
<text x="1188.5" y="863" fill="#000" font-size="10.5" text-anchor="middle">1000</text>
<rect x="1203" y="848" width="1" height="2" fill="#000"/>
<rect x="1217" y="848" width="1" height="2" fill="#000"/>
<rect x="1231" y="848" width="1" height="2" fill="#000"/>
<rect x="1245" y="848" width="1" height="3" fill="#000"/>
<text x="1245.5" y="863" fill="#000" font-size="10.5" text-anchor="middle">1050</text>
<rect x="1260" y="848" width="1" height="2" fill="#000"/>
<rect x="1274" y="848" width="1" height="2" fill="#000"/>
<rect x="1288" y="848" width="1" height="2" fill="#000"/>
<rect x="1302" y="848" width="1" height="3" fill="#000"/>
<text x="1302.5" y="863" fill="#000" font-size="10.5" text-anchor="middle">1100</text>
<rect x="1317" y="848" width="1" height="2" fill="#000"/>
<rect x="1331" y="848" width="1" height="2" fill="#000"/>
<rect x="1345" y="848" width="1" height="2" fill="#000"/>
<rect x="1359" y="848" width="1" height="3" fill="#000"/>
<text x="1359.5" y="863" fill="#000" font-size="10.5" text-anchor="middle">1150</text>
<rect x="1373" y="848" width="1" height="2" fill="#000"/>
<rect x="1388" y="848" width="1" height="2" fill="#000"/>
<rect x="1402" y="848" width="1" height="2" fill="#000"/>
<rect x="1416" y="848" width="1" height="3" fill="#000"/>
<text x="1416.5" y="863" fill="#000" font-size="10.5" text-anchor="middle">1200</text>
<rect x="1430" y="848" width="1" height="2" fill="#000"/>
<rect x="1445" y="848" width="1" height="2" fill="#000"/>
<rect x="1459" y="848" width="1" height="2" fill="#000"/>
<rect x="1472" y="848" width="1" height="3" fill="#000"/>
<text x="1472.5" y="863" fill="#000" font-size="10.5" text-anchor="middle">1250</text>
<rect x="1487" y="848" width="1" height="2" fill="#000"/>
<rect x="1501" y="848" width="1" height="2" fill="#000"/>
<rect x="1516" y="848" width="1" height="2" fill="#000"/>
<rect x="1529" y="848" width="1" height="3" fill="#000"/>
<text x="1529.5" y="863" fill="#000" font-size="10.5" text-anchor="middle">1300</text>
<rect x="1544" y="848" width="1" height="2" fill="#000"/>
<rect x="1558" y="848" width="1" height="2" fill="#000"/>
<rect x="1573" y="848" width="1" height="2" fill="#000"/>
<rect x="1586" y="848" width="1" height="3" fill="#000"/>
<text x="1586.5" y="863" fill="#000" font-size="10.5" text-anchor="middle">1350</text>
<rect x="1601" y="848" width="1" height="2" fill="#000"/>
<rect x="1615" y="848" width="1" height="2" fill="#000"/>
<rect x="1629" y="848" width="1" height="2" fill="#000"/>
<rect x="1643" y="848" width="1" height="3" fill="#000"/>
<text x="1643.5" y="863" fill="#000" font-size="10.5" text-anchor="middle">1400</text>
<rect x="1658" y="848" width="1" height="2" fill="#000"/>
<rect x="1672" y="848" width="1" height="2" fill="#000"/>
<rect x="1686" y="848" width="1" height="2" fill="#000"/>
<rect x="1700" y="848" width="1" height="3" fill="#000"/>
<text x="1700.5" y="863" fill="#000" font-size="10.5" text-anchor="middle">1450</text>
<rect x="1715" y="848" width="1" height="2" fill="#000"/>
<rect x="1729" y="848" width="1" height="2" fill="#000"/>
<rect x="1743" y="848" width="1" height="2" fill="#000"/>
<rect x="1757" y="848" width="1" height="3" fill="#000"/>
<text x="1757.5" y="863" fill="#000" font-size="10.5" text-anchor="middle">1500</text>
<rect x="1772" y="848" width="1" height="2" fill="#000"/>
<rect x="1786" y="848" width="1" height="2" fill="#000"/>
<rect x="1800" y="848" width="1" height="2" fill="#000"/>
<rect x="1814" y="848" width="1" height="3" fill="#000"/>
<text x="1814.5" y="863" fill="#000" font-size="10.5" text-anchor="middle">1550</text>
<rect x="1829" y="848" width="1" height="2" fill="#000"/>
<rect x="1843" y="848" width="1" height="2" fill="#000"/>
<rect x="1857" y="848" width="1" height="2" fill="#000"/>
<rect x="1871" y="848" width="1" height="3" fill="#000"/>
<text x="1871.5" y="863" fill="#000" font-size="10.5" text-anchor="middle">1600</text>
<rect x="17" y="849" width="30" height="13" fill="#000"/>
<text x="32" y="859.5" fill="#fff" font-size="10.5" text-anchor="middle">metre</text>
<path d="M1877.5 497V847" stroke="#e00000" stroke-dasharray="3 2"/>
<rect x="1881" y="681" width="11" height="166" fill="#e8e8e8"/>
<rect x="1881.5" y="681.5" width="10" height="165" fill="none" stroke="#b4b4b4"/>
<path d="M1886.5 685L1890 691H1883Z" fill="none" stroke="#606060"/>
<path d="M1886.5 843L1890 837H1883Z" fill="none" stroke="#606060"/>
<clipPath id="cl"><rect x="52" y="514" width="1826" height="165"/></clipPath>
<clipPath id="cc"><rect x="52" y="682" width="1826" height="165"/></clipPath>
<g clip-path="url(#cl)">
<polyline points="56.0,606.0 56.6,606.0 60.0,601.9 62.4,599.0 64.0,598.6 68.0,597.7 69.4,597.4 72.0,597.4 76.0,597.4 80.0,597.4 84.0,597.4 88.0,597.4 92.0,597.4 92.5,597.4 96.0,603.0 98.0,615.6 100.0,610.0 101.7,615.6 104.0,601.7 108.0,601.0 112.0,600.2 116.0,599.5 120.0,598.7 124.0,598.0 128.0,597.3 132.0,596.5 136.0,595.8 140.0,595.1 143.0,594.5 144.0,607.0 144.5,613.3 147.0,602.0 148.0,600.9 151.4,597.0 152.0,596.9 156.0,596.2 160.0,595.6 161.8,595.3 164.0,595.2 168.0,594.9 172.0,594.7 176.0,594.5 180.0,594.3 184.0,594.0 188.0,593.8 192.0,593.6 196.0,593.3 200.0,593.1 204.0,592.9 208.0,592.6 212.0,592.4 216.0,592.2 220.0,591.9 224.0,591.7 228.0,591.5 232.0,591.3 236.0,591.0 240.0,590.8 244.0,590.6 245.1,590.5 248.0,597.9 250.0,603.0 252.0,599.5 254.0,596.0 256.0,597.3 260.0,600.0 264.0,596.0 265.0,595.0 268.0,597.4 272.0,600.6 276.0,599.4 277.5,599.0 279.8,592.5 280.0,592.5 284.0,592.2 288.0,591.8 292.0,591.5 296.0,591.2 300.0,590.8 304.0,590.5 308.0,590.2 312.0,589.8 316.0,589.5 320.0,589.2 324.0,588.8 328.0,588.5 332.0,588.2 336.0,587.8 340.0,587.5 344.0,587.2 348.0,586.8 352.0,586.5 356.0,586.2 360.0,585.8 364.0,585.5 368.0,585.2 372.0,584.8 376.0,584.5 380.0,584.2 384.0,583.8 388.0,583.5 392.0,583.2 396.0,582.8 400.0,582.5 404.0,582.3 408.0,582.1 412.0,581.9 416.0,581.8 420.0,581.6 424.0,581.4 428.0,581.2 432.0,581.0 436.0,580.8 440.0,580.6 444.0,580.4 448.0,580.3 452.0,580.1 456.0,579.9 460.0,579.7 464.0,579.5 468.0,579.3 472.0,579.1 476.0,579.0 480.0,578.8 484.0,578.6 488.0,578.4 492.0,578.2 496.0,578.0 500.0,577.8 504.0,577.7 508.0,577.5 512.0,577.3 516.0,577.1 518.0,577.0 520.0,577.3 524.0,578.1 528.8,576.7 533.6,580.6 536.0,579.5 541.6,579.1 552.0,581.7 557.6,581.2 563.2,584.2 568.0,582.4 572.8,580.9 577.6,584.9 580.0,583.1 584.0,580.6 588.0,585.5 592.0,582.9 595.2,581.2 598.4,585.3 600.0,584.2 606.4,581.1 612.8,585.7 616.0,583.8 620.0,580.9 624.0,586.1 628.0,583.5 632.0,581.1 640.0,582.6 644.8,580.7 649.6,583.4 652.0,580.9 656.0,580.9 660.0,581.0 664.0,579.1 668.0,579.8 672.0,578.4 676.0,577.6 680.0,578.0 684.0,576.6 688.0,575.5 692.0,575.2 696.0,574.9 700.0,572.9 704.0,574.1 708.0,571.4 712.0,572.1 716.0,571.5 720.0,569.0 724.0,569.7 728.0,568.0 732.0,566.5 736.0,562.7 740.0,560.2 744.0,558.6 748.0,559.8 752.0,558.0 756.0,558.8 760.0,558.9 764.0,558.6 768.0,557.1 772.0,556.8 776.0,556.1 780.0,555.3 784.0,553.0 788.0,553.3 792.0,552.4 796.0,551.6 800.0,549.0 804.0,549.9 808.0,547.2 812.0,546.8 816.0,546.3 820.0,546.0 824.0,543.9 828.0,544.1 832.0,542.4 836.0,541.7 840.0,541.4 844.0,540.8 848.0,540.4 852.0,540.3 856.0,541.1 860.0,541.4 864.0,539.3 868.0,538.1 872.0,539.0 876.0,537.1 880.0,535.8 884.0,534.5 888.0,534.2 892.0,533.7 896.0,531.9 900.0,530.9 904.0,529.1 908.0,529.9 913.6,525.6 919.2,531.2 924.0,529.3 929.6,526.5 935.2,530.5 940.0,529.3 944.0,526.5 948.0,530.6 952.0,528.4 956.8,525.2 961.6,531.7 964.0,528.6 968.8,526.1 973.6,531.1 976.0,529.0 980.0,524.8 984.0,532.2 988.0,529.0 992.8,526.6 997.6,530.9 1000.0,529.5 1004.8,526.2 1009.6,531.3 1012.0,528.9 1017.6,527.2 1023.2,530.7 1028.0,529.6 1033.6,526.0 1039.2,531.7 1044.0,528.8 1048.0,526.4 1052.0,531.5 1056.0,529.6 1060.8,526.7 1065.6,531.3 1068.0,529.2 1074.4,525.6 1080.8,532.3 1084.0,529.3 1088.0,525.2 1092.0,532.7 1096.0,529.3 1102.4,526.4 1108.8,532.0 1112.0,530.1 1116.0,527.2 1124.0,529.9 1128.8,527.6 1133.6,531.3 1136.0,529.9 1140.8,526.2 1145.6,532.4 1148.0,529.4 1152.8,525.4 1160.0,530.0 1164.0,526.7 1168.0,532.2 1172.0,530.6 1177.6,526.0 1188.0,529.7 1192.0,527.7 1196.0,531.7 1200.0,529.8 1204.0,526.9 1208.0,532.3 1212.0,530.6 1215.2,527.5 1218.4,532.0 1220.0,530.6 1224.8,525.7 1229.6,533.4 1232.0,530.3 1236.8,528.1 1241.6,531.6 1244.0,529.9 1248.8,525.6 1253.6,533.6 1256.0,530.4 1260.0,526.0 1264.0,533.4 1268.0,530.2 1272.0,527.2 1276.0,532.5 1280.0,530.8 1284.0,527.4 1288.0,532.5 1292.0,530.4 1295.2,525.8 1298.4,533.7 1300.0,530.0 1304.8,527.2 1309.6,532.7 1312.0,531.0 1317.6,525.8 1323.2,533.9 1328.0,530.1 1332.0,527.7 1336.0,532.5 1340.0,530.4 1344.0,527.8 1348.0,532.5 1352.0,529.9 1356.8,527.9 1361.6,532.5 1364.0,530.2 1368.8,527.1 1376.0,531.1 1382.4,527.3 1388.8,533.1 1392.0,530.6 1396.0,527.0 1400.0,533.4 1404.0,530.0 1408.8,526.2 1413.6,534.1 1416.0,530.4 1420.0,527.9 1424.0,532.9 1428.0,531.2 1432.8,526.9 1437.6,533.7 1440.0,531.4 1443.2,527.6 1446.4,533.2 1448.0,531.3 1452.8,527.7 1457.6,533.2 1460.0,530.8 1465.6,527.2 1476.0,531.2 1480.8,527.1 1485.6,533.8 1488.0,531.4 1492.8,528.9 1497.6,532.6 1500.0,531.0 1504.8,527.3 1509.6,533.8 1512.0,531.0 1516.0,527.6 1520.0,533.7 1524.0,530.4 1528.0,527.7 1532.0,533.7 1536.0,531.3 1540.0,527.0 1544.0,534.3 1548.0,531.0 1553.6,529.1 1559.2,532.8 1564.0,531.4 1567.2,528.7 1572.0,531.5 1577.6,526.5 1583.2,534.8 1588.0,530.8 1592.0,528.2 1596.0,533.6 1600.0,531.7 1603.2,527.6 1606.4,534.2 1608.0,531.9 1612.8,527.4 1617.6,534.4 1620.0,531.4 1624.8,527.6 1629.6,534.3 1632.0,531.7 1637.6,529.4 1643.2,533.0 1648.0,532.1 1653.6,528.8 1659.2,533.6 1664.0,531.2 1668.0,528.1 1672.0,534.2 1676.0,532.0 1688.0,531.2 1694.4,527.6 1700.8,534.7 1704.0,531.0 1709.6,528.2 1715.2,534.4 1720.0,532.3 1724.8,529.2 1729.6,533.7 1732.0,531.8 1736.0,528.4 1740.0,534.4 1744.0,532.1 1750.4,527.2 1756.8,535.3 1760.0,531.9 1763.2,527.4 1766.4,535.3 1768.0,531.5 1773.6,529.0 1779.2,534.1 1784.0,531.8 1788.8,527.8 1793.6,535.1 1796.0,531.9 1800.0,527.8 1804.0,535.5 1808.0,532.2 1812.8,528.3 1817.6,536.9 1820.0,533.1 1823.2,531.8 1826.4,535.5 1828.0,534.1 1832.8,531.6 1837.6,537.1 1840.0,535.0 1844.8,532.6 1849.6,537.9 1852.0,535.8 1857.6,533.5 1863.2,539.1 1868.0,537.7 1872.0,535.3 1876.0,539.5" fill="none" stroke="#e6e6e6" stroke-width="1.0" shape-rendering="crispEdges"/>
<polyline points="56.0,646.8 56.6,646.8 60.0,646.3 64.0,645.6 68.0,645.0 72.0,644.3 76.0,643.7 80.0,643.0 84.0,642.4 88.0,641.7 92.0,641.1 92.5,641.0 96.0,629.2 98.0,622.5 100.0,638.0 104.0,637.5 108.0,637.1 112.0,636.6 116.0,636.2 120.0,635.7 124.0,635.2 128.0,634.8 132.0,634.3 136.0,633.9 140.0,633.4 143.4,633.0 144.0,629.5 146.0,618.0 148.0,616.0 151.0,642.0 152.0,640.5 156.0,634.5 157.0,633.0 160.0,632.6 164.0,632.0 168.0,631.4 172.0,630.9 176.0,630.3 180.0,629.7 184.0,629.2 188.0,628.6 192.0,628.0 196.0,627.5 200.0,626.9 204.0,626.3 208.0,625.8 212.0,625.2 216.0,624.6 220.0,624.1 224.0,623.5 228.0,622.9 232.0,622.4 236.0,621.8 240.0,621.2 244.0,620.7 245.1,620.5 248.0,611.7 249.0,608.7 252.0,613.1 254.0,616.0 256.0,615.2 260.0,613.8 262.0,613.0 264.0,614.0 268.0,616.0 270.0,617.0 272.0,616.0 276.0,614.0 277.5,613.3 280.0,619.1 282.0,623.7 284.0,623.5 288.0,623.2 292.0,622.9 296.0,622.5 300.0,622.2 304.0,621.9 308.0,621.6 312.0,621.2 316.0,620.9 320.0,620.6 324.0,620.2 328.0,619.9 332.0,619.6 336.0,619.3 340.0,618.9 344.0,618.6 348.0,618.3 352.0,617.9 356.0,617.6 360.0,617.3 364.0,617.0 368.0,616.6 372.0,616.3 376.0,616.0 380.0,615.6 384.0,615.3 388.0,615.0 392.0,614.7 396.0,614.3 400.0,614.0 404.0,613.9 408.0,613.8 412.0,613.7 416.0,613.6 420.0,613.5 424.0,613.4 428.0,613.3 432.0,613.2 436.0,613.1 440.0,613.0 444.0,612.9 448.0,612.8 452.0,612.7 456.0,612.6 460.0,612.5 464.0,612.4 468.0,612.3 472.0,612.2 476.0,612.1 480.0,612.0 484.0,611.9 488.0,611.8 492.0,611.7 496.0,611.6 500.0,611.5 504.0,611.4 508.0,611.3 512.0,611.2 516.0,611.1 518.0,611.0 520.0,610.9 524.0,610.7 528.0,610.5 532.0,610.4 536.0,610.2 540.0,610.0 544.0,604.3 548.0,603.1 552.0,604.8 556.0,603.7 560.0,604.5 564.0,603.6 568.0,603.1 572.0,603.0 576.0,603.9 580.0,604.7 584.0,603.3 588.0,604.6 592.0,603.6 596.0,603.9 600.0,603.5 604.0,605.0 608.0,603.1 612.0,604.4 616.0,604.1 620.0,604.3 624.0,604.2 628.0,604.8 632.0,604.4 636.0,603.9 640.0,602.5 644.0,602.4 648.0,601.4 652.0,602.8 656.0,601.3 660.0,601.4 664.0,599.5 668.0,598.9 672.0,597.8 676.0,598.3 680.0,597.8 684.0,596.2 688.0,595.9 692.0,595.2 696.0,594.9 700.0,593.0 704.0,591.9 708.0,592.5 712.0,591.6 716.0,590.2 720.0,590.0 724.0,588.7 728.0,585.3 732.0,583.6 736.0,579.4 740.0,577.3 744.0,577.4 748.0,577.3 752.0,577.0 756.0,577.6 760.0,576.1 764.0,577.7 768.0,576.9 772.0,577.3 776.0,576.8 780.0,575.4 784.0,572.1 788.0,571.3 792.0,569.4 796.0,566.7 800.0,565.0 804.0,565.5 808.0,564.5 812.0,562.3 816.0,563.4 820.0,561.0 824.0,560.1 828.0,560.7 832.0,559.7 836.0,559.5 840.0,559.4 844.0,559.6 848.0,560.3 852.0,559.9 856.0,559.2 860.0,558.8 864.0,559.3 868.0,558.1 872.0,557.5 876.0,556.7 880.0,554.8 884.0,552.8 888.0,552.4 892.0,551.8 896.0,549.6 900.0,548.7 904.0,547.0 908.0,546.9 912.8,544.9 917.6,549.5 920.0,547.5 924.8,544.8 929.6,549.6 932.0,547.4 937.6,544.8 943.2,549.6 948.0,547.9 952.8,544.6 957.6,549.8 960.0,547.7 964.0,543.5 968.0,550.7 972.0,546.9 978.4,543.5 984.8,550.7 988.0,547.5 992.8,543.4 997.6,550.8 1000.0,547.7 1003.2,545.4 1006.4,549.4 1008.0,547.8 1011.2,543.6 1014.4,550.7 1016.0,547.6 1019.2,543.4 1022.4,550.9 1024.0,547.2 1028.8,544.3 1033.6,550.3 1036.0,548.2 1040.0,544.2 1044.0,550.4 1048.0,547.9 1051.2,544.1 1054.4,550.5 1056.0,547.2 1062.4,543.6 1068.8,550.9 1072.0,547.7 1076.0,544.7 1080.0,550.1 1084.0,547.9 1088.0,543.1 1092.0,551.3 1096.0,547.4 1102.4,544.0 1108.8,550.7 1112.0,547.6 1116.8,543.9 1121.6,550.8 1124.0,548.0 1128.0,545.4 1132.0,549.7 1136.0,548.3 1142.4,545.0 1148.8,550.1 1152.0,548.1 1157.6,543.6 1163.2,551.2 1168.0,547.8 1172.0,545.4 1176.0,549.9 1180.0,548.5 1184.8,544.0 1189.6,550.9 1192.0,547.9 1198.4,544.7 1204.8,550.5 1208.0,547.3 1211.2,545.1 1214.4,550.3 1216.0,547.4 1220.8,543.9 1225.6,551.2 1228.0,548.1 1232.8,545.1 1237.6,550.4 1240.0,548.2 1244.8,544.0 1252.0,548.6 1256.8,544.8 1261.6,550.8 1264.0,547.8 1268.8,544.1 1273.6,551.3 1276.0,548.4 1279.2,545.3 1282.4,550.5 1284.0,547.6 1289.6,543.6 1300.0,548.6 1304.0,544.3 1312.0,548.7 1316.0,544.1 1320.0,551.6 1324.0,547.9 1328.0,546.3 1332.0,550.1 1336.0,547.8 1342.4,545.5 1348.8,550.8 1352.0,548.1 1356.0,545.1 1360.0,551.1 1364.0,548.8 1368.0,546.3 1372.0,550.2 1376.0,548.2 1392.0,548.3 1395.2,545.9 1398.4,550.7 1400.0,548.2 1404.0,545.6 1408.0,551.0 1412.0,549.2 1416.8,544.5 1421.6,551.9 1424.0,548.9 1428.8,545.5 1433.6,551.2 1436.0,549.4 1440.8,545.2 1445.6,551.5 1448.0,548.9 1451.2,546.1 1454.4,550.9 1456.0,549.1 1460.8,545.3 1465.6,551.6 1468.0,548.4 1473.6,544.3 1479.2,552.4 1484.0,549.1 1487.2,544.6 1492.0,549.4 1496.0,545.3 1500.0,551.7 1504.0,548.4 1507.2,546.7 1510.4,550.8 1512.0,549.0 1516.8,545.5 1521.6,551.7 1524.0,549.7 1530.4,545.2 1540.0,548.9 1545.6,544.8 1551.2,552.5 1556.0,549.1 1560.0,546.2 1564.0,551.4 1568.0,549.8 1573.6,546.6 1579.2,551.2 1584.0,549.1 1587.2,545.7 1590.4,552.0 1592.0,549.6 1596.8,546.4 1601.6,551.5 1604.0,549.8 1609.6,547.4 1620.0,549.2 1626.4,544.9 1632.8,552.8 1636.0,548.9 1640.8,545.4 1645.6,552.5 1648.0,549.5 1652.8,545.2 1657.6,552.8 1660.0,549.2 1672.0,549.0 1677.6,546.9 1683.2,551.6 1688.0,550.2 1692.0,546.6 1696.0,551.9 1700.0,550.1 1704.0,547.5 1708.0,551.3 1712.0,549.6 1718.4,547.1 1724.8,551.7 1728.0,549.3 1732.8,545.1 1737.6,553.3 1740.0,549.5 1743.2,547.7 1748.0,549.4 1753.6,547.9 1759.2,551.3 1764.0,550.4 1768.8,546.3 1773.6,552.6 1776.0,549.8 1781.6,547.4 1787.2,551.8 1792.0,550.6 1798.4,545.7 1804.8,553.6 1808.0,550.2 1814.4,546.9 1820.8,555.2 1824.0,552.0 1828.8,550.5 1833.6,554.6 1836.0,552.9 1840.0,550.4 1844.0,556.4 1848.0,553.7 1851.2,550.5 1854.4,557.9 1856.0,554.6 1859.2,550.9 1862.4,558.9 1864.0,555.7 1870.4,553.5 1876.8,559.0" fill="none" stroke="#e6e6e6" stroke-width="1.0" shape-rendering="crispEdges"/>
<polyline points="632.0,584.0 636.0,584.1 640.0,584.2 644.0,583.4 648.0,584.1 652.0,584.7 656.0,583.6 660.0,585.4 664.0,584.8 668.0,585.7 672.0,587.6 676.0,587.7 680.0,588.3 684.0,589.3 688.0,591.3 692.0,592.1 696.0,592.3 700.0,592.5 704.0,593.0 708.0,594.5 712.0,595.9 716.0,598.7 720.0,599.6 724.0,600.9 728.0,603.4 732.0,605.2 736.0,605.1 740.0,606.4 744.0,606.9 748.0,607.9 752.0,607.9 756.0,609.1 760.0,608.1 764.0,608.3 768.0,609.0 772.0,609.4 776.0,610.8 780.0,610.5 784.0,612.0 788.0,614.4 792.0,614.6 796.0,616.9 800.0,618.7 804.0,619.8 808.0,620.5 812.0,620.8 816.0,620.6 820.0,621.1 824.0,623.1 828.0,622.9 832.0,622.8 836.0,623.9 840.0,624.4 844.0,624.3 848.0,624.3 852.0,625.2 856.0,624.7 860.0,624.9 864.0,624.8 868.0,623.6 872.0,623.9 876.0,626.2 880.0,627.7 884.0,631.1 888.0,634.3 892.0,633.8 896.0,634.1 900.0,634.5 904.0,634.0 908.0,634.8 911.2,637.4 914.4,633.1 916.0,634.8 919.2,639.4 922.4,631.6 924.0,635.3 930.4,639.1 936.8,631.9 940.0,634.6 946.4,637.7 952.8,633.1 956.0,635.0 961.6,639.5 967.2,631.8 972.0,635.7 976.0,638.7 980.0,632.5 984.0,635.6 987.2,637.2 990.4,633.7 992.0,635.1 998.4,637.2 1004.8,633.8 1008.0,634.9 1012.8,638.9 1020.0,635.5 1023.2,639.3 1026.4,632.4 1028.0,635.9 1033.6,639.1 1039.2,632.6 1044.0,635.1 1047.2,639.3 1050.4,632.6 1052.0,634.8 1056.0,638.2 1060.0,633.4 1064.0,635.3 1068.8,638.8 1073.6,633.0 1076.0,635.5 1080.0,639.2 1084.0,632.8 1088.0,635.6 1091.2,638.7 1094.4,633.2 1096.0,635.9 1100.0,638.9 1104.0,633.2 1108.0,635.6 1112.8,637.6 1117.6,634.2 1120.0,635.8 1124.8,640.2 1129.6,632.4 1132.0,635.5 1136.8,638.4 1141.6,633.8 1144.0,636.3 1148.0,638.7 1152.0,633.6 1156.0,636.3 1161.6,638.0 1167.2,634.3 1172.0,636.1 1175.2,638.1 1178.4,634.3 1180.0,636.0 1184.8,640.1 1189.6,632.9 1192.0,635.8 1196.0,638.6 1200.0,634.0 1204.0,635.8 1207.2,638.7 1212.0,635.5 1216.8,638.7 1224.0,635.8 1230.4,640.5 1236.8,632.4 1240.0,636.0 1243.2,637.8 1246.4,634.4 1248.0,635.6 1251.2,638.6 1254.4,633.7 1256.0,635.3 1260.8,639.9 1265.6,632.7 1268.0,635.6 1271.2,639.5 1274.4,632.9 1276.0,635.6 1280.0,640.4 1284.0,632.2 1288.0,635.2 1300.0,635.4 1305.6,640.2 1311.2,632.2 1316.0,636.1 1320.8,638.4 1325.6,633.5 1328.0,635.7 1332.0,640.1 1336.0,632.1 1340.0,635.5 1344.0,639.2 1348.0,632.7 1352.0,635.1 1357.6,637.7 1363.2,633.7 1368.0,635.0 1373.6,638.6 1379.2,633.0 1384.0,635.5 1389.6,638.5 1395.2,632.9 1400.0,635.0 1404.0,638.6 1408.0,632.8 1412.0,635.6 1417.6,637.3 1423.2,633.7 1428.0,635.2 1434.4,638.7 1440.8,632.5 1444.0,634.9 1450.4,639.7 1456.8,631.7 1460.0,635.0 1464.0,638.2 1472.0,635.7 1476.0,637.5 1480.0,633.2 1484.0,635.5 1488.8,637.8 1493.6,632.9 1496.0,634.9 1500.8,638.5 1508.0,635.1 1512.8,638.8 1517.6,632.0 1520.0,635.0 1524.0,638.6 1528.0,632.1 1532.0,634.9 1536.8,636.9 1541.6,633.3 1544.0,634.4 1547.2,637.2 1550.4,633.0 1552.0,634.6 1557.6,638.5 1563.2,631.9 1568.0,634.3 1572.0,639.2 1576.0,631.3 1580.0,634.6 1583.2,638.0 1586.4,632.2 1588.0,634.7 1593.6,638.1 1599.2,632.0 1604.0,634.3 1610.4,636.7 1616.8,633.0 1620.0,634.1 1624.0,637.8 1628.0,632.1 1632.0,634.9 1636.0,637.6 1640.0,632.1 1644.0,634.7 1648.8,638.5 1653.6,631.4 1656.0,634.7 1660.8,638.1 1665.6,631.7 1668.0,634.3 1672.8,638.1 1677.6,631.5 1680.0,634.4 1683.2,636.8 1686.4,632.5 1688.0,634.2 1692.0,636.2 1696.0,632.9 1700.0,634.7 1705.6,637.3 1711.2,632.0 1716.0,634.1 1720.8,636.7 1725.6,632.3 1728.0,634.2 1732.8,636.8 1737.6,632.1 1740.0,634.5 1745.6,638.0 1751.2,631.2 1756.0,634.3 1760.8,637.2 1765.6,631.7 1768.0,633.6 1774.4,637.2 1780.8,631.5 1784.0,632.9 1788.0,637.5 1792.0,629.4 1796.0,632.5 1802.4,635.2 1808.8,628.0 1812.0,629.7 1818.4,632.4 1824.8,626.9 1828.0,628.9 1832.8,632.1 1837.6,624.5 1840.0,627.9 1846.4,629.4 1852.8,623.7 1856.0,625.8 1860.0,629.7 1864.0,621.0 1868.0,624.7 1872.8,627.1 1877.6,620.4" fill="none" stroke="#e6e6e6" stroke-width="1.0" shape-rendering="crispEdges"/>
<polyline points="632.0,604.0 636.0,604.5 640.0,605.1 644.0,606.5 648.0,606.0 652.0,606.5 656.0,607.3 660.0,608.7 664.0,607.3 668.0,608.8 672.0,608.6 676.0,609.9 680.0,611.0 684.0,611.0 688.0,610.7 692.0,612.4 696.0,612.3 700.0,612.3 704.0,613.4 708.0,613.8 712.0,616.0 716.0,618.7 720.0,619.1 724.0,622.2 728.0,624.3 732.0,626.5 736.0,628.3 740.0,629.9 744.0,630.7 748.0,630.7 752.0,630.0 756.0,631.2 760.0,632.4 764.0,631.5 768.0,632.0 772.0,632.7 776.0,634.0 780.0,635.0 784.0,636.9 788.0,637.1 792.0,638.9 796.0,639.8 800.0,640.4 804.0,640.4 808.0,642.1 812.0,643.2 816.0,643.6 820.0,645.5 824.0,646.0 828.0,648.1 832.0,648.8 836.0,648.7 840.0,649.1 844.0,650.2 848.0,651.4 852.0,650.9 856.0,650.1 860.0,652.1 864.0,651.8 868.0,652.5 872.0,653.0 876.0,654.7 880.0,654.6 884.0,656.0 888.0,658.0 892.0,658.4 896.0,659.5 900.0,659.7 904.0,661.7 908.0,662.7 912.8,660.6 920.0,664.7 923.2,661.5 926.4,667.4 928.0,664.5 932.0,660.4 936.0,668.5 940.0,664.5 944.0,663.0 948.0,666.6 952.0,665.3 955.2,663.0 958.4,666.7 960.0,664.8 965.6,662.0 971.2,667.5 976.0,665.7 980.8,661.8 985.6,667.7 988.0,665.0 992.8,663.2 1000.0,665.8 1006.4,663.1 1012.8,667.0 1016.0,664.8 1022.4,661.7 1028.8,668.1 1032.0,664.9 1044.0,665.2 1049.6,662.0 1055.2,668.1 1060.0,665.2 1064.8,661.7 1069.6,668.4 1072.0,665.5 1076.0,661.9 1080.0,668.3 1084.0,665.4 1087.2,663.1 1090.4,667.4 1092.0,665.1 1096.8,663.6 1101.6,667.1 1104.0,665.2 1107.2,662.0 1112.0,665.6 1115.2,663.7 1118.4,667.2 1120.0,665.5 1132.0,665.1 1136.0,662.6 1140.0,668.2 1144.0,665.3 1148.0,661.9 1152.0,668.7 1156.0,666.2 1161.6,661.1 1172.0,665.8 1178.4,663.1 1184.8,668.1 1188.0,666.3 1192.0,663.6 1196.0,667.8 1200.0,665.6 1203.2,662.8 1206.4,668.4 1208.0,666.1 1213.6,661.5 1219.2,669.3 1224.0,666.2 1228.8,662.7 1233.6,668.4 1236.0,665.6 1240.0,663.8 1244.0,667.5 1248.0,666.3 1252.8,661.6 1257.6,669.1 1260.0,665.6 1264.0,663.0 1268.0,668.1 1272.0,665.4 1278.4,663.1 1284.8,667.9 1288.0,665.9 1292.8,661.3 1297.6,669.2 1300.0,665.9 1304.0,662.0 1308.0,668.7 1312.0,665.3 1317.6,661.7 1323.2,668.8 1328.0,665.8 1332.8,661.8 1337.6,668.8 1340.0,665.9 1345.6,663.1 1351.2,667.7 1356.0,666.1 1362.4,663.5 1368.8,667.3 1372.0,665.0 1376.8,661.0 1381.6,669.2 1384.0,665.4 1388.0,661.9 1392.0,668.5 1396.0,665.4 1400.8,662.0 1405.6,668.4 1408.0,665.1 1412.8,663.2 1420.0,665.7 1423.2,663.2 1426.4,667.4 1428.0,666.2 1433.6,662.6 1439.2,667.9 1444.0,665.2 1448.0,663.4 1452.0,667.2 1456.0,666.0 1460.0,662.6 1464.0,667.8 1468.0,665.8 1472.8,663.2 1477.6,667.3 1480.0,666.2 1484.8,663.4 1489.6,667.1 1492.0,665.7 1496.8,662.1 1501.6,668.0 1504.0,665.9 1509.6,662.3 1515.2,667.8 1520.0,665.7 1524.0,661.5 1528.0,668.4 1532.0,665.7 1536.0,661.3 1540.0,668.5 1544.0,665.9 1548.0,662.1 1552.0,667.8 1556.0,665.3 1562.4,660.8 1568.8,668.8 1572.0,666.0 1576.0,661.4 1580.0,668.3 1584.0,665.5 1590.4,662.1 1596.8,667.7 1600.0,665.5 1605.6,662.0 1611.2,667.8 1616.0,664.7 1619.2,661.0 1622.4,668.5 1624.0,665.0 1628.0,661.2 1632.0,668.3 1636.0,665.3 1648.0,665.9 1654.4,661.3 1660.8,668.2 1664.0,665.0 1668.8,660.7 1673.6,668.5 1676.0,664.5 1680.8,661.8 1685.6,667.7 1688.0,665.6 1692.0,662.4 1696.0,667.2 1700.0,665.7 1705.6,661.8 1711.2,667.6 1716.0,664.4 1720.8,662.2 1725.6,667.3 1728.0,664.7 1732.0,662.4 1740.0,665.2 1746.4,662.3 1752.8,667.1 1756.0,664.4 1759.2,661.3 1762.4,667.8 1764.0,665.4 1770.4,661.9 1776.8,667.4 1780.0,664.6 1786.4,661.5 1792.8,665.8 1796.0,663.0 1801.6,660.9 1812.0,661.2 1817.6,659.0 1823.2,662.2 1828.0,660.7 1832.8,655.1 1837.6,662.5 1840.0,658.8 1844.8,655.7 1852.0,658.3 1855.2,654.5 1858.4,659.1 1860.0,657.5 1864.0,654.3 1868.0,657.6 1872.0,655.8 1876.8,650.4 1881.6,658.6" fill="none" stroke="#e6e6e6" stroke-width="1.0" shape-rendering="crispEdges"/>
<polyline points="56.0,646.8 56.6,646.8 60.0,646.3 64.0,645.6 68.0,645.0 72.0,644.3 76.0,643.7 80.0,643.0 84.0,642.4 88.0,641.7 92.0,641.1 92.5,641.0 96.0,620.0 99.4,636.4 100.0,636.4 104.0,636.0 108.0,635.7 112.0,635.4 116.0,635.1 120.0,634.8 124.0,634.5 128.0,634.2 132.0,633.9 136.0,633.6 140.0,633.3 143.4,633.0 144.0,630.7 148.0,615.6 152.0,625.7 152.6,627.2 156.0,626.9 160.0,626.6 164.0,626.3 168.0,626.0 172.0,625.7 176.0,625.4 180.0,625.1 184.0,624.8 188.0,624.5 192.0,624.2 196.0,623.9 200.0,623.6 204.0,623.3 208.0,623.0 212.0,622.7 216.0,622.4 220.0,622.1 224.0,621.8 228.0,621.5 232.0,621.2 236.0,620.9 240.0,620.6 244.0,620.3 245.1,620.2 248.0,613.0 249.7,608.7 252.0,612.5 256.0,619.2 256.6,620.2 260.0,620.0 264.0,619.8 268.0,619.6 272.0,619.3 276.0,619.1 280.0,618.9 284.0,618.7 288.0,618.4 292.0,618.2 296.0,618.0 300.0,617.7 304.0,617.5 308.0,617.3 312.0,617.1 316.0,616.8 320.0,616.6 324.0,616.4 328.0,616.2 332.0,615.9 336.0,615.7 340.0,615.5 344.0,615.3 348.0,615.0 352.0,614.8 356.0,614.6 360.0,614.4 364.0,614.1 368.0,613.9 372.0,613.7 376.0,613.5 380.0,613.2 384.0,613.0 388.0,612.8 392.0,612.6 396.0,612.3 400.0,612.1 404.0,612.0 408.0,611.9 412.0,611.8 416.0,611.7 420.0,611.6 424.0,611.5 428.0,611.4 432.0,611.3 436.0,611.2 440.0,611.0 444.0,610.9 448.0,610.8 452.0,610.7 456.0,610.6 460.0,610.5 464.0,610.4 468.0,610.3 472.0,610.2 476.0,610.1 480.0,610.0 484.0,609.9 488.0,609.8 492.0,609.7 496.0,609.6 500.0,609.5 504.0,609.4 508.0,609.3 512.0,609.2 516.0,609.1 518.0,609.0 520.0,604.3 521.0,602.0 524.0,602.0 528.0,602.0 532.0,602.0 536.0,602.0 540.0,602.0 544.0,602.0 548.0,602.0 552.0,602.0 556.0,602.0 560.0,602.0 564.0,602.1 568.0,602.2 572.0,602.3 576.0,602.4 580.0,602.5 584.0,602.6 588.0,602.7 592.0,602.8 596.0,602.9 600.0,603.0 604.0,603.3 608.0,603.7 612.0,604.0 616.0,604.4 620.0,604.7 624.0,605.1 628.0,605.4 632.0,605.8 636.0,606.1 640.0,606.5 644.0,607.2 648.0,607.5 652.0,607.6 656.0,609.2 660.0,611.0 664.0,612.9 668.0,615.3 672.0,618.1 676.0,619.2 680.0,621.8 684.0,622.4 688.0,623.5 692.0,625.0 696.0,626.7 700.0,627.4 704.0,630.0 708.0,630.5 712.0,631.0 716.0,632.4 720.0,635.8 724.0,638.0 728.0,640.2 732.0,643.9 736.0,645.3 740.0,649.8 744.0,651.1 748.0,651.5 752.0,651.2 756.0,652.9 760.0,654.7 764.0,655.2 768.0,655.4 772.0,656.4 776.0,657.0 780.0,658.8 784.0,659.2 788.0,660.7 792.0,662.6 796.0,663.6 800.0,663.8 804.0,664.3 810.4,663.4 816.8,670.7 820.0,669.5 823.2,666.6 826.4,671.4 828.0,669.3 832.0,664.6 836.0,672.7 840.0,668.4 844.0,665.8 848.0,671.0 852.0,667.9 857.6,665.5 863.2,670.5 868.0,667.8 872.8,664.3 877.6,670.7 880.0,668.2 884.0,663.6 888.0,670.8 892.0,667.6 895.2,664.8 898.4,669.1 900.0,666.5 904.8,663.3 912.0,666.3 916.0,664.8 924.0,666.5 928.0,663.9 932.0,669.4 936.0,667.3 940.8,664.3 945.6,668.8 948.0,666.8 954.4,664.2 960.8,668.7 964.0,666.2 968.0,664.3 976.0,666.4 992.0,666.9 996.8,662.3 1004.0,666.3 1008.8,662.2 1013.6,667.5 1016.0,666.3 1022.4,664.2 1032.0,666.4 1044.0,665.6 1060.0,666.3 1072.0,665.2 1080.0,665.8 1086.4,662.1 1092.8,666.6 1096.0,665.7 1108.0,665.3 1120.0,665.5 1124.8,662.2 1132.0,665.4 1140.0,665.5 1152.0,664.4 1156.0,662.9 1164.0,664.3 1168.8,661.3 1176.0,664.8 1180.0,661.8 1188.0,665.0 1192.0,664.8 1196.0,664.2 1200.0,665.1 1204.0,664.6 1208.0,664.9 1212.0,664.7 1216.0,664.7 1220.0,664.7 1224.0,664.1 1228.0,664.2 1232.0,664.9 1236.0,664.4 1240.0,664.2 1244.0,665.0 1248.0,664.9 1252.0,664.9 1256.0,664.5 1260.0,664.2 1264.0,664.9 1268.0,664.3 1272.0,664.8 1276.0,664.8 1280.0,664.3 1284.0,664.0 1288.0,664.7 1292.0,664.9 1296.0,664.7 1300.0,665.2 1304.0,664.3 1308.0,664.9 1312.0,664.5 1316.0,664.7 1320.0,664.4 1324.0,664.3 1328.0,664.7 1332.0,664.7 1336.0,665.1 1340.0,664.7 1344.0,664.6 1348.0,664.8 1353.6,660.5 1359.2,666.1 1364.0,664.2 1367.2,662.8 1372.0,664.6 1377.6,661.7 1383.2,665.9 1388.0,665.1 1394.4,661.0 1404.0,665.4 1409.6,661.7 1420.0,665.3 1432.0,664.8 1444.0,664.9 1460.0,664.6 1463.2,662.3 1468.0,665.2 1476.0,665.2 1479.2,660.8 1484.0,664.8 1488.0,661.8 1496.0,665.8 1504.0,665.2 1509.6,663.4 1520.0,666.0 1524.8,661.9 1532.0,665.0 1536.0,662.5 1544.0,665.5 1549.6,663.0 1555.2,666.4 1560.0,665.1 1564.8,661.4 1572.0,665.7 1580.0,666.3 1585.6,663.0 1596.0,666.2 1608.0,659.4 1612.0,659.4 1616.0,657.1 1620.0,655.9 1624.0,654.4 1628.0,652.7 1632.0,651.2 1636.0,651.5 1640.0,650.4 1644.0,649.0 1648.0,647.6 1652.0,646.8 1656.0,647.0 1660.0,644.3 1664.0,641.4 1668.0,640.6 1672.0,638.2 1676.0,634.2 1680.0,631.8 1684.0,630.5 1688.0,627.4 1692.0,625.1 1696.0,623.2 1700.0,619.9 1704.0,618.2 1708.0,615.0 1712.0,612.6 1716.0,612.1 1720.0,611.1 1724.0,611.2 1728.0,608.9 1732.0,609.8 1736.0,608.2 1740.0,608.1 1744.0,607.4 1748.0,607.6 1752.0,608.7 1756.0,607.2 1760.0,607.9 1764.0,607.9 1768.0,607.1 1772.0,605.9 1776.0,606.1 1780.0,605.4 1784.0,605.3 1788.0,605.2 1792.0,604.6 1796.0,605.4 1800.0,604.8 1804.0,604.1 1808.0,602.7 1812.0,600.7 1816.0,599.1 1820.0,599.9 1824.0,599.4 1828.0,600.6 1832.0,600.3 1836.0,601.5 1840.0,600.7 1844.0,602.2 1848.0,602.6 1852.0,602.8 1856.0,601.6 1860.0,603.2 1864.0,602.5 1868.0,603.6 1872.0,603.0 1876.0,603.4" fill="none" stroke="#ff6ed2" stroke-width="1.0" shape-rendering="crispEdges"/>
<polyline points="56.0,605.5 56.6,605.5 60.0,601.3 62.4,598.4 64.0,598.0 68.0,597.0 69.4,596.6 72.0,596.6 76.0,596.6 80.0,596.6 84.0,596.6 88.0,596.6 92.0,596.6 92.5,596.6 94.8,606.0 96.0,614.0 98.3,604.7 100.0,601.5 101.7,598.4 104.0,598.1 108.0,597.7 111.0,597.3 112.0,597.2 116.0,596.8 120.0,596.3 124.0,595.9 128.0,595.5 132.0,595.0 136.0,594.6 140.0,594.2 143.4,593.8 144.0,595.3 145.7,599.7 148.0,604.0 151.4,596.1 152.0,596.0 156.0,595.3 160.0,594.6 161.8,594.3 164.0,594.2 168.0,593.9 172.0,593.7 176.0,593.4 180.0,593.2 184.0,592.9 188.0,592.7 192.0,592.5 196.0,592.2 200.0,592.0 204.0,591.7 208.0,591.5 212.0,591.2 216.0,591.0 220.0,590.7 224.0,590.5 228.0,590.2 232.0,590.0 236.0,589.8 240.0,589.5 244.0,589.3 245.1,589.2 248.0,594.1 248.6,595.1 250.9,601.0 252.0,597.5 254.3,590.3 256.0,590.3 260.0,590.3 264.0,590.3 268.0,590.3 272.0,590.3 276.0,590.3 277.5,590.3 280.0,590.1 284.0,589.8 288.0,589.5 292.0,589.3 296.0,589.0 300.0,588.7 304.0,588.4 308.0,588.1 312.0,587.8 316.0,587.5 320.0,587.2 324.0,587.0 328.0,586.7 332.0,586.4 336.0,586.1 340.0,585.8 344.0,585.5 348.0,585.2 352.0,584.9 356.0,584.7 360.0,584.4 364.0,584.1 368.0,583.8 372.0,583.5 376.0,583.2 380.0,582.9 384.0,582.6 388.0,582.4 392.0,582.1 396.0,581.8 400.0,581.5 404.0,581.3 408.0,581.2 412.0,581.0 416.0,580.8 420.0,580.7 424.0,580.5 428.0,580.3 432.0,580.1 436.0,580.0 440.0,579.8 444.0,579.6 448.0,579.5 452.0,579.3 456.0,579.1 460.0,579.0 464.0,578.8 468.0,578.6 472.0,578.4 476.0,578.3 480.0,578.1 484.0,577.9 488.0,577.8 492.0,577.6 496.0,577.4 500.0,577.3 504.0,577.1 508.0,576.9 512.0,576.8 516.0,576.6 518.0,576.5 520.0,578.8 522.0,580.5 524.0,580.7 530.4,583.8 536.8,579.7 540.0,581.6 543.2,583.9 546.4,580.7 548.0,582.5 551.2,585.1 554.4,580.4 556.0,583.5 560.8,585.3 565.6,581.1 568.0,583.6 572.8,585.2 577.6,581.7 580.0,583.5 585.6,586.0 596.0,584.5 608.0,584.2 611.2,586.2 614.4,582.8 616.0,584.9 620.0,587.6 624.0,582.1 628.0,584.7 633.6,586.4 639.2,584.1 644.0,585.1 650.4,587.9 656.8,585.6 660.0,589.8 664.0,591.3 668.0,592.1 672.0,594.3 676.0,597.5 680.0,598.3 684.0,599.7 688.0,602.7 692.0,604.0 696.0,603.7 700.0,606.8 704.0,606.9 708.0,609.2 712.0,609.8 716.0,610.7 720.0,612.4 724.0,615.6 728.0,619.3 732.0,621.2 736.0,623.5 740.0,627.4 744.0,627.4 748.0,628.9 752.0,630.5 756.0,631.8 760.0,632.5 764.0,633.4 768.0,634.3 772.0,635.8 776.0,636.2 780.0,636.2 784.0,638.6 788.0,638.2 792.0,638.4 796.0,640.5 800.0,641.0 804.0,640.8 808.0,642.6 812.0,642.3 816.0,643.0 820.0,645.0 824.0,640.1 828.0,642.4 832.0,643.8 836.0,639.6 840.0,641.3 844.8,644.1 849.6,637.6 852.0,640.9 856.0,642.4 860.0,637.7 864.0,639.4 868.0,642.4 872.0,636.1 876.0,639.2 880.0,641.6 884.0,635.2 888.0,638.2 894.4,639.7 904.0,637.1 908.0,641.3 916.0,636.2 920.8,640.2 925.6,633.3 928.0,636.8 933.6,640.7 939.2,632.5 944.0,636.5 948.0,638.2 956.0,635.6 962.4,640.3 968.8,632.0 972.0,635.3 976.0,637.7 984.0,635.0 989.6,639.4 995.2,634.0 1000.0,635.0 1004.0,638.3 1012.0,635.1 1028.0,634.8 1034.4,637.6 1044.0,635.0 1048.8,639.0 1053.6,632.9 1056.0,634.2 1072.0,633.5 1084.0,633.4 1089.6,636.2 1100.0,634.2 1112.0,633.1 1116.0,636.4 1124.0,633.8 1128.0,635.6 1136.0,633.3 1141.6,637.3 1152.0,633.5 1158.4,635.9 1168.0,632.6 1172.0,636.9 1176.0,630.8 1180.0,632.2 1183.2,636.2 1188.0,632.0 1192.0,631.7 1196.0,631.9 1200.0,631.6 1204.0,632.4 1208.0,632.6 1212.0,631.9 1216.0,631.7 1220.0,632.4 1224.0,632.4 1228.0,631.6 1232.0,631.7 1236.0,631.9 1240.0,631.5 1244.0,631.6 1248.0,631.8 1252.0,631.4 1256.0,631.5 1260.0,632.0 1264.0,631.6 1268.0,632.4 1272.0,632.4 1276.0,632.0 1280.0,631.6 1284.0,632.1 1288.0,631.6 1292.0,632.2 1296.0,631.7 1300.0,632.0 1304.0,632.1 1308.0,632.0 1312.0,632.1 1316.0,631.6 1320.0,631.3 1324.0,631.6 1328.0,632.3 1332.0,631.2 1336.0,631.4 1340.0,631.5 1344.0,631.7 1348.0,631.2 1354.4,635.2 1360.8,630.8 1364.0,631.9 1376.0,632.0 1381.6,635.6 1392.0,632.6 1408.0,632.9 1411.2,635.3 1416.0,632.1 1424.0,633.0 1430.4,635.2 1440.0,633.2 1444.8,635.7 1449.6,632.0 1452.0,632.5 1464.0,633.7 1476.0,633.2 1480.0,635.6 1484.0,632.5 1488.0,633.4 1493.6,637.5 1504.0,634.1 1509.6,636.0 1520.0,634.2 1526.4,637.6 1536.0,633.7 1540.0,636.4 1548.0,633.6 1552.8,638.3 1560.0,634.4 1564.0,637.3 1572.0,633.7 1576.8,637.9 1581.6,633.2 1584.0,634.0 1592.0,635.1 1604.0,629.8 1608.0,629.0 1612.0,625.8 1616.0,624.7 1620.0,623.8 1624.0,623.6 1628.0,622.7 1632.0,621.6 1636.0,621.0 1640.0,621.3 1644.0,620.8 1648.0,619.5 1652.0,618.8 1656.0,617.8 1660.0,617.1 1664.0,615.3 1668.0,612.2 1672.0,610.8 1676.0,607.4 1680.0,604.7 1684.0,603.3 1688.0,601.1 1692.0,597.5 1696.0,596.1 1700.0,594.0 1704.0,591.5 1708.0,592.1 1712.0,589.8 1716.0,590.7 1720.0,588.5 1724.0,588.2 1728.0,588.1 1732.0,586.8 1736.0,586.0 1740.0,586.2 1744.0,586.2 1748.0,584.7 1752.0,584.9 1756.0,585.4 1760.0,584.3 1764.0,584.3 1768.0,583.3 1772.0,583.8 1776.0,584.0 1780.0,583.2 1784.0,582.5 1788.0,582.2 1792.0,581.4 1796.0,581.2 1800.0,582.5 1804.0,584.8 1808.0,587.8 1812.0,589.4 1816.0,589.2 1820.0,589.5 1824.0,590.2 1828.0,591.1 1832.0,590.9 1836.0,589.5 1840.0,589.7 1844.0,591.0 1848.0,590.4 1852.0,590.3 1856.0,590.5 1860.0,590.0 1864.0,591.3 1868.0,590.8 1872.0,591.4 1876.0,591.6" fill="none" stroke="#2ef0e0" stroke-width="1.0" shape-rendering="crispEdges"/>
<polyline points="56.0,648.0 56.6,648.0 60.0,649.7 60.1,649.8 64.0,649.6 68.0,649.5 72.0,649.3 76.0,649.1 76.3,649.1 80.0,647.8 84.0,646.4 88.0,645.0 92.0,643.6 92.5,643.4 94.8,638.7 96.0,619.0 98.3,645.7 100.0,640.5 100.6,638.7 102.9,644.5 104.0,641.8 105.2,638.9 108.0,641.5 108.7,642.2 112.0,638.9 113.3,637.6 116.0,637.4 120.0,637.1 124.0,636.8 128.0,636.5 132.0,636.2 136.0,635.9 140.0,635.6 143.4,635.3 144.0,631.4 145.7,620.2 148.0,613.3 151.4,629.5 152.0,630.1 154.9,633.0 156.0,632.4 159.5,630.6 160.0,630.9 164.0,632.9 166.5,634.1 168.0,633.9 172.0,633.4 176.0,632.8 180.0,632.3 184.0,631.8 188.0,631.3 192.0,630.7 196.0,630.2 200.0,629.7 204.0,629.1 208.0,628.6 212.0,628.1 216.0,627.6 220.0,627.0 224.0,626.5 228.0,626.0 232.0,625.4 236.0,624.9 240.0,624.4 244.0,623.8 245.1,623.7 248.0,611.3 248.6,608.7 252.0,615.6 256.0,624.6 256.6,626.0 260.0,624.3 261.3,623.7 264.0,623.9 268.0,624.2 272.0,624.5 276.0,624.8 277.5,624.9 280.0,624.7 284.0,624.5 288.0,624.2 292.0,623.9 296.0,623.7 300.0,623.4 304.0,623.1 308.0,622.9 312.0,622.6 316.0,622.4 320.0,622.1 324.0,621.8 328.0,621.6 332.0,621.3 336.0,621.0 340.0,620.8 344.0,620.5 348.0,620.2 352.0,620.0 356.0,619.7 360.0,619.4 364.0,619.2 368.0,618.9 372.0,618.7 376.0,618.4 380.0,618.1 384.0,617.9 388.0,617.6 392.0,617.3 396.0,617.1 400.0,616.8 404.0,616.6 408.0,616.4 412.0,616.2 416.0,616.0 420.0,615.8 424.0,615.6 428.0,615.4 432.0,615.2 436.0,615.0 440.0,614.8 444.0,614.6 448.0,614.4 452.0,614.2 456.0,614.0 460.0,613.9 464.0,613.7 468.0,613.5 472.0,613.3 476.0,613.1 480.0,612.9 484.0,612.7 488.0,612.5 492.0,612.3 496.0,612.1 500.0,611.9 504.0,611.7 508.0,611.5 512.0,611.3 516.0,611.1 518.0,611.0 520.0,606.7 521.0,604.5 524.0,604.5 528.0,604.4 532.0,604.4 536.0,604.3 540.0,604.3 544.0,604.2 548.0,604.2 552.0,604.1 556.0,604.0 560.0,604.0 564.0,603.9 568.0,603.9 572.0,603.8 576.0,603.8 580.0,603.7 584.0,603.7 588.0,603.6 592.0,603.6 596.0,603.5 600.0,603.5 604.0,603.4 608.0,603.4 612.0,603.3 616.0,603.3 620.0,603.2 624.0,603.2 628.0,603.1 632.0,603.1 636.0,603.0 640.0,601.9 644.0,599.5 648.0,598.8 652.0,598.2 656.0,596.6 660.0,595.5 664.0,592.9 668.0,591.7 672.0,589.4 676.0,588.1 680.0,586.8 684.0,585.2 688.0,582.0 692.0,580.8 696.0,578.6 700.0,578.3 704.0,576.1 708.0,574.0 712.0,572.8 716.0,571.6 720.0,569.6 724.0,567.7 728.0,566.1 732.0,564.6 736.0,563.1 740.0,562.1 744.0,560.9 748.0,559.4 752.0,558.2 756.0,556.5 760.0,553.9 764.0,553.4 768.0,551.3 772.0,551.1 776.0,549.1 780.0,547.4 784.0,547.0 788.0,546.1 792.0,545.9 796.0,545.2 800.0,544.0 804.0,543.7 809.6,540.9 815.2,548.7 820.0,546.4 824.0,542.3 828.0,550.1 832.0,546.4 836.0,544.3 840.0,548.4 844.0,546.6 850.4,544.5 856.8,548.4 860.0,547.0 863.2,544.4 866.4,548.5 868.0,546.5 872.0,543.5 876.0,549.4 880.0,546.0 884.0,543.0 888.0,550.0 892.0,547.0 896.8,543.5 901.6,549.7 904.0,546.1 908.8,544.1 913.6,549.2 916.0,546.2 919.2,542.5 922.4,550.7 924.0,546.6 929.6,543.2 935.2,550.2 940.0,547.0 945.6,544.9 951.2,548.8 956.0,547.2 960.0,543.4 964.0,550.2 968.0,547.3 980.0,547.7 984.8,543.1 989.6,548.5 992.0,547.0 995.2,543.3 998.4,548.5 1000.0,547.3 1004.8,543.3 1012.0,547.3 1016.0,542.7 1024.0,546.9 1028.0,543.4 1036.0,547.8 1052.0,547.5 1064.0,547.3 1072.0,547.4 1076.0,544.0 1084.0,547.7 1096.0,548.1 1100.8,544.5 1105.6,548.7 1108.0,547.1 1112.8,544.2 1120.0,547.5 1124.8,543.9 1132.0,548.0 1148.0,547.1 1151.2,545.3 1154.4,548.7 1156.0,547.5 1168.0,547.3 1184.0,548.3 1188.0,545.4 1196.0,548.2 1200.0,547.4 1204.0,547.6 1208.0,548.0 1212.0,548.6 1216.0,547.7 1220.0,547.8 1224.0,547.8 1228.0,548.5 1232.0,548.4 1236.0,548.2 1240.0,548.6 1244.0,547.8 1248.0,547.7 1252.0,548.5 1256.0,548.8 1260.0,547.7 1264.0,548.7 1268.0,548.8 1272.0,547.8 1276.0,548.1 1280.0,548.7 1284.0,547.8 1288.0,548.8 1292.0,548.2 1296.0,548.2 1300.0,548.8 1304.0,548.5 1308.0,547.9 1312.0,548.1 1316.0,548.3 1320.0,548.2 1324.0,548.0 1328.0,548.6 1332.0,549.1 1336.0,548.2 1340.0,548.9 1344.0,549.1 1348.0,549.2 1351.2,546.6 1356.0,548.1 1368.0,548.3 1374.4,546.1 1380.8,549.7 1384.0,548.4 1392.0,548.9 1400.0,549.4 1412.0,549.5 1418.4,546.7 1428.0,548.7 1444.0,549.0 1450.4,545.2 1456.8,550.4 1460.0,548.7 1472.0,549.4 1478.4,545.9 1488.0,548.7 1500.0,548.8 1503.2,545.3 1506.4,550.6 1508.0,549.4 1511.2,547.0 1516.0,549.0 1528.0,549.9 1532.0,545.0 1536.0,550.9 1540.0,549.4 1544.8,546.7 1549.6,550.4 1552.0,549.8 1557.6,545.4 1568.0,549.2 1576.0,549.8 1588.0,550.9 1593.6,549.2 1604.0,553.1 1608.0,555.2 1612.0,555.6 1616.0,556.5 1620.0,558.1 1624.0,557.9 1628.0,558.9 1632.0,560.4 1636.0,560.7 1640.0,562.7 1644.0,563.3 1648.0,563.7 1652.0,564.5 1656.0,565.6 1660.0,568.0 1664.0,570.9 1668.0,572.8 1672.0,575.1 1676.0,576.7 1680.0,579.3 1684.0,580.5 1688.0,582.8 1692.0,586.0 1696.0,586.9 1700.0,589.8 1704.0,591.6 1708.0,592.2 1712.0,594.8 1716.0,596.9 1720.0,598.8 1724.0,598.1 1728.0,599.3 1732.0,597.8 1736.0,599.8 1740.0,599.6 1744.0,600.1 1748.0,599.7 1752.0,600.2 1756.0,600.9 1760.0,600.0 1764.0,600.2 1768.0,601.6 1772.0,602.1 1776.0,601.0 1780.0,601.9 1784.0,602.1 1788.0,601.9 1792.0,603.3 1796.0,602.4 1800.0,603.6 1804.0,603.2 1808.0,601.2 1812.0,600.8 1816.0,597.3 1820.0,597.4 1824.0,597.4 1828.0,598.3 1832.0,597.8 1836.0,598.3 1840.0,600.0 1844.0,598.8 1848.0,599.9 1852.0,599.1 1856.0,598.9 1860.0,599.1 1864.0,599.5 1868.0,601.3 1872.0,600.5 1876.0,600.3" fill="none" stroke="#f00000" stroke-width="1.0" shape-rendering="crispEdges"/>
<polyline points="56.0,606.4 56.6,606.4 60.0,602.3 62.4,599.4 64.0,599.0 68.0,598.0 69.4,597.6 72.0,597.6 76.0,597.6 80.0,597.6 84.0,597.6 88.0,597.6 92.0,597.6 92.5,597.6 94.8,611.0 96.0,621.4 98.3,608.7 100.0,604.0 101.7,599.4 104.0,599.1 108.0,598.7 111.0,598.3 112.0,598.2 116.0,597.8 120.0,597.3 124.0,596.9 128.0,596.5 132.0,596.0 136.0,595.6 140.0,595.2 143.4,594.8 144.0,596.6 145.7,601.7 148.0,607.5 151.4,597.1 152.0,597.0 156.0,596.3 160.0,595.6 161.8,595.3 164.0,595.2 168.0,594.9 172.0,594.7 176.0,594.4 180.0,594.2 184.0,593.9 188.0,593.7 192.0,593.5 196.0,593.2 200.0,593.0 204.0,592.7 208.0,592.5 212.0,592.2 216.0,592.0 220.0,591.7 224.0,591.5 228.0,591.2 232.0,591.0 236.0,590.8 240.0,590.5 244.0,590.3 245.1,590.2 248.0,595.9 248.6,597.1 250.9,605.2 252.0,600.7 254.3,591.3 256.0,591.3 260.0,591.3 264.0,591.3 268.0,591.3 272.0,591.3 276.0,591.3 277.5,591.3 280.0,591.1 284.0,590.9 288.0,590.6 292.0,590.3 296.0,590.1 300.0,589.8 304.0,589.5 308.0,589.3 312.0,589.0 316.0,588.8 320.0,588.5 324.0,588.2 328.0,588.0 332.0,587.7 336.0,587.4 340.0,587.2 344.0,586.9 348.0,586.6 352.0,586.4 356.0,586.1 360.0,585.8 364.0,585.6 368.0,585.3 372.0,585.1 376.0,584.8 380.0,584.5 384.0,584.3 388.0,584.0 392.0,583.7 396.0,583.5 400.0,583.2 404.0,583.0 408.0,582.8 412.0,582.7 416.0,582.5 420.0,582.3 424.0,582.1 428.0,582.0 432.0,581.8 436.0,581.6 440.0,581.4 444.0,581.3 448.0,581.1 452.0,580.9 456.0,580.7 460.0,580.6 464.0,580.4 468.0,580.2 472.0,580.0 476.0,579.9 480.0,579.7 484.0,579.5 488.0,579.3 492.0,579.1 496.0,579.0 500.0,578.8 504.0,578.6 508.0,578.4 512.0,578.3 516.0,578.1 518.0,578.0 520.0,580.0 522.0,581.1 524.0,582.6 529.6,584.7 540.0,582.5 545.6,585.5 551.2,581.5 556.0,584.1 559.2,586.3 562.4,581.9 564.0,584.2 568.0,586.7 572.0,582.0 576.0,584.9 580.8,586.3 585.6,583.0 588.0,585.2 592.0,586.4 596.0,583.5 600.0,584.4 605.6,587.1 611.2,582.7 616.0,585.1 620.8,586.9 625.6,582.4 628.0,584.9 631.2,586.7 634.4,582.2 636.0,584.0 639.2,587.0 642.4,581.6 644.0,584.5 650.4,584.2 656.8,578.5 660.0,578.4 664.0,575.8 668.0,573.9 672.0,573.0 676.0,569.8 680.0,568.9 684.0,566.5 688.0,566.1 692.0,563.8 696.0,562.0 700.0,560.3 704.0,558.7 708.0,558.4 712.0,556.3 716.0,554.8 720.0,554.2 724.0,552.8 728.0,551.3 732.0,548.1 736.0,547.5 740.0,545.2 744.0,543.5 748.0,541.2 752.0,538.8 756.0,538.2 760.0,536.6 764.0,535.7 768.0,534.3 772.0,533.4 776.0,532.8 780.0,532.7 784.0,530.2 788.0,529.4 792.0,527.8 797.6,532.5 803.2,524.2 808.0,528.5 814.4,531.2 820.8,524.9 824.0,528.1 827.2,530.5 830.4,525.2 832.0,527.0 836.8,531.4 841.6,524.1 844.0,527.7 849.6,531.7 855.2,523.4 860.0,527.0 865.6,531.2 871.2,523.3 876.0,527.3 881.6,529.3 887.2,524.5 892.0,526.5 895.2,529.7 898.4,524.0 900.0,526.7 903.2,529.3 906.4,524.6 908.0,526.6 912.0,530.7 916.0,523.8 920.0,526.5 925.6,529.5 936.0,527.7 939.2,531.7 942.4,524.1 944.0,527.7 947.2,532.3 950.4,524.0 952.0,527.7 956.0,531.6 960.0,525.1 964.0,528.2 969.6,531.5 980.0,529.2 983.2,531.4 986.4,527.9 988.0,529.4 996.0,529.6 999.2,531.4 1004.0,529.4 1016.0,529.8 1028.0,529.7 1032.0,531.5 1040.0,529.8 1044.8,534.3 1052.0,530.6 1058.4,532.6 1064.8,529.4 1068.0,529.7 1080.0,531.2 1084.8,533.2 1092.0,530.6 1097.6,533.7 1108.0,531.4 1124.0,531.4 1128.0,533.9 1136.0,531.3 1140.0,535.1 1148.0,532.3 1152.8,535.9 1160.0,531.8 1172.0,532.0 1188.0,532.0 1192.0,532.3 1196.0,532.8 1200.0,532.4 1204.0,532.7 1208.0,532.2 1212.0,532.5 1216.0,533.1 1220.0,532.5 1224.0,532.2 1228.0,533.0 1232.0,533.1 1236.0,532.5 1240.0,532.7 1244.0,533.1 1248.0,533.0 1252.0,532.5 1256.0,532.4 1260.0,532.5 1264.0,532.3 1268.0,532.2 1272.0,532.2 1276.0,532.9 1280.0,532.5 1284.0,533.1 1288.0,532.4 1292.0,532.5 1296.0,532.7 1300.0,532.5 1304.0,532.3 1308.0,533.2 1312.0,533.1 1316.0,532.9 1320.0,533.2 1324.0,533.2 1328.0,532.2 1332.0,532.2 1336.0,532.3 1340.0,532.6 1344.0,532.3 1348.0,533.0 1356.0,533.1 1372.0,531.8 1376.8,535.7 1381.6,531.1 1384.0,531.6 1388.0,536.6 1396.0,531.8 1400.0,535.3 1408.0,531.4 1420.0,531.9 1428.0,531.9 1440.0,531.5 1452.0,531.2 1460.0,530.9 1468.0,531.5 1480.0,531.3 1485.6,534.0 1496.0,531.6 1501.6,533.9 1512.0,530.2 1516.0,534.8 1524.0,530.6 1528.8,534.4 1536.0,530.2 1541.6,534.6 1552.0,530.7 1556.0,533.0 1560.0,529.5 1564.0,530.1 1568.8,534.7 1576.0,530.9 1580.8,532.5 1585.6,529.3 1588.0,530.5 1600.0,532.5 1604.0,532.8 1608.0,536.4 1612.0,537.5 1616.0,539.1 1620.0,540.9 1624.0,542.4 1628.0,545.3 1632.0,546.3 1636.0,547.0 1640.0,546.2 1644.0,547.7 1648.0,548.8 1652.0,548.5 1656.0,550.7 1660.0,551.7 1664.0,552.3 1668.0,554.6 1672.0,557.2 1676.0,559.5 1680.0,561.6 1684.0,562.0 1688.0,565.0 1692.0,566.4 1696.0,567.8 1700.0,569.4 1704.0,571.0 1708.0,572.7 1712.0,575.4 1716.0,575.4 1720.0,575.9 1724.0,576.4 1728.0,576.3 1732.0,576.6 1736.0,577.0 1740.0,578.7 1744.0,577.9 1748.0,578.5 1752.0,578.6 1756.0,579.7 1760.0,579.7 1764.0,580.2 1768.0,580.3 1772.0,580.3 1776.0,580.8 1780.0,580.0 1784.0,580.7 1788.0,580.4 1792.0,581.8 1796.0,580.7 1800.0,582.4 1804.0,583.0 1808.0,585.8 1812.0,589.3 1816.0,589.1 1820.0,588.4 1824.0,588.4 1828.0,590.0 1832.0,588.8 1836.0,589.5 1840.0,590.2 1844.0,589.6 1848.0,589.7 1852.0,589.2 1856.0,590.9 1860.0,590.3 1864.0,590.6 1868.0,590.1 1872.0,590.9 1876.0,590.3" fill="none" stroke="#3c9aff" stroke-width="1.0" shape-rendering="crispEdges"/>
</g><g clip-path="url(#cc)">
<polyline points="52.0,753.4 55.0,753.6 58.0,753.8 61.0,753.9 64.0,753.9 67.0,754.0 70.0,754.2 73.0,754.2 76.0,754.4 79.0,754.3 82.0,754.6 85.0,754.6 88.0,754.7 91.0,754.8 94.0,754.7 97.0,754.8 100.0,754.9 103.0,755.2 106.0,755.2 109.0,755.3 112.0,755.4 115.0,755.6 118.0,755.7 121.0,755.6 124.0,755.8 127.0,755.8 130.0,756.1 133.0,756.0 136.0,756.3 139.0,756.3 142.0,756.2 145.0,756.6 148.0,756.4 151.0,756.7 154.0,756.7 157.0,756.7 160.0,757.0 163.0,757.1 166.0,757.2 169.0,757.3 172.0,757.3 175.0,757.3 178.0,757.6 181.0,757.5 184.0,757.7 187.0,757.6 190.0,757.8 193.0,758.0 196.0,758.0 199.0,758.1 202.0,758.2 205.0,758.2 208.0,758.5 211.0,758.5 214.0,758.5 217.0,758.7 220.0,758.9 223.0,759.0 226.0,759.0 229.0,759.0 232.0,759.2 235.0,759.3 238.0,759.4 241.0,759.6 244.0,759.5 247.0,759.7 248.0,759.6 250.0,759.6 253.0,759.7 256.0,759.7 259.0,759.7 262.0,759.7 265.0,760.0 268.0,759.9 271.0,759.9 274.0,760.0 277.0,759.9 280.0,760.1 283.0,760.1 286.0,760.1 289.0,760.0 292.0,760.0 295.0,760.1 298.0,760.3 301.0,760.1 304.0,760.3 307.0,760.3 310.0,760.3 313.0,760.3 316.0,760.5 319.0,760.6 322.0,760.6 325.0,760.5 328.0,760.7 331.0,760.6 334.0,760.5 337.0,760.5 340.0,760.6 343.0,760.6 346.0,760.7 349.0,760.8 352.0,760.7 355.0,760.7 358.0,760.8 361.0,760.9 364.0,761.0 367.0,761.1 370.0,761.1 373.0,760.9 376.0,761.1 379.0,761.0 382.0,761.1 385.0,761.2 388.0,761.1 391.0,761.2 394.0,761.2 397.0,761.4 400.0,761.2 403.0,761.4 406.0,761.3 409.0,761.3 412.0,761.5 415.0,761.7 418.0,761.7 421.0,761.6 424.0,761.8 427.0,761.8 430.0,761.9 433.0,761.9 436.0,761.9 439.0,762.2 442.0,762.0 445.0,762.0 448.0,762.2 451.0,762.2 454.0,762.3 457.0,762.4 460.0,762.3 463.0,762.6 466.0,762.6 469.0,762.5 472.0,762.6 475.0,762.6 478.0,762.8 481.0,762.9 484.0,763.0 487.0,762.9 490.0,763.1 493.0,763.2 496.0,763.1 499.0,763.1 500.0,763.1 502.0,763.3 505.0,763.1 508.0,763.3 511.0,763.4 514.0,763.2 517.0,763.3 520.0,763.3 523.0,763.4 526.0,763.6 529.0,763.6 532.0,763.5 535.0,763.4 538.0,763.6 541.0,763.6 544.0,763.6 547.0,763.8 550.0,763.7 553.0,763.7 556.0,763.9 559.0,764.0 562.0,763.7 565.0,763.9 568.0,764.0 571.0,763.9 574.0,763.9 577.0,764.2 580.0,764.4 583.0,764.7 586.0,765.0 589.0,765.1 592.0,765.2 595.0,765.6 598.0,765.8 601.0,765.9 604.0,766.1 607.0,766.3 610.0,766.4 613.0,766.7 616.0,767.0 619.0,767.1 622.0,767.5 625.0,768.0 628.0,768.3 631.0,768.7 634.0,769.1 637.0,769.5 640.0,769.8 643.0,770.3 646.0,770.7 649.0,770.8 652.0,772.0 655.0,773.3 658.0,775.0 661.0,776.4 664.0,777.9 667.0,779.3 670.0,780.8 673.0,782.2 676.0,783.7 679.0,785.2 682.0,786.7 685.0,788.4 688.0,789.7 691.0,791.1 694.0,792.5 697.0,793.7 700.0,795.0 703.0,796.5 706.0,797.6 709.0,799.1 712.0,800.7 715.0,802.5 718.0,804.5 721.0,806.5 724.0,808.3 727.0,810.5 730.0,812.4 733.0,814.3 736.0,816.3 739.0,817.9 742.0,819.6 745.0,821.0 748.0,822.5 751.0,824.1 754.0,825.3 757.0,825.7 760.0,826.3 763.0,826.6 766.0,827.3 769.0,827.7 772.0,829.0 775.0,830.3 778.0,831.7 781.0,833.0 784.0,834.2 787.0,835.5 790.0,837.0 793.0,837.5 796.0,838.3 799.0,839.0 802.0,839.6 805.0,840.1 808.0,840.1 811.0,839.8 814.0,839.3 817.0,838.8 820.0,838.4 823.0,837.9 826.0,837.3 829.0,837.0 832.0,836.3 835.0,836.3 838.0,836.5 841.0,836.5 844.0,836.8 847.0,836.9 850.0,837.0 853.0,837.2 856.0,837.3 859.0,837.5 862.0,837.7 865.0,837.8 868.0,837.9 871.0,837.7 874.0,837.7 877.0,837.5 880.0,837.2 883.0,837.0 886.0,836.9 889.0,836.6 892.0,836.4 895.0,836.3 898.0,836.1 901.0,836.1 904.0,835.9 907.0,835.9 910.0,835.8 913.0,835.8 916.0,835.6 919.0,835.6 922.0,835.4 925.0,835.6 928.0,835.5 931.0,835.4 934.0,835.4 937.0,835.2 940.0,835.4 943.0,835.2 946.0,835.2 949.0,835.1 952.0,835.2 955.0,835.2 958.0,835.0 961.0,835.0 964.0,834.9 967.0,834.9 970.0,834.9 973.0,834.9 976.0,834.6 979.0,834.7 982.0,834.8 985.0,834.5 988.0,834.6 991.0,834.5 994.0,834.4 997.0,834.4 1000.0,834.5 1003.0,834.2 1006.0,834.1 1009.0,834.0 1012.0,833.6 1015.0,833.5 1018.0,833.5 1021.0,833.3 1024.0,833.0 1027.0,833.1 1030.0,832.9 1033.0,832.7 1036.0,832.4 1039.0,832.5 1042.0,832.1 1045.0,832.2 1048.0,831.9 1051.0,831.8 1054.0,831.6 1057.0,831.4 1060.0,831.4 1063.0,831.1 1066.0,830.9 1069.0,830.9 1072.0,830.7 1075.0,830.4 1078.0,830.5 1081.0,830.4 1084.0,830.2 1087.0,830.1 1090.0,830.0 1093.0,830.2 1096.0,829.9 1099.0,830.0 1102.0,830.0 1105.0,830.0 1108.0,829.6 1111.0,829.8 1114.0,829.5 1117.0,829.4 1120.0,829.6 1123.0,829.3 1126.0,829.4 1129.0,829.4 1132.0,829.2 1135.0,829.1 1138.0,829.2 1141.0,829.0 1144.0,829.0 1147.0,828.9 1150.0,828.7 1153.0,828.5 1156.0,828.7 1159.0,828.6 1162.0,828.3 1165.0,828.4 1168.0,828.2 1171.0,828.1 1174.0,828.0 1177.0,827.9 1180.0,827.9 1183.0,827.9 1186.0,827.9 1189.0,827.9 1192.0,827.9 1195.0,827.9 1198.0,827.7 1201.0,827.9 1204.0,827.9 1207.0,827.7 1210.0,827.7 1213.0,827.9 1216.0,827.7 1219.0,827.9 1222.0,827.9 1225.0,827.8 1228.0,827.8 1231.0,827.7 1234.0,827.7 1237.0,827.9 1240.0,827.8 1243.0,827.7 1246.0,827.7 1249.0,827.7 1252.0,827.9 1255.0,827.7 1258.0,827.7 1261.0,827.9 1264.0,827.7 1267.0,827.7 1270.0,827.8 1273.0,827.8 1276.0,827.8 1279.0,827.8 1282.0,827.8 1285.0,827.7 1288.0,827.8 1291.0,827.9 1294.0,827.7 1297.0,827.8 1300.0,827.8 1303.0,827.8 1306.0,827.8 1309.0,827.8 1312.0,827.9 1315.0,827.7 1318.0,827.8 1321.0,827.9 1324.0,827.7 1327.0,827.9 1330.0,827.8 1333.0,827.8 1336.0,827.9 1339.0,827.7 1342.0,827.7 1345.0,827.9 1348.0,828.2 1351.0,828.1 1354.0,828.4 1357.0,828.4 1360.0,828.6 1363.0,828.7 1366.0,828.9 1369.0,829.0 1372.0,829.1 1375.0,829.3 1378.0,829.3 1381.0,829.8 1384.0,829.9 1387.0,830.1 1390.0,830.3 1393.0,830.4 1396.0,830.6 1399.0,831.0 1402.0,831.1 1405.0,831.3 1408.0,831.6 1411.0,831.8 1414.0,831.9 1417.0,832.1 1420.0,832.5 1423.0,832.5 1426.0,832.4 1429.0,832.1 1432.0,832.0 1435.0,832.1 1438.0,831.8 1441.0,831.6 1444.0,831.4 1447.0,831.3 1450.0,831.2 1453.0,831.5 1456.0,831.6 1459.0,831.6 1462.0,831.8 1465.0,831.9 1468.0,832.2 1471.0,832.1 1474.0,832.3 1477.0,832.4 1480.0,832.7 1483.0,832.9 1486.0,832.9 1489.0,833.1 1492.0,833.4 1495.0,833.3 1498.0,833.6 1501.0,833.4 1504.0,833.5 1507.0,833.2 1510.0,833.4 1513.0,833.3 1516.0,833.1 1519.0,833.0 1522.0,833.1 1525.0,832.8 1528.0,832.9 1531.0,832.8 1534.0,832.8 1537.0,832.6 1540.0,832.7 1543.0,832.5 1546.0,832.6 1549.0,832.6 1552.0,832.3 1555.0,832.3 1558.0,832.4 1561.0,832.3 1564.0,832.3 1567.0,832.0 1570.0,832.0 1573.0,832.0 1576.0,832.1 1579.0,831.9 1582.0,831.5 1585.0,831.1 1588.0,830.8 1591.0,830.4 1594.0,830.0 1597.0,829.6 1600.0,828.9 1603.0,828.0 1606.0,827.3 1609.0,826.7 1612.0,826.0 1615.0,825.0 1618.0,823.7 1621.0,822.2 1624.0,820.9 1627.0,819.6 1630.0,818.4 1633.0,817.1 1636.0,816.4 1639.0,815.5 1642.0,814.7 1645.0,814.2 1648.0,813.3 1651.0,812.6 1654.0,811.8 1657.0,811.0 1660.0,809.3 1663.0,808.0 1666.0,806.5 1669.0,804.9 1672.0,803.1 1675.0,801.5 1678.0,799.5 1681.0,797.9 1684.0,796.1 1687.0,794.3 1690.0,792.5 1693.0,790.7 1696.0,788.1 1699.0,785.1 1702.0,782.1 1705.0,780.0 1708.0,778.5 1711.0,776.8 1714.0,775.3 1717.0,774.0 1720.0,772.2 1723.0,771.5 1726.0,771.3 1729.0,771.0 1732.0,771.1 1735.0,771.0 1738.0,770.7 1741.0,770.7 1744.0,770.6 1747.0,770.5 1750.0,770.4 1753.0,770.4 1756.0,770.0 1759.0,769.9 1762.0,769.6 1765.0,769.3 1768.0,768.9 1771.0,768.5 1774.0,768.3 1777.0,768.0 1780.0,767.8 1783.0,767.3 1786.0,767.1 1789.0,766.7 1792.0,766.4 1795.0,766.2 1798.0,766.0 1801.0,765.7 1804.0,765.5 1807.0,765.5 1810.0,765.3 1813.0,765.4 1816.0,765.1 1819.0,765.0 1822.0,764.8 1825.0,764.9 1828.0,764.8 1831.0,764.8 1834.0,764.6 1837.0,764.6 1840.0,764.3 1843.0,764.4 1846.0,764.1 1849.0,764.0 1852.0,764.1 1855.0,763.8 1858.0,763.9 1861.0,763.9 1864.0,763.5 1867.0,763.5 1870.0,763.5 1873.0,763.5 1876.0,763.2" fill="none" stroke="#2ef0e0" stroke-width="1.0" shape-rendering="crispEdges"/>
<polyline points="52.0,753.1 55.0,753.1 58.0,753.4 61.0,753.3 64.0,753.6 67.0,753.6 70.0,753.9 73.0,753.9 76.0,754.0 79.0,754.3 82.0,754.4 85.0,754.6 88.0,754.6 91.0,754.9 94.0,754.9 97.0,755.1 100.0,755.3 103.0,755.5 106.0,755.6 109.0,755.7 112.0,755.8 115.0,756.1 118.0,756.2 121.0,756.2 124.0,756.3 127.0,756.7 130.0,756.7 133.0,757.0 136.0,757.0 139.0,757.1 142.0,757.3 145.0,757.6 148.0,757.7 151.0,757.8 154.0,758.0 157.0,758.2 160.0,758.3 163.0,758.4 166.0,758.5 169.0,758.7 172.0,758.7 175.0,759.0 178.0,759.2 181.0,759.3 184.0,759.5 187.0,759.5 190.0,759.7 193.0,759.6 196.0,760.0 199.0,759.9 202.0,760.3 205.0,760.4 208.0,760.6 211.0,760.7 214.0,760.7 217.0,760.9 220.0,761.1 223.0,761.3 226.0,761.4 229.0,761.5 232.0,761.7 235.0,761.9 238.0,762.0 241.0,762.0 244.0,762.3 247.0,762.4 248.0,762.3 250.0,762.4 253.0,762.4 256.0,762.6 259.0,762.5 262.0,762.7 265.0,762.7 268.0,762.7 271.0,762.9 274.0,763.0 277.0,762.8 280.0,763.1 283.0,763.0 286.0,763.2 289.0,763.3 292.0,763.2 295.0,763.4 298.0,763.2 301.0,763.4 304.0,763.5 307.0,763.6 310.0,763.5 313.0,763.5 316.0,763.6 319.0,763.6 322.0,763.8 325.0,763.9 328.0,763.9 331.0,764.0 334.0,763.9 337.0,764.1 340.0,764.2 343.0,764.2 346.0,764.1 349.0,764.2 352.0,764.3 355.0,764.3 358.0,764.5 361.0,764.4 364.0,764.4 367.0,764.7 370.0,764.7 373.0,764.8 376.0,764.7 379.0,764.7 382.0,764.7 385.0,765.0 388.0,764.8 391.0,764.9 394.0,765.1 397.0,765.1 400.0,765.1 403.0,765.2 406.0,765.4 409.0,765.3 412.0,765.5 415.0,765.5 418.0,765.6 421.0,765.8 424.0,765.8 427.0,765.9 430.0,766.0 433.0,765.8 436.0,765.9 439.0,766.2 442.0,766.2 445.0,766.3 448.0,766.5 451.0,766.3 454.0,766.5 457.0,766.7 460.0,766.7 463.0,766.6 466.0,766.7 469.0,767.0 472.0,767.0 475.0,767.0 478.0,767.2 481.0,767.2 484.0,767.3 487.0,767.2 490.0,767.4 493.0,767.4 496.0,767.4 499.0,767.6 500.0,767.6 502.0,767.6 505.0,767.7 508.0,767.9 511.0,768.1 514.0,768.3 517.0,768.3 520.0,768.5 523.0,768.4 526.0,768.4 529.0,768.6 532.0,768.9 535.0,768.8 538.0,769.1 541.0,769.3 544.0,769.3 547.0,769.1 550.0,769.0 553.0,769.2 556.0,768.9 559.0,768.8 562.0,769.0 565.0,769.1 568.0,769.0 571.0,768.9 574.0,768.7 577.0,768.8 580.0,768.7 583.0,768.8 586.0,768.6 589.0,768.6 592.0,768.7 595.0,768.6 598.0,768.4 601.0,768.4 604.0,767.8 607.0,767.6 610.0,767.0 613.0,766.8 616.0,766.3 619.0,766.1 622.0,765.6 625.0,765.1 628.0,764.9 631.0,764.4 634.0,764.0 637.0,763.7 640.0,763.2 643.0,762.8 646.0,762.3 649.0,761.9 652.0,760.9 655.0,759.6 658.0,758.1 661.0,756.5 664.0,755.0 667.0,753.4 670.0,752.2 673.0,750.5 676.0,748.5 679.0,746.8 682.0,744.9 685.0,742.9 688.0,741.0 691.0,739.2 694.0,737.7 697.0,736.4 700.0,735.0 703.0,733.9 706.0,732.5 709.0,731.4 712.0,730.2 715.0,728.7 718.0,727.5 721.0,726.4 724.0,725.1 727.0,723.1 730.0,721.0 733.0,719.3 736.0,717.3 739.0,715.3 742.0,713.0 745.0,711.2 748.0,709.1 751.0,708.5 754.0,708.0 757.0,707.6 760.0,707.0 763.0,706.4 766.0,705.9 769.0,705.4 772.0,704.9 775.0,703.1 778.0,701.1 781.0,699.3 784.0,697.4 787.0,695.5 790.0,693.5 793.0,692.9 796.0,692.7 799.0,692.4 802.0,691.9 805.0,691.8 808.0,691.4 811.0,691.1 814.0,691.5 817.0,692.0 820.0,692.5 823.0,692.9 826.0,693.3 829.0,694.1 832.0,694.5 835.0,694.3 838.0,694.3 841.0,694.2 844.0,693.9 847.0,693.7 850.0,693.6 853.0,693.4 856.0,693.3 859.0,693.3 862.0,693.2 865.0,693.0 868.0,692.9 871.0,692.6 874.0,692.9 877.0,693.2 880.0,693.2 883.0,693.3 886.0,693.7 889.0,693.8 892.0,694.0 895.0,693.9 898.0,694.3 901.0,694.4 904.0,694.6 907.0,694.5 910.0,694.5 913.0,694.7 916.0,694.6 919.0,694.6 922.0,694.7 925.0,694.7 928.0,694.9 931.0,695.0 934.0,694.8 937.0,694.9 940.0,695.2 943.0,695.0 946.0,695.2 949.0,695.1 952.0,695.3 955.0,695.3 958.0,695.2 961.0,695.3 964.0,695.5 967.0,695.4 970.0,695.4 973.0,695.5 976.0,695.5 979.0,695.5 982.0,695.6 985.0,695.7 988.0,695.9 991.0,696.0 994.0,695.9 997.0,696.0 1000.0,696.1 1003.0,696.1 1006.0,695.9 1009.0,696.0 1012.0,696.0 1015.0,695.9 1018.0,695.7 1021.0,696.0 1024.0,696.2 1027.0,696.3 1030.0,696.3 1033.0,696.4 1036.0,696.6 1039.0,696.9 1042.0,697.1 1045.0,697.1 1048.0,697.5 1051.0,697.5 1054.0,697.6 1057.0,697.9 1060.0,697.9 1063.0,698.1 1066.0,698.2 1069.0,698.5 1072.0,698.5 1075.0,698.7 1078.0,698.8 1081.0,699.1 1084.0,699.1 1087.0,699.1 1090.0,699.1 1093.0,699.1 1096.0,699.5 1099.0,699.4 1102.0,699.3 1105.0,699.6 1108.0,699.7 1111.0,699.5 1114.0,699.8 1117.0,699.7 1120.0,699.8 1123.0,699.9 1126.0,700.1 1129.0,700.0 1132.0,700.1 1135.0,700.2 1138.0,700.1 1141.0,700.2 1144.0,700.3 1147.0,700.3 1150.0,700.3 1153.0,700.4 1156.0,700.7 1159.0,700.7 1162.0,700.5 1165.0,700.9 1168.0,700.7 1171.0,700.9 1174.0,700.9 1177.0,700.9 1180.0,701.0 1183.0,700.9 1186.0,701.1 1189.0,701.0 1192.0,701.2 1195.0,701.1 1198.0,701.0 1201.0,701.2 1204.0,701.1 1207.0,701.1 1210.0,701.2 1213.0,701.2 1216.0,701.0 1219.0,701.2 1222.0,701.2 1225.0,701.2 1228.0,701.2 1231.0,701.0 1234.0,701.2 1237.0,701.2 1240.0,701.2 1243.0,701.0 1246.0,701.0 1249.0,701.2 1252.0,701.2 1255.0,701.2 1258.0,701.0 1261.0,701.0 1264.0,701.1 1267.0,701.0 1270.0,701.1 1273.0,701.1 1276.0,701.2 1279.0,701.2 1282.0,701.2 1285.0,701.0 1288.0,701.2 1291.0,701.0 1294.0,701.0 1297.0,701.1 1300.0,701.0 1303.0,701.0 1306.0,701.2 1309.0,701.0 1312.0,701.1 1315.0,701.0 1318.0,701.1 1321.0,701.2 1324.0,701.1 1327.0,701.0 1330.0,701.2 1333.0,701.3 1336.0,701.2 1339.0,701.3 1342.0,701.3 1345.0,701.2 1348.0,701.4 1351.0,701.5 1354.0,701.6 1357.0,701.5 1360.0,701.3 1363.0,701.1 1366.0,700.9 1369.0,700.7 1372.0,700.7 1375.0,700.3 1378.0,700.3 1381.0,700.0 1384.0,699.9 1387.0,699.6 1390.0,699.5 1393.0,699.2 1396.0,699.0 1399.0,698.9 1402.0,698.9 1405.0,699.0 1408.0,699.2 1411.0,699.2 1414.0,699.1 1417.0,699.0 1420.0,699.0 1423.0,699.1 1426.0,699.1 1429.0,699.3 1432.0,699.2 1435.0,699.1 1438.0,699.2 1441.0,699.2 1444.0,699.3 1447.0,699.1 1450.0,699.3 1453.0,698.9 1456.0,698.8 1459.0,698.4 1462.0,698.3 1465.0,698.1 1468.0,697.9 1471.0,697.8 1474.0,697.5 1477.0,697.5 1480.0,697.6 1483.0,697.6 1486.0,697.6 1489.0,697.5 1492.0,697.5 1495.0,697.7 1498.0,697.7 1501.0,697.5 1504.0,697.5 1507.0,697.7 1510.0,697.7 1513.0,697.6 1516.0,697.7 1519.0,697.6 1522.0,697.7 1525.0,697.5 1528.0,697.5 1531.0,697.7 1534.0,697.7 1537.0,697.7 1540.0,698.1 1543.0,698.0 1546.0,698.2 1549.0,698.5 1552.0,698.7 1555.0,698.7 1558.0,698.9 1561.0,699.1 1564.0,699.1 1567.0,699.3 1570.0,699.5 1573.0,699.5 1576.0,699.8 1579.0,700.0 1582.0,700.3 1585.0,700.4 1588.0,700.8 1591.0,701.2 1594.0,701.4 1597.0,701.9 1600.0,702.5 1603.0,703.3 1606.0,704.0 1609.0,704.5 1612.0,705.5 1615.0,706.4 1618.0,708.1 1621.0,709.6 1624.0,711.4 1627.0,713.1 1630.0,714.7 1633.0,716.4 1636.0,717.0 1639.0,717.6 1642.0,718.2 1645.0,718.7 1648.0,719.3 1651.0,719.9 1654.0,720.5 1657.0,721.4 1660.0,723.0 1663.0,724.7 1666.0,726.6 1669.0,728.2 1672.0,730.0 1675.0,731.7 1678.0,733.4 1681.0,735.4 1684.0,737.3 1687.0,739.2 1690.0,741.2 1693.0,743.3 1696.0,745.2 1699.0,747.1 1702.0,749.4 1705.0,751.7 1708.0,753.9 1711.0,755.4 1714.0,757.0 1717.0,758.3 1720.0,759.8 1723.0,761.0 1726.0,761.1 1729.0,761.3 1732.0,761.5 1735.0,761.6 1738.0,761.7 1741.0,761.8 1744.0,762.1 1747.0,762.2 1750.0,762.3 1753.0,762.5 1756.0,762.6 1759.0,762.8 1762.0,763.2 1765.0,763.6 1768.0,763.6 1771.0,763.9 1774.0,764.1 1777.0,764.5 1780.0,764.8 1783.0,765.0 1786.0,765.3 1789.0,765.5 1792.0,765.9 1795.0,766.0 1798.0,766.4 1801.0,766.5 1804.0,766.9 1807.0,767.1 1810.0,767.4 1813.0,767.6 1816.0,768.0 1819.0,768.0 1822.0,768.4 1825.0,768.7 1828.0,768.5 1831.0,768.4 1834.0,768.3 1837.0,768.2 1840.0,768.1 1843.0,768.1 1846.0,767.8 1849.0,767.7 1852.0,767.6 1855.0,767.5 1858.0,767.4 1861.0,767.2 1864.0,767.1 1867.0,767.0 1870.0,766.9 1873.0,766.8 1876.0,766.7" fill="none" stroke="#3c9aff" stroke-width="1.0" shape-rendering="crispEdges"/>
<polyline points="52.0,758.1 55.0,758.0 58.0,758.0 61.0,757.9 64.0,758.1 67.0,758.1 70.0,758.1 73.0,757.9 76.0,758.1 79.0,758.1 82.0,758.1 85.0,758.1 88.0,758.0 91.0,758.0 94.0,758.0 97.0,758.2 100.0,758.2 103.0,758.1 106.0,758.1 109.0,758.1 112.0,758.3 115.0,758.0 118.0,758.2 121.0,758.1 124.0,758.2 127.0,758.3 130.0,758.2 133.0,758.2 136.0,758.1 139.0,758.3 142.0,758.2 145.0,758.3 148.0,758.1 151.0,758.2 154.0,758.3 157.0,758.1 160.0,758.1 163.0,758.2 166.0,758.3 169.0,758.3 172.0,758.2 175.0,758.3 178.0,758.4 181.0,758.3 184.0,758.3 187.0,758.3 190.0,758.2 193.0,758.2 196.0,758.3 199.0,758.2 202.0,758.4 205.0,758.2 208.0,758.4 211.0,758.2 214.0,758.4 217.0,758.5 220.0,758.5 223.0,758.3 226.0,758.5 229.0,758.3 232.0,758.3 235.0,758.3 238.0,758.3 241.0,758.3 244.0,758.3 247.0,758.4 248.0,758.5 250.0,758.4 253.0,758.6 256.0,758.5 259.0,758.6 262.0,758.6 265.0,758.5 268.0,758.7 271.0,758.6 274.0,758.6 277.0,758.7 280.0,758.7 283.0,758.6 286.0,758.8 289.0,758.9 292.0,758.6 295.0,758.9 298.0,758.8 301.0,759.0 304.0,758.8 307.0,758.9 310.0,759.0 313.0,758.9 316.0,758.9 319.0,759.1 322.0,759.0 325.0,758.9 328.0,759.0 331.0,759.2 334.0,759.2 337.0,759.1 340.0,759.2 343.0,759.2 346.0,759.1 349.0,759.4 352.0,759.4 355.0,759.4 358.0,759.4 361.0,759.3 364.0,759.3 367.0,759.5 370.0,759.6 373.0,759.5 376.0,759.4 379.0,759.7 382.0,759.7 385.0,759.6 388.0,759.5 391.0,759.5 394.0,759.5 397.0,759.8 400.0,759.7 403.0,759.9 406.0,759.7 409.0,759.7 412.0,759.7 415.0,759.9 418.0,759.9 421.0,759.9 424.0,759.9 427.0,759.8 430.0,759.9 433.0,759.8 436.0,760.1 439.0,760.0 442.0,760.0 445.0,760.2 448.0,760.0 451.0,760.1 454.0,760.0 457.0,760.1 460.0,760.2 463.0,760.2 466.0,760.3 469.0,760.2 472.0,760.2 475.0,760.3 478.0,760.3 481.0,760.4 484.0,760.3 487.0,760.4 490.0,760.5 493.0,760.3 496.0,760.5 499.0,760.5 500.0,760.5 502.0,760.5 505.0,760.4 508.0,760.4 511.0,760.6 514.0,760.4 517.0,760.4 520.0,760.4 523.0,760.5 526.0,760.6 529.0,760.5 532.0,760.4 535.0,760.5 538.0,760.5 541.0,760.4 544.0,760.6 547.0,760.5 550.0,760.6 553.0,760.5 556.0,760.4 559.0,760.6 562.0,760.4 565.0,760.5 568.0,760.5 571.0,760.4 574.0,760.5 577.0,760.2 580.0,760.2 583.0,759.9 586.0,759.4 589.0,759.2 592.0,759.1 595.0,758.9 598.0,758.5 601.0,758.3 604.0,758.1 607.0,757.7 610.0,757.2 613.0,756.9 616.0,756.6 619.0,756.2 622.0,755.7 625.0,755.5 628.0,755.0 631.0,754.7 634.0,754.4 637.0,753.8 640.0,753.4 643.0,753.1 646.0,752.7 649.0,752.6 652.0,752.1 655.0,751.7 658.0,751.4 661.0,749.7 664.0,747.9 667.0,746.1 670.0,744.4 673.0,742.6 676.0,740.6 679.0,738.9 682.0,737.2 685.0,735.3 688.0,734.1 691.0,732.9 694.0,731.9 697.0,730.7 700.0,729.6 703.0,728.5 706.0,727.2 709.0,726.1 712.0,725.0 715.0,723.8 718.0,722.6 721.0,720.9 724.0,718.9 727.0,717.0 730.0,715.1 733.0,712.9 736.0,710.8 739.0,709.0 742.0,707.1 745.0,706.0 748.0,705.0 751.0,704.4 754.0,703.5 757.0,702.9 760.0,702.5 763.0,703.2 766.0,703.6 769.0,704.1 772.0,704.5 775.0,703.7 778.0,703.0 781.0,702.2 784.0,701.4 787.0,700.8 790.0,700.1 793.0,699.3 796.0,698.5 799.0,697.6 802.0,697.4 805.0,698.1 808.0,698.9 811.0,699.8 814.0,700.4 817.0,701.4 820.0,702.2 823.0,703.1 826.0,703.8 829.0,704.9 832.0,705.6 835.0,706.1 838.0,706.9 841.0,707.4 844.0,708.2 847.0,708.6 850.0,708.9 853.0,709.1 856.0,709.0 859.0,708.9 862.0,708.9 865.0,708.9 868.0,709.1 871.0,709.1 874.0,708.9 877.0,708.9 880.0,708.9 883.0,709.2 886.0,710.2 889.0,711.2 892.0,712.4 895.0,713.6 898.0,714.8 901.0,715.9 904.0,717.1 907.0,717.6 910.0,718.4 913.0,719.0 916.0,719.6 919.0,720.1 922.0,720.8 925.0,720.9 928.0,721.2 931.0,721.3 934.0,721.3 937.0,721.4 940.0,721.4 943.0,721.4 946.0,721.5 949.0,721.8 952.0,721.8 955.0,722.1 958.0,721.9 961.0,722.2 964.0,722.4 967.0,722.8 970.0,723.4 973.0,723.8 976.0,724.1 979.0,724.5 982.0,724.8 985.0,725.4 988.0,725.9 991.0,726.3 994.0,727.4 997.0,728.6 1000.0,729.5 1003.0,730.7 1006.0,731.4 1009.0,732.3 1012.0,733.4 1015.0,734.4 1018.0,735.3 1021.0,736.1 1024.0,737.0 1027.0,737.7 1030.0,738.4 1033.0,739.3 1036.0,740.2 1039.0,741.0 1042.0,741.7 1045.0,742.6 1048.0,743.5 1051.0,744.2 1054.0,744.8 1057.0,745.0 1060.0,745.2 1063.0,745.5 1066.0,746.0 1069.0,746.1 1072.0,746.3 1075.0,748.1 1078.0,752.1 1081.0,754.1 1084.0,754.4 1087.0,754.9 1090.0,755.2 1093.0,755.7 1096.0,756.0 1099.0,756.3 1102.0,756.8 1105.0,757.0 1108.0,757.2 1111.0,757.2 1114.0,757.3 1117.0,757.5 1120.0,757.7 1123.0,757.7 1126.0,757.8 1129.0,758.0 1132.0,758.0 1135.0,758.2 1138.0,758.4 1141.0,758.6 1144.0,758.6 1147.0,758.8 1150.0,758.8 1153.0,758.9 1156.0,759.2 1159.0,759.5 1162.0,760.5 1165.0,761.6 1168.0,762.5 1171.0,763.5 1174.0,764.5 1177.0,765.7 1180.0,766.8 1183.0,767.6 1186.0,768.5 1189.0,768.5 1192.0,768.5 1195.0,768.6 1198.0,768.5 1201.0,768.6 1204.0,768.4 1207.0,768.5 1210.0,768.6 1213.0,768.7 1216.0,768.7 1219.0,768.6 1222.0,768.5 1225.0,768.7 1228.0,768.8 1231.0,768.8 1234.0,768.8 1237.0,768.6 1240.0,768.8 1243.0,768.9 1246.0,768.7 1249.0,768.8 1252.0,768.8 1255.0,768.8 1258.0,769.0 1261.0,768.7 1264.0,768.8 1267.0,769.0 1270.0,769.0 1273.0,768.9 1276.0,769.1 1279.0,768.9 1282.0,768.9 1285.0,768.9 1288.0,769.1 1291.0,769.0 1294.0,769.1 1297.0,769.1 1300.0,769.1 1303.0,769.0 1306.0,769.0 1309.0,769.2 1312.0,769.2 1315.0,769.1 1318.0,769.2 1321.0,769.1 1324.0,769.4 1327.0,769.3 1330.0,769.4 1333.0,769.4 1336.0,769.4 1339.0,769.7 1342.0,769.7 1345.0,769.8 1348.0,769.7 1351.0,769.9 1354.0,767.4 1357.0,765.1 1360.0,762.7 1363.0,760.2 1366.0,758.8 1369.0,758.0 1372.0,757.2 1375.0,756.7 1378.0,755.1 1381.0,753.6 1384.0,751.9 1387.0,750.6 1390.0,748.9 1393.0,747.6 1396.0,746.0 1399.0,743.3 1402.0,741.1 1405.0,738.3 1408.0,736.1 1411.0,733.4 1414.0,732.3 1417.0,731.4 1420.0,730.6 1423.0,730.1 1426.0,729.3 1429.0,728.6 1432.0,727.6 1435.0,727.3 1438.0,727.1 1441.0,726.7 1444.0,726.4 1447.0,726.1 1450.0,725.8 1453.0,725.3 1456.0,724.8 1459.0,724.4 1462.0,724.0 1465.0,723.4 1468.0,722.9 1471.0,722.7 1474.0,721.6 1477.0,719.1 1480.0,716.8 1483.0,715.6 1486.0,714.2 1489.0,713.2 1492.0,712.2 1495.0,711.2 1498.0,710.5 1501.0,710.5 1504.0,710.5 1507.0,710.4 1510.0,710.5 1513.0,710.5 1516.0,710.6 1519.0,710.5 1522.0,710.5 1525.0,710.5 1528.0,710.5 1531.0,710.6 1534.0,710.1 1537.0,709.7 1540.0,709.3 1543.0,709.0 1546.0,708.6 1549.0,708.3 1552.0,707.7 1555.0,707.3 1558.0,707.1 1561.0,706.5 1564.0,706.1 1567.0,705.8 1570.0,705.3 1573.0,704.9 1576.0,704.5 1579.0,704.1 1582.0,703.7 1585.0,703.1 1588.0,702.7 1591.0,702.2 1594.0,701.7 1597.0,701.9 1600.0,702.5 1603.0,702.7 1606.0,703.2 1609.0,703.7 1612.0,704.2 1615.0,705.1 1618.0,706.1 1621.0,707.1 1624.0,708.4 1627.0,709.3 1630.0,710.5 1633.0,711.6 1636.0,712.1 1639.0,712.3 1642.0,712.5 1645.0,713.0 1648.0,713.2 1651.0,713.6 1654.0,713.7 1657.0,714.4 1660.0,716.2 1663.0,718.1 1666.0,719.8 1669.0,721.5 1672.0,722.8 1675.0,724.1 1678.0,725.2 1681.0,726.6 1684.0,727.8 1687.0,729.0 1690.0,730.0 1693.0,731.3 1696.0,733.8 1699.0,736.9 1702.0,739.9 1705.0,742.0 1708.0,743.9 1711.0,745.7 1714.0,747.9 1717.0,749.6 1720.0,751.5 1723.0,752.9 1726.0,752.9 1729.0,753.1 1732.0,753.5 1735.0,753.6 1738.0,753.9 1741.0,754.0 1744.0,754.3 1747.0,754.5 1750.0,754.6 1753.0,755.0 1756.0,755.1 1759.0,755.1 1762.0,755.3 1765.0,755.4 1768.0,755.4 1771.0,755.5 1774.0,755.6 1777.0,755.8 1780.0,756.0 1783.0,756.0 1786.0,756.1 1789.0,756.2 1792.0,759.3 1795.0,759.6 1798.0,759.7 1801.0,759.6 1804.0,759.4 1807.0,759.6 1810.0,759.6 1813.0,759.5 1816.0,759.4 1819.0,759.3 1822.0,759.2 1825.0,759.2 1828.0,759.2 1831.0,759.0 1834.0,759.0 1837.0,759.1 1840.0,759.1 1843.0,758.9 1846.0,758.8 1849.0,758.8 1852.0,759.0 1855.0,758.8 1858.0,758.7 1861.0,758.8 1864.0,758.8 1867.0,758.7 1870.0,758.6 1873.0,758.6 1876.0,758.5" fill="none" stroke="#f00000" stroke-width="1.0" shape-rendering="crispEdges"/>
<polyline points="52.0,754.6 55.0,754.6 58.0,754.7 61.0,754.8 64.0,754.7 67.0,754.7 70.0,754.8 73.0,754.6 76.0,754.7 79.0,754.7 82.0,754.8 85.0,754.9 88.0,754.8 91.0,754.8 94.0,754.9 97.0,754.8 100.0,754.9 103.0,755.0 106.0,754.9 109.0,755.0 112.0,754.8 115.0,755.0 118.0,755.0 121.0,755.0 124.0,754.9 127.0,755.0 130.0,755.1 133.0,755.1 136.0,755.2 139.0,755.0 142.0,755.0 145.0,755.2 148.0,755.0 151.0,755.1 154.0,755.0 157.0,755.2 160.0,755.2 163.0,755.1 166.0,755.1 169.0,755.2 172.0,755.2 175.0,755.3 178.0,755.3 181.0,755.3 184.0,755.2 187.0,755.2 190.0,755.5 193.0,755.3 196.0,755.5 199.0,755.4 202.0,755.3 205.0,755.5 208.0,755.3 211.0,755.4 214.0,755.5 217.0,755.5 220.0,755.4 223.0,755.6 226.0,755.5 229.0,755.7 232.0,755.5 235.0,755.5 238.0,755.6 241.0,755.8 244.0,755.8 247.0,755.8 248.0,755.6 250.0,755.7 253.0,755.7 256.0,755.7 259.0,755.8 262.0,755.7 265.0,755.6 268.0,755.5 271.0,755.8 274.0,755.8 277.0,755.7 280.0,755.7 283.0,755.7 286.0,755.7 289.0,755.6 292.0,755.6 295.0,755.6 298.0,755.6 301.0,755.4 304.0,755.6 307.0,755.4 310.0,755.6 313.0,755.4 316.0,755.4 319.0,755.5 322.0,755.4 325.0,755.4 328.0,755.4 331.0,755.6 334.0,755.6 337.0,755.3 340.0,755.3 343.0,755.3 346.0,755.5 349.0,755.4 352.0,755.5 355.0,755.4 358.0,755.3 361.0,755.4 364.0,755.3 367.0,755.4 370.0,755.3 373.0,755.2 376.0,755.1 379.0,755.3 382.0,755.2 385.0,755.4 388.0,755.1 391.0,755.2 394.0,755.3 397.0,755.2 400.0,755.3 403.0,755.2 406.0,755.2 409.0,755.1 412.0,755.3 415.0,755.3 418.0,755.3 421.0,755.3 424.0,755.2 427.0,755.3 430.0,755.5 433.0,755.4 436.0,755.4 439.0,755.3 442.0,755.4 445.0,755.3 448.0,755.6 451.0,755.4 454.0,755.5 457.0,755.4 460.0,755.5 463.0,755.7 466.0,755.6 469.0,755.5 472.0,755.6 475.0,755.7 478.0,755.6 481.0,755.5 484.0,755.8 487.0,755.7 490.0,755.9 493.0,755.9 496.0,755.8 499.0,755.9 500.0,755.9 502.0,755.7 505.0,755.8 508.0,755.9 511.0,755.9 514.0,755.8 517.0,755.9 520.0,755.9 523.0,755.9 526.0,755.7 529.0,755.9 532.0,755.9 535.0,755.7 538.0,755.7 541.0,755.7 544.0,755.8 547.0,755.7 550.0,755.8 553.0,755.8 556.0,755.8 559.0,755.7 562.0,755.7 565.0,755.7 568.0,755.9 571.0,755.8 574.0,755.8 577.0,756.2 580.0,756.6 583.0,757.3 586.0,757.8 589.0,758.2 592.0,758.2 595.0,758.5 598.0,758.7 601.0,758.8 604.0,759.0 607.0,759.1 610.0,759.4 613.0,759.7 616.0,759.9 619.0,760.0 622.0,760.1 625.0,760.2 628.0,760.5 631.0,760.8 634.0,760.8 637.0,761.1 640.0,761.4 643.0,761.5 646.0,761.8 649.0,762.1 652.0,763.2 655.0,764.1 658.0,765.2 661.0,766.3 664.0,767.3 667.0,769.5 670.0,771.5 673.0,773.4 676.0,775.7 679.0,777.7 682.0,779.7 685.0,781.8 688.0,782.8 691.0,784.3 694.0,785.5 697.0,786.5 700.0,788.0 703.0,789.1 706.0,790.1 709.0,791.1 712.0,792.1 715.0,793.3 718.0,794.5 721.0,796.4 724.0,798.5 727.0,801.1 730.0,803.4 733.0,805.9 736.0,808.2 739.0,810.4 742.0,812.6 745.0,814.8 748.0,817.1 751.0,817.4 754.0,817.9 757.0,818.0 760.0,818.3 763.0,818.4 766.0,818.2 769.0,817.7 772.0,817.2 775.0,818.4 778.0,819.7 781.0,821.0 784.0,822.2 787.0,823.1 790.0,823.8 793.0,824.5 796.0,825.3 799.0,826.2 802.0,826.7 805.0,826.9 808.0,825.9 811.0,824.8 814.0,823.7 817.0,822.5 820.0,821.2 823.0,819.9 826.0,818.6 829.0,817.6 832.0,816.2 835.0,815.7 838.0,815.6 841.0,815.4 844.0,815.0 847.0,814.7 850.0,814.5 853.0,814.3 856.0,814.3 859.0,814.4 862.0,814.2 865.0,813.9 868.0,814.0 871.0,813.7 874.0,813.6 877.0,813.6 880.0,813.4 883.0,813.5 886.0,813.1 889.0,811.6 892.0,810.1 895.0,808.6 898.0,807.2 901.0,805.6 904.0,804.1 907.0,803.8 910.0,803.1 913.0,802.8 916.0,802.3 919.0,802.0 922.0,801.3 925.0,801.3 928.0,801.1 931.0,801.0 934.0,800.9 937.0,800.7 940.0,800.7 943.0,800.3 946.0,800.3 949.0,800.1 952.0,799.6 955.0,799.0 958.0,798.4 961.0,797.8 964.0,797.3 967.0,797.0 970.0,796.8 973.0,796.6 976.0,796.3 979.0,796.1 982.0,795.9 985.0,795.4 988.0,795.2 991.0,795.0 994.0,794.4 997.0,791.3 1000.0,788.1 1003.0,787.0 1006.0,786.0 1009.0,785.0 1012.0,783.9 1015.0,783.0 1018.0,781.6 1021.0,780.7 1024.0,779.5 1027.0,778.5 1030.0,777.2 1033.0,776.3 1036.0,775.0 1039.0,773.8 1042.0,773.3 1045.0,772.7 1048.0,772.1 1051.0,771.4 1054.0,770.9 1057.0,770.3 1060.0,769.7 1063.0,769.1 1066.0,768.5 1069.0,767.7 1072.0,767.3 1075.0,763.2 1078.0,758.6 1081.0,756.3 1084.0,755.8 1087.0,755.3 1090.0,754.9 1093.0,754.5 1096.0,754.2 1099.0,753.6 1102.0,753.0 1105.0,752.8 1108.0,752.4 1111.0,752.2 1114.0,752.0 1117.0,752.0 1120.0,751.9 1123.0,751.7 1126.0,751.5 1129.0,751.4 1132.0,751.2 1135.0,751.1 1138.0,750.9 1141.0,750.6 1144.0,750.6 1147.0,750.4 1150.0,750.1 1153.0,750.1 1156.0,747.7 1159.0,745.0 1162.0,743.0 1165.0,742.0 1168.0,741.2 1171.0,740.1 1174.0,739.1 1177.0,737.9 1180.0,737.1 1183.0,736.1 1186.0,735.4 1189.0,735.1 1192.0,734.8 1195.0,734.8 1198.0,734.5 1201.0,734.6 1204.0,734.6 1207.0,734.7 1210.0,734.7 1213.0,734.5 1216.0,734.6 1219.0,734.6 1222.0,734.5 1225.0,734.6 1228.0,734.5 1231.0,734.7 1234.0,734.6 1237.0,734.7 1240.0,734.7 1243.0,734.5 1246.0,734.5 1249.0,734.6 1252.0,734.7 1255.0,734.7 1258.0,734.5 1261.0,734.6 1264.0,734.7 1267.0,734.6 1270.0,734.5 1273.0,734.5 1276.0,734.7 1279.0,734.5 1282.0,734.7 1285.0,734.7 1288.0,734.6 1291.0,734.5 1294.0,734.5 1297.0,734.6 1300.0,734.7 1303.0,734.5 1306.0,734.6 1309.0,734.6 1312.0,734.6 1315.0,734.6 1318.0,734.6 1321.0,734.7 1324.0,734.5 1327.0,734.7 1330.0,734.6 1333.0,734.6 1336.0,734.6 1339.0,734.7 1342.0,734.7 1345.0,734.4 1348.0,734.4 1351.0,734.2 1354.0,734.4 1357.0,738.4 1360.0,742.6 1363.0,746.8 1366.0,748.8 1369.0,749.3 1372.0,749.6 1375.0,750.1 1378.0,753.2 1381.0,756.4 1384.0,759.6 1387.0,762.8 1390.0,765.9 1393.0,769.2 1396.0,772.4 1399.0,775.1 1402.0,777.9 1405.0,780.7 1408.0,783.5 1411.0,786.2 1414.0,787.6 1417.0,788.5 1420.0,789.5 1423.0,790.3 1426.0,791.5 1429.0,792.3 1432.0,793.3 1435.0,793.7 1438.0,794.3 1441.0,794.9 1444.0,795.5 1447.0,795.9 1450.0,796.6 1453.0,797.4 1456.0,798.0 1459.0,798.7 1462.0,798.9 1465.0,798.9 1468.0,799.3 1471.0,799.3 1474.0,800.1 1477.0,802.2 1480.0,804.3 1483.0,806.6 1486.0,808.5 1489.0,810.6 1492.0,811.4 1495.0,811.5 1498.0,811.4 1501.0,811.6 1504.0,811.6 1507.0,811.8 1510.0,811.8 1513.0,812.0 1516.0,812.0 1519.0,812.1 1522.0,812.1 1525.0,812.4 1528.0,812.3 1531.0,812.3 1534.0,812.6 1537.0,813.1 1540.0,813.4 1543.0,813.6 1546.0,813.9 1549.0,814.5 1552.0,814.8 1555.0,815.0 1558.0,815.4 1561.0,815.9 1564.0,816.3 1567.0,817.0 1570.0,817.5 1573.0,818.0 1576.0,818.6 1579.0,819.3 1582.0,820.0 1585.0,820.3 1588.0,820.2 1591.0,819.9 1594.0,819.4 1597.0,818.7 1600.0,818.3 1603.0,818.0 1606.0,817.3 1609.0,816.8 1612.0,816.2 1615.0,815.9 1618.0,815.0 1621.0,814.3 1624.0,813.4 1627.0,812.9 1630.0,812.0 1633.0,811.3 1636.0,810.6 1639.0,809.8 1642.0,809.0 1645.0,808.1 1648.0,807.2 1651.0,806.1 1654.0,805.3 1657.0,804.4 1660.0,803.4 1663.0,801.9 1666.0,800.1 1669.0,798.4 1672.0,796.6 1675.0,794.6 1678.0,792.9 1681.0,790.9 1684.0,789.2 1687.0,787.1 1690.0,784.7 1693.0,782.7 1696.0,780.2 1699.0,778.2 1702.0,775.8 1705.0,773.9 1708.0,772.3 1711.0,770.5 1714.0,769.0 1717.0,767.2 1720.0,765.5 1723.0,764.2 1726.0,763.9 1729.0,763.3 1732.0,763.0 1735.0,762.6 1738.0,762.3 1741.0,762.0 1744.0,761.6 1747.0,761.3 1750.0,761.4 1753.0,761.3 1756.0,761.2 1759.0,760.9 1762.0,760.9 1765.0,760.6 1768.0,760.6 1771.0,760.5 1774.0,760.4 1777.0,760.2 1780.0,760.1 1783.0,760.0 1786.0,759.8 1789.0,759.7 1792.0,758.8 1795.0,757.8 1798.0,757.0 1801.0,756.8 1804.0,756.7 1807.0,756.8 1810.0,756.9 1813.0,756.8 1816.0,756.9 1819.0,756.7 1822.0,756.7 1825.0,756.6 1828.0,756.7 1831.0,756.5 1834.0,756.5 1837.0,756.7 1840.0,756.4 1843.0,756.4 1846.0,756.6 1849.0,756.4 1852.0,756.3 1855.0,756.5 1858.0,756.5 1861.0,756.3 1864.0,756.4 1867.0,756.3 1870.0,756.3 1873.0,756.3 1876.0,756.1" fill="none" stroke="#ff6ed2" stroke-width="1.0" shape-rendering="crispEdges"/>
</g>
<text x="61" y="525" fill="#ff6ed2" font-size="10.5" text-anchor="start">Tire Load FL [N]</text>
<rect x="148" y="515" width="11" height="11" fill="#ff0000"/>
<text x="153.5" y="524" fill="#ffffff" font-size="10.5" text-anchor="middle" font-weight="bold" textLength="7" lengthAdjust="spacingAndGlyphs">M</text>
<rect x="232" y="515" width="11" height="11" fill="#dcdcdc"/>
<text x="237.5" y="524.2" fill="#000000" font-size="10.5" text-anchor="middle" textLength="6.5" lengthAdjust="spacingAndGlyphs">O</text>
<rect x="316" y="515" width="11" height="11" fill="#ff0000"/>
<path d="M321.5 517.5L324.8 523.8H318.2Z" fill="none" stroke="#fff" stroke-width="1.4"/>
<text x="163" y="525" fill="#ff6ed2" font-size="10.5" text-anchor="start">2384</text>
<text x="247" y="525" fill="#e0e0e0" font-size="10.5" text-anchor="start">3016</text>
<text x="329" y="525" fill="#ff6ed2" font-size="10.5" text-anchor="start">-632</text>
<text x="61" y="538" fill="#f00000" font-size="10.5" text-anchor="start">Tire Load FR [N]</text>
<text x="163" y="538" fill="#f00000" font-size="10.5" text-anchor="start">2381</text>
<text x="247" y="538" fill="#e0e0e0" font-size="10.5" text-anchor="start">3017</text>
<text x="329" y="538" fill="#f00000" font-size="10.5" text-anchor="start">-637</text>
<text x="61" y="551" fill="#2ef0e0" font-size="10.5" text-anchor="start">Tire Load RL [N]</text>
<text x="163" y="551" fill="#2ef0e0" font-size="10.5" text-anchor="start">4247</text>
<text x="247" y="551" fill="#e0e0e0" font-size="10.5" text-anchor="start">3557</text>
<text x="329" y="551" fill="#2ef0e0" font-size="10.5" text-anchor="start">690</text>
<text x="61" y="564" fill="#3c9aff" font-size="10.5" text-anchor="start">Tire Load RR [N]</text>
<text x="163" y="564" fill="#3c9aff" font-size="10.5" text-anchor="start">4250</text>
<text x="247" y="564" fill="#e0e0e0" font-size="10.5" text-anchor="start">3569</text>
<text x="329" y="564" fill="#3c9aff" font-size="10.5" text-anchor="start">681</text>
<text x="61" y="693" fill="#ff6ed2" font-size="10.5" text-anchor="start">Camber FL [°]</text>
<rect x="148" y="683" width="11" height="11" fill="#ff0000"/>
<text x="153.5" y="692" fill="#ffffff" font-size="10.5" text-anchor="middle" font-weight="bold" textLength="7" lengthAdjust="spacingAndGlyphs">M</text>
<rect x="232" y="683" width="11" height="11" fill="#dcdcdc"/>
<text x="237.5" y="692.2" fill="#000000" font-size="10.5" text-anchor="middle" textLength="6.5" lengthAdjust="spacingAndGlyphs">O</text>
<rect x="316" y="683" width="11" height="11" fill="#ff0000"/>
<path d="M321.5 685.5L324.8 691.8H318.2Z" fill="none" stroke="#fff" stroke-width="1.4"/>
<text x="163" y="693" fill="#ff6ed2" font-size="10.5" text-anchor="start">-3.54</text>
<text x="247" y="693" fill="#e0e0e0" font-size="10.5" text-anchor="start">-3.72</text>
<text x="329" y="693" fill="#ff6ed2" font-size="10.5" text-anchor="start">0.18</text>
<text x="61" y="706" fill="#f00000" font-size="10.5" text-anchor="start">Camber FR [°]</text>
<text x="163" y="706" fill="#f00000" font-size="10.5" text-anchor="start">-3.53</text>
<text x="247" y="706" fill="#e0e0e0" font-size="10.5" text-anchor="start">-3.73</text>
<text x="329" y="706" fill="#f00000" font-size="10.5" text-anchor="start">0.20</text>
<text x="61" y="719" fill="#2ef0e0" font-size="10.5" text-anchor="start">Camber RL [°]</text>
<text x="163" y="719" fill="#2ef0e0" font-size="10.5" text-anchor="start">-3.47</text>
<text x="247" y="719" fill="#e0e0e0" font-size="10.5" text-anchor="start">-2.29</text>
<text x="329" y="719" fill="#2ef0e0" font-size="10.5" text-anchor="start">-1.18</text>
<text x="61" y="732" fill="#3c9aff" font-size="10.5" text-anchor="start">Camber RR [°]</text>
<text x="163" y="732" fill="#3c9aff" font-size="10.5" text-anchor="start">-3.47</text>
<text x="247" y="732" fill="#e0e0e0" font-size="10.5" text-anchor="start">-2.29</text>
<text x="329" y="732" fill="#3c9aff" font-size="10.5" text-anchor="start">-1.19</text>
<rect x="53" y="726" width="4" height="4" fill="#ffffff"/>
<path d="M45 603.5h12l2 2.5-2 2.5h-12l-1-2.5z" fill="#ffff00"/>
<path d="M45 641.5h12l2 2.5-2 2.5h-12l-1-2.5z" fill="#ffff00"/>
<path d="M45 751h12l2 4-2 4h-12l-1-4z" fill="#ffff00"/>
</svg></body></html>
